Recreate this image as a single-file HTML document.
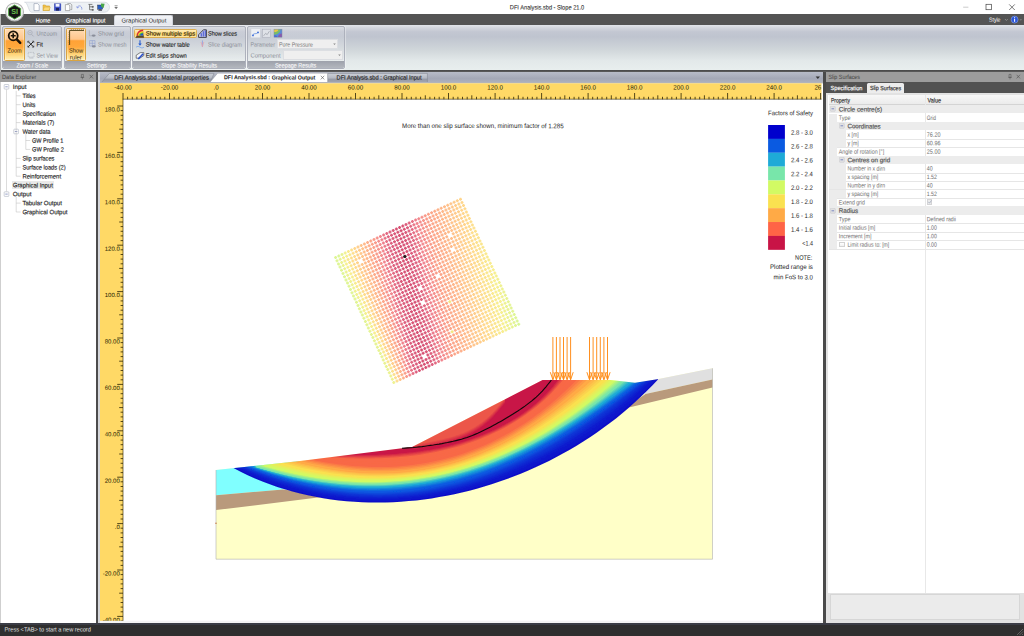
<!DOCTYPE html>
<html><head><meta charset="utf-8"><title>DFI Analysis.sbd - Slope 21.0</title>
<style>

*{box-sizing:border-box;margin:0;padding:0}
html,body{width:1024px;height:636px;overflow:hidden;background:#fff}
body{position:relative;font-family:'Liberation Sans', sans-serif;font-size:6px;color:#222;line-height:1}
svg text{font-family:'Liberation Sans', sans-serif}
.a{position:absolute;white-space:nowrap}
.t{position:absolute;white-space:nowrap;line-height:8px;height:8px}
.w{color:#fff}
.g{color:#8a8e96}
.b{font-weight:bold}
#titlebar{left:0;top:0;width:1024px;height:14px;background:#fff}
#tabbar{left:0;top:14px;width:1024px;height:11.3px;background:#545454}
#ribbon{left:0;top:25.3px;width:1024px;height:44.5px;background:linear-gradient(#e2e5ea 0%,#d4d7de 6%,#c3c7d2 15%,#bfc4cf 26%,#d0d6da 55%,#e3e9ea 80%,#e8eeee 100%)}
#ribsep{left:0;top:69.5px;width:1024px;height:3.3px;background:linear-gradient(#5a5a5a,#3e3e3e 35%,#7a7a7a 70%,#a4a6ac)}
.grp{position:absolute;top:26.4px;height:42.8px;border:0.6px solid #adb1bc;border-radius:2px;box-shadow:0 0 0 0.7px rgba(255,255,255,.5);background:linear-gradient(rgba(255,255,255,.10),rgba(255,255,255,.22))}
.grp .lb{position:absolute;left:0;right:0;bottom:0;height:7.6px;background:linear-gradient(#9da1ab,#b3b7be);color:#f4f5f7;text-align:center;line-height:7.4px;font-size:6px;border-radius:0 0 1.5px 1.5px;text-shadow:0 0 0.6px #e8e8e8}
.bigbtn{position:absolute;border:0.6px solid #d9a441;border-radius:1.5px;background:linear-gradient(#ffdcb4 0%,#ffc68c 33%,#ffa236 38%,#ffa83c 58%,#ffcf6e 78%,#fff0b4 100%);box-shadow:inset 0 0 0 0.6px rgba(255,255,255,.45)}
.hl{position:absolute;border:0.6px solid #dcae50;border-radius:1.5px;background:linear-gradient(#ffedb8,#ffdc84 45%,#ffd266 55%,#ffe6a0)}
#status{left:0;top:623.4px;width:1024px;height:12.6px;background:#2f2f2f;border-top:2px solid #3b3d46}
.phead{position:absolute;height:9.5px;background:#9d9d9d;color:#4a4a4a;line-height:9.5px;font-size:6.2px}
.tree .t{font-size:6.2px;color:#222}
.pg .t{font-size:6.1px;color:#727272}
.pg .grow{position:absolute;left:829px;width:195px;height:8.45px;background:#ececec}
.pg .line{position:absolute;left:829px;width:195px;height:0.6px;background:#e6e6e6}
.bx{position:absolute;width:5px;height:5px;border:0.6px solid #b4bac8;background:#fff;border-radius:1px}
.bx:after{content:"";position:absolute;left:0.9px;right:0.9px;top:1.55px;height:0.7px;background:#7a88c0}

</style></head>
<body>
<div class="a" id="titlebar"></div>
<div class="a" id="tabbar"></div>
<div class="a" id="ribbon"></div>
<div class="a" id="ribsep"></div>
<div class="a" style="left:0;top:14px;width:1px;height:58px;background:#b4b4b4"></div>
<svg class="a" style="left:508px;top:1px;overflow:visible" width="78" height="12"><text x="1.80" y="8.38" font-size="6.3" fill="#2a2a2a" stroke="#2a2a2a" stroke-width="0.09" textLength="74.40" lengthAdjust="spacingAndGlyphs" transform="rotate(0.1 1.80 8.38)">DFI Analysis.sbd - Slope 21.0</text></svg>
<svg class="a" style="left:955px;top:0" width="69" height="14" viewBox="955 0 69 14"><path d="M963.2 7.2h5.2" stroke="#b4b4b4" stroke-width="0.7"/><rect x="986" y="4.3" width="5.4" height="5.4" fill="none" stroke="#444" stroke-width="0.7"/><path d="M1009.2 4.4l5.6 5.6m0-5.6l-5.6 5.6" stroke="#444" stroke-width="0.7"/></svg>
<svg class="a" style="left:0;top:0" width="130" height="28" viewBox="0 0 130 28"><path d="M24.5 2.2H104.5a5 5 0 0 1 0 10H31.5C28.5 12.2 28 2.2 24.5 2.2Z" fill="#edf1f4" stroke="#c9ced6" stroke-width="0.6"/><path d="M34 3.6h3.6l1.6 1.6v5.4H34z" fill="#fff" stroke="#8a93a8" stroke-width="0.6"/><path d="M43 5h2.4l.8.9h3.3v4.6H43z" fill="#f3c24a" stroke="#c79a2a" stroke-width="0.5"/><path d="M43 10.5l1.3-3.4h6l-1.3 3.4z" fill="#fbd978" stroke="#c79a2a" stroke-width="0.4"/><rect x="54.3" y="3.8" width="6.6" height="6.8" fill="#3f51c8" stroke="#2a3aa0" stroke-width="0.4"/><rect x="55.6" y="3.9" width="3.9" height="2.8" fill="#f4f6ff"/><rect x="56" y="8" width="3" height="2.6" fill="#1c2560"/><path d="M65.4 4.6h3.2l1.2 1.2v4.8h-4.4z" fill="#fff" stroke="#777" stroke-width="0.55"/><path d="M67.4 3.6h3.2l1.2 1.2v4.8h-1.4" fill="none" stroke="#777" stroke-width="0.55"/><path d="M77.4 7.6c.4-2.4 4.2-2.4 4.4.8v1.2" fill="none" stroke="#93a2e2" stroke-width="1"/><path d="M76 6.2l1.2 2.4 2-1.4z" fill="#93a2e2"/><path d="M88.4 4.4h4M89.6 4.4v5.4M89.6 6.8h3.6M89.6 9.8h3.6" stroke="#555" stroke-width="0.7" fill="none"/><rect x="91.8" y="5.9" width="1.8" height="1.8" fill="#666"/><rect x="91.8" y="8.9" width="1.8" height="1.8" fill="#666"/><rect x="97.6" y="5" width="5" height="4.2" fill="#2a5fc0" stroke="#223" stroke-width="0.4"/><path d="M99 9.2h2.4l.8 1.6h-4z" fill="#445"/><path d="M101 3.4l3.6.4-1 4.2-2.6-1.4z" fill="#49a64a"/><path d="M114.6 5.6h3M114.8 7.2h2.6l-1.3 1.5z" stroke="#555" stroke-width="0.5" fill="#555"/><circle cx="14.6" cy="12" r="8.9" fill="#f0f0f0" stroke="#b4b4b4" stroke-width="1.1"/><circle cx="14.6" cy="12" r="8" fill="#fdfdfd" stroke="#dcdcdc" stroke-width="0.5"/><path d="M14.6 5l6 3.5v7l-6 3.5l-6-3.5v-7z" fill="#141414" stroke="#4fa83e" stroke-width="0.9"/><text x="14.6" y="14.4" font-size="6.6" font-weight="bold" fill="#68c04c" text-anchor="middle" font-family="'Liberation Sans', sans-serif" textLength="6.8" lengthAdjust="spacingAndGlyphs">SI</text></svg>
<div class="a" style="left:114.4px;top:14.8px;width:58.8px;height:10.8px;background:linear-gradient(#f2f3f6,#e4e6ec);border-radius:2px 2px 0 0;border:0.6px solid #d0d3da;border-bottom:none"></div>
<svg class="a" style="left:34px;top:14px;overflow:visible" width="18" height="12"><text x="1.80" y="8.44" font-size="5.9" fill="#fff" stroke="#fff" stroke-width="0.14" textLength="14.50" lengthAdjust="spacingAndGlyphs" transform="rotate(0.1 1.80 8.44)">Home</text></svg>
<svg class="a" style="left:64px;top:14px;overflow:visible" width="43" height="12"><text x="1.80" y="8.44" font-size="5.9" fill="#fff" stroke="#fff" stroke-width="0.14" textLength="39.60" lengthAdjust="spacingAndGlyphs" transform="rotate(0.1 1.80 8.44)">Graphical Input</text></svg>
<svg class="a" style="left:120px;top:14px;overflow:visible" width="48" height="12"><text x="1.50" y="8.44" font-size="5.9" fill="#1c1c1c" textLength="44.80" lengthAdjust="spacingAndGlyphs" transform="rotate(0.1 1.50 8.44)">Graphical Output</text></svg>
<svg class="a" style="left:988px;top:13px;overflow:visible" width="15" height="12"><text x="1.00" y="8.68" font-size="6" fill="#fff" textLength="11.50" lengthAdjust="spacingAndGlyphs" transform="rotate(0.1 1.00 8.68)">Style</text></svg>
<svg class="a" style="left:1000px;top:14px" width="24" height="11" viewBox="1000 14 24 11"><path d="M1005 19l1.4 1.5 1.4-1.5" fill="none" stroke="#a8a8a8" stroke-width="0.6"/><circle cx="1014.6" cy="19.6" r="3.5" fill="#2b56d8" stroke="#9ab0f0" stroke-width="0.5"/><rect x="1014.1" y="18.8" width="1" height="3" fill="#fff"/><rect x="1014.1" y="17.2" width="1" height="1" fill="#fff"/><path d="M1019.6 19.4l1.2 1.2 1.2-1.2z" fill="#9a9a9a"/></svg>
<div class="grp" style="left:2.2px;width:59.4px"><div class="lb"></div></div>
<div class="bigbtn" style="left:4.4px;top:28.3px;width:20.4px;height:32.6px"></div>
<svg class="a" style="left:4px;top:28px" width="22" height="20" viewBox="4 28 22 20"><circle cx="13.2" cy="35.8" r="4.5" fill="none" stroke="#1c1408" stroke-width="1.8"/><path d="M16.8 39.4l3.4 3.4" stroke="#1c1408" stroke-width="2.5" stroke-linecap="round"/><path d="M10.7 35.8h5M13.2 33.3v5" stroke="#1c1408" stroke-width="1.6"/></svg>
<svg class="a" style="left:6px;top:44px;overflow:visible" width="18" height="12"><text x="1.50" y="8.62" font-size="6.25" fill="#33240a" textLength="14.10" lengthAdjust="spacingAndGlyphs" transform="rotate(0.1 1.50 8.62)">Zoom</text></svg>
<svg class="a" style="left:26px;top:28px" width="10" height="32" viewBox="26 28 10 32"><circle cx="30" cy="32.6" r="2.2" fill="none" stroke="#a8acb6" stroke-width="0.7"/><path d="M31.6 34.4l2 2" stroke="#a8acb6" stroke-width="0.9"/><path d="M28.9 32.6h2.2" stroke="#a8acb6" stroke-width="0.6"/><path d="M28.2 41.6l5.2 5.2M33.4 41.6l-5.2 5.2" stroke="#222" stroke-width="1"/><path d="M27.8 41.2h1.6M27.8 41.2v1.6M33.8 41.2h-1.6M33.8 41.2v1.6M27.8 47.2h1.6M27.8 47.2v-1.6M33.8 47.2h-1.6M33.8 47.2v-1.6" stroke="#222" stroke-width="0.6"/><rect x="28.2" y="52.4" width="5.8" height="4.6" fill="none" stroke="#a8acb6" stroke-width="0.6" stroke-dasharray="1 0.6"/><path d="M29.4 58h4" stroke="#a8acb6" stroke-width="0.6"/></svg>
<svg class="a" style="left:35px;top:27px;overflow:visible" width="24" height="12"><text x="1.50" y="8.62" font-size="6.25" fill="#8a8e96" textLength="20.70" lengthAdjust="spacingAndGlyphs" transform="rotate(0.1 1.50 8.62)">Unzoom</text></svg>
<svg class="a" style="left:35px;top:38px;overflow:visible" width="10" height="12"><text x="1.50" y="8.62" font-size="6.25" fill="#202020" stroke="#202020" stroke-width="0.13" textLength="6.30" lengthAdjust="spacingAndGlyphs" transform="rotate(0.1 1.50 8.62)">Fit</text></svg>
<svg class="a" style="left:35px;top:49px;overflow:visible" width="25" height="12"><text x="1.50" y="8.62" font-size="6.25" fill="#8a8e96" textLength="21.30" lengthAdjust="spacingAndGlyphs" transform="rotate(0.1 1.50 8.62)">Set View</text></svg>
<div class="grp" style="left:63.6px;width:67.2px"><div class="lb"></div></div>
<div class="bigbtn" style="left:66px;top:28.3px;width:20.3px;height:32.6px"></div>
<svg class="a" style="left:66px;top:28px" width="21" height="20" viewBox="66 28 21 20"><path d="M69.6 30.4H84M69.6 30.4V45" stroke="#3a3008" stroke-width="0.9" fill="none"/><path d="M71.5 30.4v-1.2M73.5 30.4v-1.2M75.5 30.4v-1.2M77.5 30.4v-1.2M79.5 30.4v-1.2M81.5 30.4v-1.2M83.5 30.4v-1.2M69.6 32.5h-1M69.6 34.5h-1M69.6 36.5h-1M69.6 38.5h-1M69.6 40.5h-1M69.6 42.5h-1M69.6 44.5h-1" stroke="#6a5a20" stroke-width="0.5"/></svg>
<svg class="a" style="left:67px;top:44px;overflow:visible" width="18" height="12"><text x="1.90" y="8.62" font-size="6.25" fill="#33240a" textLength="14.10" lengthAdjust="spacingAndGlyphs" transform="rotate(0.1 1.90 8.62)">Show</text></svg>
<svg class="a" style="left:68px;top:51px;overflow:visible" width="16" height="12"><text x="1.80" y="8.52" font-size="6.25" fill="#33240a" textLength="12.00" lengthAdjust="spacingAndGlyphs" transform="rotate(0.1 1.80 8.52)">ruler</text></svg>
<svg class="a" style="left:88px;top:28px" width="10" height="22" viewBox="88 28 10 22"><path d="M89.4 30.4v5.4h6" stroke="#a0a4b0" stroke-width="0.6" fill="none"/><ellipse cx="93.6" cy="35.6" rx="2" ry="1.1" fill="#8a8e9a"/><path d="M89.6 40.6h5.4v5.4h-5.4zM92.3 40.6v5.4M89.6 43.3h5.4" stroke="#8f9fd0" stroke-width="0.6" fill="none"/><ellipse cx="93.8" cy="46.4" rx="2" ry="1.1" fill="#8a8e9a"/></svg>
<svg class="a" style="left:97px;top:27px;overflow:visible" width="29" height="12"><text x="1.10" y="8.62" font-size="6.25" fill="#8a8e96" textLength="25.90" lengthAdjust="spacingAndGlyphs" transform="rotate(0.1 1.10 8.62)">Show grid</text></svg>
<svg class="a" style="left:97px;top:38px;overflow:visible" width="32" height="12"><text x="1.10" y="8.62" font-size="6.25" fill="#8a8e96" textLength="28.30" lengthAdjust="spacingAndGlyphs" transform="rotate(0.1 1.10 8.62)">Show mesh</text></svg>
<div class="grp" style="left:132.4px;width:113.6px"><div class="lb"></div></div>
<div class="hl" style="left:134.4px;top:28.6px;width:62.4px;height:9.9px"></div>
<svg class="a" style="left:134px;top:28px" width="12" height="32" viewBox="134 28 12 32"><path d="M135.8 37.6l1.2-2.2h6.4l.4 2.2z" fill="#5a4628" stroke="#3a2c14" stroke-width="0.4"/><path d="M136.6 35.6c.2-3.4 2.6-5.8 6.6-6v6z" fill="#d8283c"/><path d="M137.8 35.6c.2-2.6 2-4.2 5.4-4.6v4.6z" fill="#f2d428"/><path d="M139 35.6c.2-1.8 1.6-3 4.2-3.2v3.2z" fill="#38b050"/><path d="M140.2 35.6c.2-1 1.2-1.8 3-2v2z" fill="#2848d8"/><path d="M140 40.2v4.6" stroke="#2a5fd0" stroke-width="1.1"/><path d="M138.2 43.4l1.8 2.4 1.8-2.4z" fill="#2a5fd0"/><path d="M136 47.2c1.4-1 2.6-1 4 0s2.6 1 4 0" stroke="#7aa6e8" stroke-width="0.8" fill="none"/><path d="M136.2 58.2v-3l4-2.6h3.6v3l-4 2.6z" fill="#f4f6fa" stroke="#333" stroke-width="0.6"/><path d="M137.6 58.4l5-5.2 1.2 1-5 5.2z" fill="#2a4fc8"/></svg>
<svg class="a" style="left:144px;top:27px;overflow:visible" width="53" height="12"><text x="1.80" y="8.62" font-size="6.25" fill="#2a1e08" stroke="#2a1e08" stroke-width="0.13" textLength="49.40" lengthAdjust="spacingAndGlyphs" transform="rotate(0.1 1.80 8.62)">Show multiple slips</text></svg>
<svg class="a" style="left:144px;top:38px;overflow:visible" width="47" height="12"><text x="1.80" y="8.62" font-size="6.25" fill="#202020" stroke="#202020" stroke-width="0.13" textLength="43.80" lengthAdjust="spacingAndGlyphs" transform="rotate(0.1 1.80 8.62)">Show water table</text></svg>
<svg class="a" style="left:144px;top:49px;overflow:visible" width="44" height="12"><text x="1.80" y="8.62" font-size="6.25" fill="#202020" stroke="#202020" stroke-width="0.13" textLength="40.90" lengthAdjust="spacingAndGlyphs" transform="rotate(0.1 1.80 8.62)">Edit slips shown</text></svg>
<svg class="a" style="left:198px;top:28px" width="10" height="22" viewBox="198 28 10 22"><path d="M198.6 37.4v-2.6l4.8-5h3v7.6z" fill="#d4d8ee" stroke="#34343e" stroke-width="0.9" stroke-linejoin="round"/><path d="M201.2 36.6v-3.4M203.2 36.6v-5.4M205.2 36.6v-6.2" stroke="#2a3cc8" stroke-width="1"/><path d="M202.4 40.4v6.6" stroke="#9aa6e0" stroke-width="1"/><path d="M201 42l1.4 4.8 1.4-4.8" stroke="#e8a0a8" stroke-width="0.7" fill="none"/></svg>
<svg class="a" style="left:207px;top:27px;overflow:visible" width="33" height="12"><text x="1.00" y="8.62" font-size="6.25" fill="#202020" stroke="#202020" stroke-width="0.13" textLength="29.00" lengthAdjust="spacingAndGlyphs" transform="rotate(0.1 1.00 8.62)">Show slices</text></svg>
<svg class="a" style="left:207px;top:38px;overflow:visible" width="37" height="12"><text x="1.00" y="8.62" font-size="6.25" fill="#8a8e96" textLength="33.80" lengthAdjust="spacingAndGlyphs" transform="rotate(0.1 1.00 8.62)">Slice diagram</text></svg>
<div class="grp" style="left:247.4px;width:97.2px"><div class="lb"></div></div>
<svg class="a" style="left:250px;top:28px" width="36" height="11" viewBox="250 28 36 11"><rect x="251" y="28.8" width="9.2" height="9" fill="#eef0f4" stroke="#cfd3da" stroke-width="0.5"/><path d="M252.4 35.6c2-3.6 3.6-.4 6-3.6" stroke="#5a8ae0" stroke-width="0.8" fill="none"/><circle cx="253" cy="35.4" r="0.9" fill="#3a6ad8"/><circle cx="258" cy="32.4" r="0.9" fill="#3a6ad8"/><rect x="262.6" y="29.2" width="8" height="8" fill="#dfe2e8" stroke="#a8acb6" stroke-width="0.5"/><path d="M263.6 35.8l2-2.4 1.6 1.2 2.2-3.4" stroke="#8a8e98" stroke-width="0.6" fill="none"/><rect x="274" y="29.2" width="8" height="8" fill="#5a8ad8" stroke="#8a8e9c" stroke-width="0.5"/><path d="M274.2 29.4h4.2c.4 1.6-1.4 2.6-4.2 2.8z" fill="#e8c840"/><path d="M274.2 32.4c2.6-.2 4.4-1 4.6-2.8h1.6c0 3-3 4.8-6.2 5.2z" fill="#7cc060"/><path d="M278 37c.4-2 2-3.2 3.8-3.4v3.4z" fill="#8a5aa8"/><path d="M274.2 35.2c1.6 0 2.8.6 3.4 1.8h-3.4z" fill="#4a6ad0"/></svg>
<svg class="a" style="left:249px;top:38px;overflow:visible" width="28" height="12"><text x="1.50" y="8.62" font-size="6.25" fill="#8a8e96" textLength="24.50" lengthAdjust="spacingAndGlyphs" transform="rotate(0.1 1.50 8.62)">Parameter</text></svg>
<svg class="a" style="left:249px;top:49px;overflow:visible" width="34" height="12"><text x="1.50" y="8.62" font-size="6.25" fill="#8a8e96" textLength="30.00" lengthAdjust="spacingAndGlyphs" transform="rotate(0.1 1.50 8.62)">Component</text></svg>
<div class="a" style="left:277.4px;top:39.2px;width:60.8px;height:9.7px;background:#efefef;border:0.5px solid #dcdee2"></div>
<svg class="a" style="left:278px;top:38px;overflow:visible" width="38" height="12"><text x="1.00" y="8.62" font-size="6.25" fill="#777" textLength="34.00" lengthAdjust="spacingAndGlyphs" transform="rotate(0.1 1.00 8.62)">Pore Pressure</text></svg>
<div class="a" style="left:282.6px;top:50.2px;width:60px;height:9.8px;background:#efefef;border:0.5px solid #dcdee2"></div>
<svg class="a" style="left:330px;top:40px" width="14" height="20" viewBox="330 40 14 20"><path d="M333.2 43.4h2.6l-1.3 1.6zM338.2 54.4h2.6l-1.3 1.6z" fill="#888"/></svg>
<svg class="a" style="left:15px;top:59px;overflow:visible" width="36" height="12"><text x="1.40" y="8.55" font-size="6.2" fill="#f2f3f6" stroke="#fff" stroke-width="0.11" textLength="32.00" lengthAdjust="spacingAndGlyphs" transform="rotate(0.1 1.40 8.55)">Zoom / Scale</text></svg>
<svg class="a" style="left:85px;top:59px;overflow:visible" width="24" height="12"><text x="1.80" y="8.55" font-size="6.2" fill="#f2f3f6" stroke="#fff" stroke-width="0.11" textLength="20.10" lengthAdjust="spacingAndGlyphs" transform="rotate(0.1 1.80 8.55)">Settings</text></svg>
<svg class="a" style="left:160px;top:59px;overflow:visible" width="59" height="12"><text x="1.30" y="8.55" font-size="6.2" fill="#f2f3f6" stroke="#fff" stroke-width="0.11" textLength="55.80" lengthAdjust="spacingAndGlyphs" transform="rotate(0.1 1.30 8.55)">Slope Stability Results</text></svg>
<svg class="a" style="left:274px;top:59px;overflow:visible" width="45" height="12"><text x="1.00" y="8.55" font-size="6.2" fill="#f2f3f6" stroke="#fff" stroke-width="0.11" textLength="41.30" lengthAdjust="spacingAndGlyphs" transform="rotate(0.1 1.00 8.55)">Seepage Results</text></svg>
<div class="a" style="left:0;top:72px;width:96px;height:552px;background:#fff"></div>
<div class="a" style="left:0;top:81.5px;width:1px;height:542px;background:#cfcfcf"></div>
<div class="phead" style="left:0;top:72px;width:95.5px;"></div>
<svg class="a" style="left:1px;top:70px;overflow:visible" width="38" height="12"><text x="1.00" y="9.01" font-size="6.1" fill="#444" textLength="34.50" lengthAdjust="spacingAndGlyphs" transform="rotate(0.1 1.00 9.01)">Data Explorer</text></svg>
<svg class="a" style="left:78px;top:72px" width="18" height="10" viewBox="78 72 18 10"><path d="M81.4 74.4h2v3h-2zM80.6 77.4h3.6M82.4 77.4v2" stroke="#555" stroke-width="0.55" fill="none"/><path d="M89.6 74.8l3.4 3.6m0-3.6l-3.4 3.6" stroke="#555" stroke-width="0.65"/></svg>
<div class="a" style="left:95.5px;top:72px;width:2.5px;height:552px;background:#4c4c4c"></div>
<div class="a" style="left:98px;top:72px;width:2px;height:552px;background:#d4d6da"></div>
<div class="tree">
<svg class="a" style="left:11px;top:80px;overflow:visible" width="17" height="12"><text x="1.80" y="9.03" font-size="6.3" fill="#161616" stroke="#222" stroke-width="0.14" textLength="13.60" lengthAdjust="spacingAndGlyphs" transform="rotate(0.1 1.80 9.03)">Input</text></svg>
<svg class="a" style="left:21px;top:89px;overflow:visible" width="17" height="12"><text x="1.40" y="8.97" font-size="6.3" fill="#161616" stroke="#222" stroke-width="0.14" textLength="13.30" lengthAdjust="spacingAndGlyphs" transform="rotate(0.1 1.40 8.97)">Titles</text></svg>
<svg class="a" style="left:21px;top:98px;overflow:visible" width="17" height="12"><text x="1.40" y="8.91" font-size="6.3" fill="#161616" stroke="#222" stroke-width="0.14" textLength="13.10" lengthAdjust="spacingAndGlyphs" transform="rotate(0.1 1.40 8.91)">Units</text></svg>
<svg class="a" style="left:21px;top:107px;overflow:visible" width="37" height="12"><text x="1.40" y="8.85" font-size="6.3" fill="#161616" stroke="#222" stroke-width="0.14" textLength="33.40" lengthAdjust="spacingAndGlyphs" transform="rotate(0.1 1.40 8.85)">Specification</text></svg>
<svg class="a" style="left:21px;top:116px;overflow:visible" width="35" height="12"><text x="1.40" y="8.79" font-size="6.3" fill="#161616" stroke="#222" stroke-width="0.14" textLength="31.90" lengthAdjust="spacingAndGlyphs" transform="rotate(0.1 1.40 8.79)">Materials (7)</text></svg>
<svg class="a" style="left:21px;top:125px;overflow:visible" width="32" height="12"><text x="1.40" y="8.73" font-size="6.3" fill="#161616" stroke="#222" stroke-width="0.14" textLength="28.10" lengthAdjust="spacingAndGlyphs" transform="rotate(0.1 1.40 8.73)">Water data</text></svg>
<svg class="a" style="left:31px;top:134px;overflow:visible" width="35" height="12"><text x="1.00" y="8.67" font-size="6.3" fill="#161616" stroke="#222" stroke-width="0.14" textLength="31.40" lengthAdjust="spacingAndGlyphs" transform="rotate(0.1 1.00 8.67)">GW Profile 1</text></svg>
<svg class="a" style="left:31px;top:143px;overflow:visible" width="35" height="12"><text x="1.00" y="8.61" font-size="6.3" fill="#161616" stroke="#222" stroke-width="0.14" textLength="31.90" lengthAdjust="spacingAndGlyphs" transform="rotate(0.1 1.00 8.61)">GW Profile 2</text></svg>
<svg class="a" style="left:21px;top:152px;overflow:visible" width="35" height="12"><text x="1.40" y="8.55" font-size="6.3" fill="#161616" stroke="#222" stroke-width="0.14" textLength="31.90" lengthAdjust="spacingAndGlyphs" transform="rotate(0.1 1.40 8.55)">Slip surfaces</text></svg>
<svg class="a" style="left:21px;top:161px;overflow:visible" width="47" height="12"><text x="1.40" y="8.49" font-size="6.3" fill="#161616" stroke="#222" stroke-width="0.14" textLength="43.20" lengthAdjust="spacingAndGlyphs" transform="rotate(0.1 1.40 8.49)">Surface loads (2)</text></svg>
<svg class="a" style="left:21px;top:170px;overflow:visible" width="42" height="12"><text x="1.40" y="8.43" font-size="6.3" fill="#161616" stroke="#222" stroke-width="0.14" textLength="38.70" lengthAdjust="spacingAndGlyphs" transform="rotate(0.1 1.40 8.43)">Reinforcement</text></svg>
<div class="a" style="left:11.6px;top:181.0px;width:42.5px;height:8.4px;background:#e9e9e9"></div>
<svg class="a" style="left:11px;top:179px;overflow:visible" width="44" height="12"><text x="1.80" y="8.37" font-size="6.3" fill="#161616" stroke="#222" stroke-width="0.14" textLength="40.00" lengthAdjust="spacingAndGlyphs" transform="rotate(0.1 1.80 8.37)">Graphical Input</text></svg>
<svg class="a" style="left:11px;top:188px;overflow:visible" width="22" height="12"><text x="1.80" y="8.31" font-size="6.3" fill="#161616" stroke="#222" stroke-width="0.14" textLength="18.60" lengthAdjust="spacingAndGlyphs" transform="rotate(0.1 1.80 8.31)">Output</text></svg>
<svg class="a" style="left:21px;top:197px;overflow:visible" width="43" height="12"><text x="1.40" y="8.25" font-size="6.3" fill="#161616" stroke="#222" stroke-width="0.14" textLength="39.50" lengthAdjust="spacingAndGlyphs" transform="rotate(0.1 1.40 8.25)">Tabular Output</text></svg>
<svg class="a" style="left:21px;top:206px;overflow:visible" width="49" height="12"><text x="1.40" y="8.19" font-size="6.3" fill="#161616" stroke="#222" stroke-width="0.14" textLength="45.00" lengthAdjust="spacingAndGlyphs" transform="rotate(0.1 1.40 8.19)">Graphical Output</text></svg>
<svg class="a" style="left:0;top:80px" width="96" height="140" viewBox="0 80 96 140"><rect x="4.2" y="84.5" width="4.6" height="4.6" fill="#fff" stroke="#9aa2b2" stroke-width="0.5" rx="0.6"/><path d="M5.3 86.8h2.4" stroke="#4a5aa0" stroke-width="0.6"/><path d="M16.2 95.8h4.4" stroke="#b8b8b8" stroke-width="0.5"/><path d="M16.2 104.7h4.4" stroke="#b8b8b8" stroke-width="0.5"/><path d="M16.2 113.7h4.4" stroke="#b8b8b8" stroke-width="0.5"/><path d="M16.2 122.6h4.4" stroke="#b8b8b8" stroke-width="0.5"/><rect x="13.8" y="129.2" width="4.6" height="4.6" fill="#fff" stroke="#9aa2b2" stroke-width="0.5" rx="0.6"/><path d="M14.9 131.5h2.4" stroke="#4a5aa0" stroke-width="0.6"/><path d="M25.8 140.5h4.4" stroke="#b8b8b8" stroke-width="0.5"/><path d="M25.8 149.4h4.4" stroke="#b8b8b8" stroke-width="0.5"/><path d="M16.2 158.4h4.4" stroke="#b8b8b8" stroke-width="0.5"/><path d="M16.2 167.3h4.4" stroke="#b8b8b8" stroke-width="0.5"/><path d="M16.2 176.2h4.4" stroke="#b8b8b8" stroke-width="0.5"/><rect x="4.2" y="191.8" width="4.6" height="4.6" fill="#fff" stroke="#9aa2b2" stroke-width="0.5" rx="0.6"/><path d="M5.3 194.1h2.4" stroke="#4a5aa0" stroke-width="0.6"/><path d="M16.2 203.1h4.4" stroke="#b8b8b8" stroke-width="0.5"/><path d="M16.2 212.0h4.4" stroke="#b8b8b8" stroke-width="0.5"/><path d="M6.5 89.4V191.5M16.2 90.8V176.2M25.8 134.1V149.4M16.2 196.7V212.0" stroke="#b8b8b8" stroke-width="0.5" fill="none"/></svg>
</div>
<div class="a" style="left:100px;top:72px;width:723px;height:10.8px;background:linear-gradient(#b8bcc8,#a4a8b6 60%,#aeb2be)"></div>
<svg class="a" style="left:100px;top:72px" width="723" height="11" viewBox="100 72 723 11"><defs><linearGradient id="tg" x1="0" y1="0" x2="0" y2="1"><stop offset="0" stop-color="#ccd0d8"/><stop offset="0.5" stop-color="#b4b8c2"/><stop offset="0.58" stop-color="#9498a4"/><stop offset="1" stop-color="#a4a8b2"/></linearGradient></defs><path d="M101 83L109.4 73.4H214L210 83z" fill="url(#tg)" stroke="#7c808a" stroke-width="0.5"/><path d="M327.6 83V73.4H427.4V83z" fill="url(#tg)" stroke="#7c808a" stroke-width="0.5"/><path d="M209.4 83L217.6 73.2H327.6V83z" fill="#fff" stroke="#8a8e98" stroke-width="0.4"/><path d="M320.8 75.8l3.4 3.6m0-3.6l-3.4 3.6" stroke="#555" stroke-width="0.6"/><path d="M815.6 76.4h4.4l-2.2 2.6z" fill="#333"/></svg>
<svg class="a" style="left:113px;top:71px;overflow:visible" width="98" height="12"><text x="1.20" y="8.44" font-size="5.9" fill="#1c1c1c" stroke="#333" stroke-width="0.18" textLength="94.55" lengthAdjust="spacingAndGlyphs" transform="rotate(0.1 1.20 8.44)">DFI Analysis.sbd : Material properties</text></svg>
<svg class="a" style="left:223px;top:71px;overflow:visible" width="95" height="12"><text x="1.00" y="8.31" font-size="5.8" fill="#141414" font-weight="bold" textLength="91.30" lengthAdjust="spacingAndGlyphs" transform="rotate(0.1 1.00 8.31)">DFI Analysis.sbd : Graphical Output</text></svg>
<svg class="a" style="left:335px;top:71px;overflow:visible" width="88" height="12"><text x="1.60" y="8.44" font-size="5.9" fill="#1c1c1c" stroke="#333" stroke-width="0.18" textLength="84.90" lengthAdjust="spacingAndGlyphs" transform="rotate(0.1 1.60 8.44)">DFI Analysis.sbd : Graphical Input</text></svg>
<svg style="position:absolute;left:100px;top:82px" width="723" height="541" viewBox="100 82 723 541" font-family="'Liberation Sans', sans-serif">
<rect x="100" y="82" width="723" height="541" fill="#fff"/>
<rect x="100" y="82" width="723" height="1.4" fill="#b2b4ba"/>
<rect x="100" y="83.3" width="721.5" height="15.9" fill="#ffd966"/>
<rect x="100" y="83" width="23" height="540" fill="#ffd966"/>
<rect x="123" y="99" width="698.5" height="524" fill="#fff"/>
<path d="M122.8 99.2H821.5M123 99V623" stroke="#4a3d10" stroke-width="0.7" fill="none"/>
<path d="M123.0 93V99.3M127.6 96.8V99.3M132.3 96.8V99.3M136.9 96.8V99.3M141.6 96.8V99.3M146.2 95.3V99.3M150.9 96.8V99.3M155.5 96.8V99.3M160.2 96.8V99.3M164.8 96.8V99.3M169.5 93V99.3M174.1 96.8V99.3M178.8 96.8V99.3M183.4 96.8V99.3M188.1 96.8V99.3M192.7 95.3V99.3M197.4 96.8V99.3M202.0 96.8V99.3M206.7 96.8V99.3M211.3 96.8V99.3M216.0 93V99.3M220.7 96.8V99.3M225.3 96.8V99.3M230.0 96.8V99.3M234.6 96.8V99.3M239.3 95.3V99.3M243.9 96.8V99.3M248.6 96.8V99.3M253.2 96.8V99.3M257.9 96.8V99.3M262.5 93V99.3M267.2 96.8V99.3M271.8 96.8V99.3M276.5 96.8V99.3M281.1 96.8V99.3M285.8 95.3V99.3M290.4 96.8V99.3M295.1 96.8V99.3M299.7 96.8V99.3M304.4 96.8V99.3M309.0 93V99.3M313.7 96.8V99.3M318.3 96.8V99.3M323.0 96.8V99.3M327.6 96.8V99.3M332.3 95.3V99.3M336.9 96.8V99.3M341.6 96.8V99.3M346.2 96.8V99.3M350.9 96.8V99.3M355.5 93V99.3M360.2 96.8V99.3M364.8 96.8V99.3M369.5 96.8V99.3M374.1 96.8V99.3M378.8 95.3V99.3M383.4 96.8V99.3M388.1 96.8V99.3M392.7 96.8V99.3M397.4 96.8V99.3M402.0 93V99.3M406.7 96.8V99.3M411.3 96.8V99.3M416.0 96.8V99.3M420.6 96.8V99.3M425.3 95.3V99.3M429.9 96.8V99.3M434.6 96.8V99.3M439.2 96.8V99.3M443.9 96.8V99.3M448.5 93V99.3M453.2 96.8V99.3M457.9 96.8V99.3M462.5 96.8V99.3M467.2 96.8V99.3M471.8 95.3V99.3M476.5 96.8V99.3M481.1 96.8V99.3M485.8 96.8V99.3M490.4 96.8V99.3M495.1 93V99.3M499.7 96.8V99.3M504.4 96.8V99.3M509.0 96.8V99.3M513.7 96.8V99.3M518.3 95.3V99.3M523.0 96.8V99.3M527.6 96.8V99.3M532.3 96.8V99.3M536.9 96.8V99.3M541.6 93V99.3M546.2 96.8V99.3M550.9 96.8V99.3M555.5 96.8V99.3M560.2 96.8V99.3M564.8 95.3V99.3M569.5 96.8V99.3M574.1 96.8V99.3M578.8 96.8V99.3M583.4 96.8V99.3M588.1 93V99.3M592.7 96.8V99.3M597.4 96.8V99.3M602.0 96.8V99.3M606.7 96.8V99.3M611.3 95.3V99.3M616.0 96.8V99.3M620.6 96.8V99.3M625.3 96.8V99.3M629.9 96.8V99.3M634.6 93V99.3M639.2 96.8V99.3M643.9 96.8V99.3M648.5 96.8V99.3M653.2 96.8V99.3M657.8 95.3V99.3M662.5 96.8V99.3M667.1 96.8V99.3M671.8 96.8V99.3M676.4 96.8V99.3M681.1 93V99.3M685.8 96.8V99.3M690.4 96.8V99.3M695.1 96.8V99.3M699.7 96.8V99.3M704.4 95.3V99.3M709.0 96.8V99.3M713.7 96.8V99.3M718.3 96.8V99.3M723.0 96.8V99.3M727.6 93V99.3M732.3 96.8V99.3M736.9 96.8V99.3M741.6 96.8V99.3M746.2 96.8V99.3M750.9 95.3V99.3M755.5 96.8V99.3M760.2 96.8V99.3M764.8 96.8V99.3M769.5 96.8V99.3M774.1 93V99.3M778.8 96.8V99.3M783.4 96.8V99.3M788.1 96.8V99.3M792.7 96.8V99.3M797.4 95.3V99.3M802.0 96.8V99.3M806.7 96.8V99.3M811.3 96.8V99.3M816.0 96.8V99.3M820.6 93V99.3" stroke="#2a2204" stroke-width="0.8" fill="none"/>
<path d="M120.6 621.0H123M117.2 616.4H123M120.6 611.8H123M120.6 607.1H123M120.6 602.5H123M120.6 597.8H123M119.2 593.2H123M120.6 588.6H123M120.6 583.9H123M120.6 579.3H123M120.6 574.6H123M117.2 570.0H123M120.6 565.4H123M120.6 560.7H123M120.6 556.1H123M120.6 551.4H123M119.2 546.8H123M120.6 542.2H123M120.6 537.5H123M120.6 532.9H123M120.6 528.2H123M117.2 523.6H123M120.6 519.0H123M120.6 514.3H123M120.6 509.7H123M120.6 505.0H123M119.2 500.4H123M120.6 495.8H123M120.6 491.1H123M120.6 486.5H123M120.6 481.8H123M117.2 477.2H123M120.6 472.6H123M120.6 467.9H123M120.6 463.3H123M120.6 458.6H123M119.2 454.0H123M120.6 449.4H123M120.6 444.7H123M120.6 440.1H123M120.6 435.4H123M117.2 430.8H123M120.6 426.2H123M120.6 421.5H123M120.6 416.9H123M120.6 412.2H123M119.2 407.6H123M120.6 403.0H123M120.6 398.3H123M120.6 393.7H123M120.6 389.0H123M117.2 384.4H123M120.6 379.8H123M120.6 375.1H123M120.6 370.5H123M120.6 365.8H123M119.2 361.2H123M120.6 356.6H123M120.6 351.9H123M120.6 347.3H123M120.6 342.6H123M117.2 338.0H123M120.6 333.4H123M120.6 328.7H123M120.6 324.1H123M120.6 319.4H123M119.2 314.8H123M120.6 310.2H123M120.6 305.5H123M120.6 300.9H123M120.6 296.2H123M117.2 291.6H123M120.6 287.0H123M120.6 282.3H123M120.6 277.7H123M120.6 273.0H123M119.2 268.4H123M120.6 263.8H123M120.6 259.1H123M120.6 254.5H123M120.6 249.8H123M117.2 245.2H123M120.6 240.6H123M120.6 235.9H123M120.6 231.3H123M120.6 226.6H123M119.2 222.0H123M120.6 217.4H123M120.6 212.7H123M120.6 208.1H123M120.6 203.4H123M117.2 198.8H123M120.6 194.2H123M120.6 189.5H123M120.6 184.9H123M120.6 180.2H123M119.2 175.6H123M120.6 171.0H123M120.6 166.3H123M120.6 161.7H123M120.6 157.0H123M117.2 152.4H123M120.6 147.8H123M120.6 143.1H123M120.6 138.5H123M120.6 133.8H123M119.2 129.2H123M120.6 124.6H123M120.6 119.9H123M120.6 115.3H123M120.6 110.6H123M117.2 106.0H123" stroke="#2a2204" stroke-width="0.8" fill="none"/>
<g font-size="6.2" fill="#241c02" text-anchor="middle">
<text x="123.0" y="89.6" transform="rotate(0.1 123.0 89.6)">-40.00</text>
<text x="169.5" y="89.6" transform="rotate(0.1 169.5 89.6)">-20.00</text>
<text x="216.0" y="89.6" transform="rotate(0.1 216.0 89.6)">.0</text>
<text x="262.5" y="89.6" transform="rotate(0.1 262.5 89.6)">20.00</text>
<text x="309.0" y="89.6" transform="rotate(0.1 309.0 89.6)">40.00</text>
<text x="355.5" y="89.6" transform="rotate(0.1 355.5 89.6)">60.00</text>
<text x="402.0" y="89.6" transform="rotate(0.1 402.0 89.6)">80.00</text>
<text x="448.5" y="89.6" transform="rotate(0.1 448.5 89.6)">100.0</text>
<text x="495.1" y="89.6" transform="rotate(0.1 495.1 89.6)">120.0</text>
<text x="541.6" y="89.6" transform="rotate(0.1 541.6 89.6)">140.0</text>
<text x="588.1" y="89.6" transform="rotate(0.1 588.1 89.6)">160.0</text>
<text x="634.6" y="89.6" transform="rotate(0.1 634.6 89.6)">180.0</text>
<text x="681.1" y="89.6" transform="rotate(0.1 681.1 89.6)">200.0</text>
<text x="727.6" y="89.6" transform="rotate(0.1 727.6 89.6)">220.0</text>
<text x="774.1" y="89.6" transform="rotate(0.1 774.1 89.6)">240.0</text>
</g>
<text x="821.3" y="89.6" font-size="6.2" fill="#241c02" text-anchor="end" transform="rotate(0.1 821.3 89.6)">26</text>
<g font-size="6.0" fill="#241c02" text-anchor="end">
<text x="119.8" y="621.9" transform="rotate(0.1 119.8 621.9)">-40.00</text>
<text x="119.8" y="575.5" transform="rotate(0.1 119.8 575.5)">-20.00</text>
<text x="119.8" y="529.1" transform="rotate(0.1 119.8 529.1)">.0</text>
<text x="119.8" y="482.7" transform="rotate(0.1 119.8 482.7)">20.00</text>
<text x="119.8" y="436.3" transform="rotate(0.1 119.8 436.3)">40.00</text>
<text x="119.8" y="389.9" transform="rotate(0.1 119.8 389.9)">60.00</text>
<text x="119.8" y="343.5" transform="rotate(0.1 119.8 343.5)">80.00</text>
<text x="119.8" y="297.1" transform="rotate(0.1 119.8 297.1)">100.0</text>
<text x="119.8" y="250.7" transform="rotate(0.1 119.8 250.7)">120.0</text>
<text x="119.8" y="204.3" transform="rotate(0.1 119.8 204.3)">140.0</text>
<text x="119.8" y="157.9" transform="rotate(0.1 119.8 157.9)">160.0</text>
<text x="119.8" y="111.5" transform="rotate(0.1 119.8 111.5)">180.0</text>
</g>
<g>
<polygon points="216,470 300,461.0 412,447 542.5,380 610.6,380 635,382.8 658.7,379 712.5,368.3 712.5,559.2 216,559.2" fill="#ffffc8"/>
<polygon points="216,470 300,461.0 300,488.2 283,489.6 216,495.2" fill="#80ffff"/>
<polygon points="216,495.2 283,489.6 330,496 216,510.1" fill="#b99a7c"/>
<polygon points="640,390 658.7,379 712.5,368.3 712.5,379.4 645.5,394" fill="#e0e0e0"/>
<polygon points="625,408 645.5,394 712.5,379.4 712.5,387.5 631,407" fill="#b99a7c"/>
</g>
<clipPath id="gclip"><polygon points="216,470 300,461.0 412,447 542.5,380 610.6,380 635,382.8 658.7,379 712.5,368.3 712.5,559.2 216,559.2"/></clipPath>
<filter id="sblur" x="-2%" y="-5%" width="104%" height="110%"><feGaussianBlur stdDeviation="0.5"/></filter>
<g clip-path="url(#gclip)"><g filter="url(#sblur)">
<polygon points="233.5,300 233.5,468.0 240.6,471.7 247.7,475.2 255.0,478.4 262.4,481.5 269.8,484.3 277.3,486.9 284.8,489.3 292.4,491.5 300.1,493.5 307.8,495.3 315.5,496.8 323.2,498.2 331.0,499.4 338.8,500.4 346.5,501.2 354.3,501.8 362.1,502.2 369.9,502.5 377.7,502.5 385.4,502.4 393.2,502.2 400.9,501.7 408.6,501.1 416.3,500.4 424.0,499.4 431.6,498.4 439.2,497.1 446.8,495.7 454.4,494.2 461.9,492.5 469.4,490.7 476.8,488.7 484.2,486.5 491.6,484.3 498.9,481.8 506.2,479.3 513.5,476.6 520.7,473.7 527.8,470.7 535.0,467.6 542.0,464.3 549.0,460.9 556.0,457.3 562.9,453.6 569.8,449.7 576.6,445.7 583.3,441.5 590.0,437.2 596.6,432.7 603.1,428.1 609.6,423.3 616.0,418.4 622.3,413.3 628.5,408.0 634.6,402.6 640.6,397.0 646.5,391.3 652.3,385.4 658.0,379.4 658.0,300" fill="#0a0fc8"/>
<polygon points="235.1,300 235.1,468.0 242.2,471.6 249.3,475.0 256.5,478.1 263.9,481.1 271.2,483.8 278.7,486.4 286.2,488.7 293.7,490.8 301.3,492.8 309.0,494.5 316.6,496.0 324.3,497.4 332.0,498.5 339.7,499.5 347.4,500.3 355.1,500.9 362.8,501.3 370.6,501.5 378.3,501.6 386.0,501.5 393.6,501.2 401.3,500.8 409.0,500.1 416.6,499.4 424.2,498.4 431.7,497.3 439.3,496.1 446.8,494.7 454.3,493.2 461.7,491.5 469.1,489.6 476.5,487.6 483.8,485.5 491.1,483.2 498.4,480.8 505.6,478.2 512.8,475.5 519.9,472.6 527.0,469.6 534.0,466.5 541.0,463.2 547.9,459.8 554.8,456.2 561.7,452.5 568.4,448.7 575.2,444.7 581.8,440.6 588.4,436.3 595.0,431.9 601.5,427.3 607.9,422.6 614.2,417.8 620.5,412.8 626.7,407.6 632.8,402.3 638.8,396.9 644.7,391.3 650.6,385.6 656.3,379.7 656.3,300" fill="#0a13ca"/>
<polygon points="236.7,300 236.7,468.0 243.7,471.5 250.9,474.7 258.1,477.8 265.4,480.7 272.7,483.3 280.1,485.8 287.6,488.1 295.0,490.2 302.6,492.1 310.1,493.7 317.7,495.3 325.3,496.6 333.0,497.7 340.6,498.6 348.3,499.4 355.9,500.0 363.6,500.4 371.2,500.6 378.9,500.7 386.5,500.5 394.1,500.3 401.7,499.8 409.3,499.2 416.8,498.4 424.4,497.4 431.9,496.3 439.3,495.1 446.8,493.7 454.2,492.1 461.6,490.4 468.9,488.5 476.2,486.5 483.5,484.4 490.7,482.1 497.9,479.7 505.0,477.1 512.1,474.4 519.1,471.5 526.1,468.5 533.1,465.4 540.0,462.1 546.8,458.7 553.6,455.2 560.4,451.5 567.1,447.7 573.7,443.7 580.3,439.6 586.9,435.4 593.3,431.1 599.8,426.6 606.1,422.0 612.4,417.2 618.7,412.3 624.8,407.2 630.9,402.1 637.0,396.7 642.9,391.3 648.8,385.7 654.6,379.9 654.6,300" fill="#0a16cc"/>
<polygon points="238.3,300 238.3,468.0 245.3,471.3 252.4,474.5 259.6,477.5 266.9,480.3 274.2,482.9 281.5,485.3 288.9,487.5 296.3,489.5 303.8,491.3 311.3,493.0 318.9,494.5 326.4,495.8 334.0,496.9 341.5,497.8 349.1,498.5 356.7,499.1 364.3,499.5 371.9,499.7 379.5,499.7 387.0,499.6 394.6,499.3 402.1,498.8 409.6,498.2 417.1,497.4 424.6,496.5 432.0,495.3 439.4,494.1 446.8,492.7 454.1,491.1 461.4,489.4 468.7,487.5 475.9,485.5 483.1,483.3 490.2,481.0 497.3,478.6 504.4,476.0 511.4,473.3 518.4,470.4 525.3,467.4 532.1,464.3 539.0,461.0 545.7,457.6 552.5,454.1 559.1,450.5 565.7,446.7 572.3,442.8 578.8,438.7 585.3,434.6 591.7,430.3 598.1,425.8 604.4,421.3 610.7,416.6 616.9,411.8 623.0,406.9 629.1,401.8 635.2,396.6 641.2,391.3 647.1,385.8 653.0,380.2 653.0,300" fill="#0a1acd"/>
<polygon points="239.9,300 239.9,468.0 246.9,471.2 254.0,474.3 261.2,477.2 268.4,479.9 275.6,482.4 282.9,484.7 290.3,486.9 297.7,488.8 305.1,490.6 312.5,492.2 320.0,493.7 327.5,494.9 335.0,496.0 342.5,496.9 350.0,497.6 357.5,498.2 365.0,498.6 372.5,498.8 380.1,498.8 387.6,498.7 395.0,498.3 402.5,497.9 410.0,497.2 417.4,496.4 424.8,495.5 432.1,494.3 439.5,493.1 446.8,491.6 454.0,490.1 461.3,488.3 468.5,486.4 475.6,484.4 482.7,482.2 489.8,479.9 496.8,477.5 503.8,474.9 510.7,472.2 517.6,469.3 524.4,466.3 531.2,463.2 537.9,459.9 544.6,456.6 551.3,453.1 557.9,449.4 564.4,445.7 570.9,441.8 577.3,437.8 583.7,433.7 590.1,429.5 596.4,425.1 602.7,420.6 608.9,416.0 615.1,411.3 621.2,406.5 627.3,401.5 633.4,396.4 639.4,391.2 645.4,385.9 651.3,380.4 651.3,300" fill="#0a1ecf"/>
<polygon points="241.5,300 241.5,468.0 248.5,471.1 255.6,474.1 262.7,476.8 269.9,479.5 277.1,481.9 284.3,484.2 291.6,486.3 299.0,488.2 306.3,489.9 313.7,491.5 321.1,492.9 328.5,494.1 335.9,495.2 343.4,496.1 350.8,496.8 358.3,497.3 365.8,497.6 373.2,497.8 380.7,497.9 388.1,497.7 395.5,497.4 402.9,496.9 410.3,496.3 417.6,495.4 425.0,494.5 432.3,493.3 439.5,492.1 446.8,490.6 454.0,489.0 461.1,487.3 468.2,485.4 475.3,483.3 482.4,481.2 489.3,478.8 496.3,476.4 503.2,473.8 510.0,471.1 516.8,468.2 523.6,465.2 530.3,462.1 536.9,458.9 543.5,455.5 550.1,452.0 556.6,448.4 563.1,444.7 569.5,440.8 575.8,436.9 582.2,432.8 588.5,428.6 594.7,424.4 600.9,420.0 607.1,415.4 613.3,410.8 619.4,406.1 625.5,401.2 631.6,396.3 637.6,391.2 643.6,386.0 649.6,380.7 649.6,300" fill="#0a26d1"/>
<polygon points="243.1,300 243.1,468.0 250.1,471.0 257.2,473.8 264.2,476.5 271.4,479.0 278.5,481.4 285.8,483.6 293.0,485.6 300.3,487.5 307.6,489.2 314.9,490.7 322.2,492.1 329.6,493.3 336.9,494.3 344.3,495.2 351.7,495.9 359.1,496.4 366.5,496.7 373.9,496.9 381.2,496.9 388.6,496.8 396.0,496.4 403.3,495.9 410.6,495.3 417.9,494.5 425.2,493.5 432.4,492.3 439.6,491.0 446.8,489.6 453.9,488.0 461.0,486.2 468.0,484.3 475.0,482.3 482.0,480.1 488.9,477.8 495.8,475.3 502.6,472.7 509.3,470.0 516.0,467.1 522.7,464.1 529.3,461.0 535.9,457.8 542.4,454.4 548.9,450.9 555.3,447.4 561.7,443.7 568.0,439.9 574.3,436.0 580.6,432.0 586.8,427.8 593.0,423.6 599.2,419.3 605.4,414.9 611.5,410.3 617.6,405.7 623.7,401.0 629.7,396.1 635.8,391.2 641.9,386.1 648.0,381.0 648.0,300" fill="#0a2dd4"/>
<polygon points="244.7,300 244.7,468.0 251.7,470.9 258.7,473.6 265.8,476.2 272.9,478.6 280.0,480.9 287.2,483.1 294.4,485.0 301.6,486.8 308.8,488.5 316.1,490.0 323.3,491.3 330.6,492.5 337.9,493.5 345.2,494.3 352.6,495.0 359.9,495.5 367.2,495.8 374.5,496.0 381.8,496.0 389.1,495.8 396.4,495.5 403.7,495.0 410.9,494.3 418.2,493.5 425.4,492.5 432.5,491.3 439.7,490.0 446.8,488.6 453.8,487.0 460.8,485.2 467.8,483.3 474.7,481.2 481.6,479.0 488.4,476.7 495.2,474.2 502.0,471.6 508.6,468.9 515.3,466.0 521.9,463.0 528.4,459.9 534.9,456.7 541.3,453.3 547.7,449.9 554.1,446.3 560.4,442.7 566.6,438.9 572.9,435.0 579.1,431.1 585.2,427.0 591.4,422.9 597.5,418.6 603.6,414.3 609.7,409.8 615.8,405.3 621.8,400.7 627.9,396.0 634.0,391.2 640.1,386.3 646.3,381.2 646.3,300" fill="#0a34d6"/>
<polygon points="246.3,300 246.3,468.0 253.3,470.8 260.3,473.4 267.3,475.9 274.4,478.2 281.5,480.4 288.6,482.5 295.7,484.4 302.9,486.2 310.0,487.8 317.2,489.2 324.5,490.5 331.7,491.7 338.9,492.7 346.2,493.5 353.4,494.1 360.7,494.6 367.9,494.9 375.2,495.1 382.4,495.1 389.7,494.9 396.9,494.5 404.1,494.0 411.3,493.3 418.4,492.5 425.6,491.5 432.7,490.3 439.7,489.0 446.7,487.6 453.7,485.9 460.7,484.2 467.6,482.2 474.4,480.2 481.2,477.9 488.0,475.6 494.7,473.1 501.3,470.5 508.0,467.8 514.5,464.9 521.0,461.9 527.5,458.8 533.9,455.6 540.2,452.3 546.5,448.8 552.8,445.3 559.0,441.7 565.2,438.0 571.4,434.1 577.5,430.2 583.6,426.2 589.7,422.1 595.7,418.0 601.8,413.7 607.9,409.4 613.9,404.9 620.0,400.4 626.1,395.8 632.2,391.1 638.4,386.4 644.6,381.5 644.6,300" fill="#0a3cd8"/>
<polygon points="247.1,300 247.1,467.9 254.1,470.6 261.0,473.2 268.1,475.7 275.1,478.0 282.2,480.2 289.2,482.2 296.3,484.1 303.5,485.8 310.6,487.4 317.8,488.8 325.0,490.1 332.2,491.2 339.4,492.1 346.6,492.9 353.8,493.5 361.0,494.0 368.2,494.3 375.5,494.4 382.7,494.4 389.9,494.2 397.0,493.8 404.2,493.3 411.3,492.6 418.5,491.8 425.5,490.8 432.6,489.6 439.6,488.3 446.6,486.8 453.5,485.2 460.5,483.4 467.3,481.5 474.1,479.4 480.9,477.2 487.6,474.9 494.3,472.4 500.9,469.8 507.5,467.1 514.0,464.3 520.4,461.3 526.8,458.2 533.2,455.0 539.5,451.7 545.8,448.3 552.1,444.8 558.2,441.2 564.4,437.5 570.5,433.8 576.6,429.9 582.7,425.9 588.8,421.9 594.8,417.7 600.9,413.5 606.9,409.2 613.0,404.8 619.0,400.4 625.1,395.8 631.2,391.2 637.4,386.5 643.5,381.6 643.5,300" fill="#0a44da"/>
<polygon points="247.9,300 247.9,467.8 254.8,470.5 261.8,473.1 268.8,475.5 275.8,477.7 282.8,479.9 289.9,481.9 297.0,483.7 304.1,485.4 311.2,486.9 318.3,488.3 325.5,489.6 332.6,490.6 339.8,491.6 347.0,492.3 354.2,492.9 361.4,493.4 368.5,493.6 375.7,493.7 382.9,493.7 390.0,493.5 397.2,493.1 404.3,492.6 411.4,491.9 418.5,491.0 425.5,490.0 432.5,488.9 439.5,487.5 446.5,486.1 453.4,484.4 460.2,482.7 467.0,480.8 473.8,478.7 480.5,476.5 487.2,474.2 493.8,471.7 500.4,469.2 507.0,466.5 513.4,463.6 519.9,460.7 526.2,457.6 532.6,454.5 538.9,451.2 545.1,447.8 551.3,444.4 557.5,440.8 563.6,437.1 569.7,433.4 575.8,429.6 581.9,425.6 587.9,421.6 593.9,417.5 599.9,413.4 606.0,409.1 612.0,404.8 618.0,400.3 624.1,395.8 630.2,391.2 636.3,386.6 642.5,381.8 642.5,300" fill="#0a4bdc"/>
<polygon points="248.7,300 248.7,467.7 255.6,470.4 262.6,472.9 269.5,475.3 276.5,477.5 283.5,479.6 290.6,481.5 297.6,483.3 304.7,485.0 311.8,486.5 318.9,487.9 326.0,489.1 333.1,490.1 340.3,491.0 347.4,491.7 354.6,492.3 361.7,492.7 368.8,493.0 376.0,493.1 383.1,493.0 390.2,492.8 397.3,492.4 404.4,491.9 411.5,491.2 418.5,490.3 425.5,489.3 432.5,488.1 439.4,486.8 446.3,485.3 453.2,483.7 460.0,481.9 466.8,480.0 473.5,478.0 480.2,475.8 486.8,473.5 493.4,471.1 500.0,468.5 506.5,465.8 512.9,463.0 519.3,460.1 525.6,457.1 531.9,453.9 538.2,450.7 544.4,447.3 550.6,443.9 556.7,440.4 562.8,436.7 568.9,433.0 575.0,429.2 581.0,425.3 587.0,421.4 593.0,417.3 599.0,413.2 605.0,409.0 611.0,404.7 617.0,400.3 623.1,395.8 629.2,391.3 635.3,386.7 641.4,381.9 641.4,300" fill="#0a52df"/>
<polygon points="249.5,300 249.5,467.6 256.4,470.2 263.3,472.7 270.3,475.0 277.2,477.2 284.2,479.3 291.2,481.2 298.2,483.0 305.3,484.6 312.3,486.1 319.4,487.4 326.5,488.6 333.6,489.6 340.7,490.5 347.8,491.2 354.9,491.7 362.0,492.1 369.2,492.3 376.3,492.4 383.3,492.3 390.4,492.1 397.5,491.7 404.5,491.1 411.5,490.4 418.5,489.6 425.5,488.5 432.4,487.4 439.3,486.0 446.2,484.6 453.0,482.9 459.8,481.2 466.5,479.3 473.2,477.3 479.9,475.1 486.5,472.8 493.0,470.4 499.5,467.8 506.0,465.2 512.4,462.4 518.7,459.5 525.0,456.5 531.3,453.4 537.5,450.2 543.7,446.8 549.8,443.4 556.0,439.9 562.0,436.3 568.1,432.7 574.1,428.9 580.1,425.0 586.1,421.1 592.1,417.1 598.1,413.0 604.0,408.8 610.0,404.6 616.0,400.3 622.1,395.8 628.1,391.3 634.2,386.8 640.4,382.1 640.4,300" fill="#0a5ae1"/>
<polygon points="249.7,300 249.7,467.6 256.6,470.2 263.5,472.7 270.4,475.0 277.4,477.2 284.4,479.2 291.4,481.1 298.4,482.9 305.4,484.5 312.5,486.0 319.5,487.3 326.6,488.5 333.7,489.5 340.8,490.3 347.9,491.0 355.0,491.6 362.1,492.0 369.2,492.2 376.3,492.3 383.4,492.2 390.5,491.9 397.5,491.5 404.5,491.0 411.6,490.3 418.5,489.4 425.5,488.4 432.4,487.2 439.3,485.9 446.1,484.4 453.0,482.8 459.7,481.0 466.5,479.1 473.1,477.1 479.8,474.9 486.4,472.6 492.9,470.2 499.4,467.7 505.8,465.0 512.2,462.2 518.6,459.3 524.9,456.3 531.2,453.2 537.4,450.0 543.5,446.7 549.7,443.3 555.8,439.8 561.9,436.2 567.9,432.6 573.9,428.8 579.9,425.0 585.9,421.1 591.9,417.1 597.9,413.0 603.8,408.8 609.8,404.6 615.8,400.2 621.8,395.8 627.9,391.4 634.0,386.8 640.1,382.1 640.1,300" fill="#0a5ae1"/>
<polygon points="249.8,300 249.8,467.6 256.7,470.2 263.7,472.6 270.6,475.0 277.5,477.1 284.5,479.2 291.5,481.1 298.5,482.8 305.6,484.4 312.6,485.9 319.7,487.2 326.7,488.4 333.8,489.4 340.9,490.2 348.0,490.9 355.1,491.5 362.2,491.8 369.3,492.1 376.4,492.1 383.4,492.0 390.5,491.8 397.5,491.4 404.6,490.8 411.6,490.1 418.5,489.2 425.5,488.2 432.4,487.0 439.3,485.7 446.1,484.2 452.9,482.6 459.7,480.9 466.4,479.0 473.1,476.9 479.7,474.8 486.3,472.5 492.8,470.1 499.3,467.5 505.7,464.9 512.1,462.1 518.5,459.2 524.8,456.2 531.0,453.1 537.2,449.9 543.4,446.6 549.5,443.2 555.6,439.7 561.7,436.2 567.7,432.5 573.7,428.7 579.7,424.9 585.7,421.0 591.7,417.0 597.6,412.9 603.6,408.8 609.6,404.5 615.6,400.2 621.6,395.8 627.7,391.4 633.8,386.8 639.9,382.1 639.9,300" fill="#0a5ae1"/>
<polygon points="250.0,300 250.0,467.6 256.9,470.2 263.8,472.6 270.7,474.9 277.7,477.1 284.7,479.1 291.7,481.0 298.7,482.8 305.7,484.4 312.7,485.8 319.8,487.1 326.9,488.3 333.9,489.3 341.0,490.1 348.1,490.8 355.2,491.3 362.3,491.7 369.4,491.9 376.4,492.0 383.5,491.9 390.5,491.6 397.6,491.2 404.6,490.7 411.6,489.9 418.5,489.1 425.5,488.0 432.4,486.9 439.3,485.5 446.1,484.1 452.9,482.5 459.6,480.7 466.3,478.8 473.0,476.8 479.6,474.6 486.2,472.3 492.7,469.9 499.2,467.4 505.6,464.7 512.0,462.0 518.3,459.1 524.6,456.1 530.9,453.0 537.1,449.8 543.2,446.5 549.4,443.1 555.4,439.6 561.5,436.1 567.5,432.4 573.5,428.7 579.5,424.8 585.5,420.9 591.5,417.0 597.4,412.9 603.4,408.7 609.4,404.5 615.4,400.2 621.4,395.8 627.4,391.4 633.5,386.8 639.7,382.2 639.7,300" fill="#0a5ae1"/>
<polygon points="250.2,300 250.2,467.6 257.1,470.1 264.0,472.6 270.9,474.9 277.9,477.0 284.8,479.0 291.8,480.9 298.8,482.7 305.8,484.3 312.9,485.7 319.9,487.0 327.0,488.2 334.0,489.1 341.1,490.0 348.2,490.7 355.3,491.2 362.3,491.6 369.4,491.8 376.5,491.8 383.5,491.7 390.6,491.5 397.6,491.1 404.6,490.5 411.6,489.8 418.6,488.9 425.5,487.9 432.4,486.7 439.2,485.4 446.1,483.9 452.8,482.3 459.6,480.5 466.3,478.6 472.9,476.6 479.5,474.5 486.1,472.2 492.6,469.8 499.1,467.2 505.5,464.6 511.9,461.8 518.2,458.9 524.5,456.0 530.7,452.9 536.9,449.7 543.1,446.4 549.2,443.0 555.3,439.5 561.3,436.0 567.4,432.3 573.4,428.6 579.3,424.8 585.3,420.9 591.3,416.9 597.2,412.9 603.2,408.7 609.2,404.5 615.2,400.2 621.2,395.8 627.2,391.4 633.3,386.8 639.4,382.2 639.4,300" fill="#0a5ae1"/>
<polygon points="251.2,300 251.2,467.4 258.1,469.9 265.0,472.3 271.9,474.5 278.8,476.6 285.7,478.6 292.7,480.4 299.6,482.1 306.6,483.6 313.6,485.0 320.6,486.3 327.6,487.4 334.6,488.3 341.7,489.1 348.7,489.8 355.7,490.2 362.8,490.6 369.8,490.8 376.8,490.8 383.8,490.7 390.8,490.4 397.7,490.0 404.7,489.4 411.6,488.7 418.5,487.8 425.4,486.8 432.2,485.6 439.0,484.3 445.8,482.8 452.5,481.2 459.2,479.5 465.8,477.6 472.4,475.6 479.0,473.5 485.5,471.2 491.9,468.8 498.4,466.3 504.7,463.7 511.0,461.0 517.3,458.1 523.5,455.2 529.7,452.1 535.9,449.0 542.0,445.7 548.1,442.4 554.1,438.9 560.1,435.4 566.1,431.8 572.0,428.1 578.0,424.4 583.9,420.5 589.8,416.6 595.7,412.6 601.6,408.5 607.6,404.3 613.5,400.1 619.5,395.7 625.5,391.3 631.5,386.8 637.6,382.3 637.6,300" fill="#0f6ede"/>
<polygon points="252.3,300 252.3,467.3 259.1,469.8 266.0,472.0 272.8,474.2 279.7,476.2 286.6,478.1 293.6,479.9 300.5,481.5 307.4,483.0 314.4,484.3 321.3,485.5 328.3,486.6 335.3,487.5 342.2,488.2 349.2,488.8 356.2,489.3 363.2,489.6 370.1,489.8 377.1,489.8 384.0,489.6 390.9,489.4 397.8,488.9 404.7,488.3 411.6,487.6 418.4,486.7 425.2,485.7 432.0,484.5 438.8,483.2 445.5,481.7 452.1,480.1 458.8,478.4 465.3,476.6 471.9,474.6 478.4,472.5 484.8,470.2 491.2,467.9 497.6,465.4 503.9,462.8 510.2,460.1 516.4,457.3 522.6,454.4 528.7,451.4 534.8,448.2 540.9,445.0 546.9,441.7 552.9,438.3 558.9,434.9 564.8,431.3 570.7,427.7 576.6,423.9 582.5,420.1 588.3,416.2 594.2,412.3 600.1,408.2 606.0,404.1 611.8,399.9 617.8,395.6 623.7,391.3 629.7,386.8 635.7,382.3 635.7,300" fill="#1482dc"/>
<polygon points="253.3,300 253.3,467.2 260.1,469.6 267.0,471.8 273.8,473.9 280.7,475.8 287.5,477.7 294.4,479.4 301.3,480.9 308.2,482.3 315.1,483.6 322.0,484.8 329.0,485.8 335.9,486.6 342.8,487.4 349.7,487.9 356.6,488.4 363.6,488.6 370.5,488.8 377.4,488.8 384.3,488.6 391.1,488.3 398.0,487.8 404.8,487.2 411.6,486.5 418.4,485.6 425.1,484.6 431.8,483.4 438.5,482.1 445.2,480.7 451.8,479.1 458.4,477.4 464.9,475.5 471.4,473.6 477.8,471.5 484.2,469.3 490.6,466.9 496.9,464.5 503.1,461.9 509.4,459.2 515.5,456.5 521.7,453.6 527.7,450.6 533.8,447.5 539.8,444.4 545.8,441.1 551.7,437.7 557.6,434.3 563.5,430.8 569.4,427.2 575.2,423.5 581.1,419.7 586.9,415.9 592.7,412.0 598.5,408.0 604.4,403.9 610.2,399.8 616.1,395.5 621.9,391.2 627.9,386.9 633.8,382.4 633.8,300" fill="#1996da"/>
<polygon points="254.3,300 254.3,467.1 261.1,469.4 268.0,471.5 274.8,473.5 281.6,475.4 288.4,477.2 295.3,478.8 302.1,480.3 309.0,481.7 315.9,482.9 322.7,484.0 329.6,485.0 336.5,485.8 343.4,486.5 350.2,487.0 357.1,487.4 364.0,487.7 370.8,487.8 377.7,487.7 384.5,487.6 391.3,487.2 398.1,486.8 404.9,486.2 411.6,485.4 418.3,484.5 425.0,483.5 431.7,482.3 438.3,481.0 444.9,479.6 451.4,478.0 457.9,476.3 464.4,474.5 470.8,472.5 477.2,470.5 483.6,468.3 489.9,466.0 496.1,463.5 502.3,461.0 508.5,458.4 514.6,455.6 520.7,452.8 526.8,449.8 532.8,446.8 538.7,443.7 544.6,440.5 550.5,437.1 556.4,433.7 562.3,430.3 568.1,426.7 573.9,423.1 579.7,419.3 585.4,415.6 591.2,411.7 597.0,407.7 602.8,403.7 608.5,399.6 614.4,395.4 620.2,391.2 626.1,386.9 632.0,382.4 632.0,300" fill="#1eaad7"/>
<polygon points="254.4,300 254.4,467.1 261.2,469.4 268.0,471.5 274.8,473.5 281.7,475.4 288.5,477.2 295.3,478.8 302.2,480.3 309.1,481.7 315.9,482.9 322.8,484.0 329.7,484.9 336.5,485.7 343.4,486.4 350.3,486.9 357.1,487.3 364.0,487.6 370.8,487.7 377.7,487.7 384.5,487.5 391.3,487.2 398.1,486.7 404.8,486.1 411.6,485.3 418.3,484.4 425.0,483.4 431.6,482.2 438.3,480.9 444.8,479.5 451.4,477.9 457.9,476.2 464.4,474.4 470.8,472.5 477.2,470.4 483.5,468.2 489.8,465.9 496.1,463.5 502.3,461.0 508.4,458.3 514.6,455.6 520.6,452.7 526.7,449.8 532.7,446.8 538.6,443.6 544.6,440.4 550.5,437.1 556.3,433.7 562.2,430.2 568.0,426.7 573.8,423.0 579.5,419.3 585.3,415.5 591.1,411.7 596.8,407.7 602.6,403.7 608.4,399.6 614.2,395.4 620.0,391.2 625.9,386.8 631.8,382.4 631.8,300" fill="#1eaad7"/>
<polygon points="254.4,300 254.4,467.1 261.3,469.4 268.1,471.5 274.9,473.5 281.7,475.4 288.5,477.1 295.4,478.7 302.2,480.2 309.1,481.6 316.0,482.8 322.8,483.9 329.7,484.9 336.6,485.7 343.4,486.3 350.3,486.9 357.1,487.3 364.0,487.5 370.8,487.6 377.7,487.6 384.5,487.4 391.3,487.1 398.1,486.6 404.8,486.0 411.6,485.2 418.3,484.4 425.0,483.3 431.6,482.2 438.2,480.9 444.8,479.4 451.4,477.9 457.9,476.2 464.3,474.4 470.7,472.4 477.1,470.3 483.5,468.2 489.8,465.9 496.0,463.4 502.2,460.9 508.4,458.3 514.5,455.5 520.6,452.7 526.6,449.8 532.6,446.7 538.5,443.6 544.5,440.4 550.4,437.1 556.2,433.7 562.0,430.2 567.9,426.6 573.6,423.0 579.4,419.3 585.2,415.5 590.9,411.6 596.7,407.7 602.5,403.7 608.2,399.6 614.0,395.4 619.9,391.1 625.7,386.8 631.6,382.4 631.6,300" fill="#1eaad7"/>
<polygon points="254.5,300 254.5,467.1 261.3,469.3 268.1,471.5 274.9,473.5 281.8,475.3 288.6,477.1 295.4,478.7 302.3,480.2 309.1,481.5 316.0,482.8 322.9,483.8 329.7,484.8 336.6,485.6 343.4,486.3 350.3,486.8 357.2,487.2 364.0,487.4 370.9,487.5 377.7,487.5 384.5,487.3 391.3,487.0 398.1,486.5 404.8,485.9 411.6,485.2 418.3,484.3 424.9,483.3 431.6,482.1 438.2,480.8 444.8,479.4 451.3,477.8 457.8,476.1 464.3,474.3 470.7,472.3 477.1,470.3 483.4,468.1 489.7,465.8 495.9,463.4 502.1,460.9 508.3,458.2 514.4,455.5 520.5,452.6 526.5,449.7 532.5,446.7 538.5,443.6 544.4,440.3 550.3,437.0 556.1,433.6 561.9,430.2 567.8,426.6 573.5,423.0 579.3,419.3 585.1,415.5 590.8,411.6 596.6,407.7 602.3,403.6 608.1,399.5 613.9,395.4 619.7,391.1 625.5,386.8 631.4,382.4 631.4,300" fill="#1eaad7"/>
<polygon points="254.6,300 254.6,467.1 261.4,469.3 268.2,471.4 275.0,473.4 281.8,475.3 288.6,477.0 295.5,478.7 302.3,480.1 309.2,481.5 316.0,482.7 322.9,483.8 329.8,484.7 336.6,485.5 343.5,486.2 350.3,486.7 357.2,487.1 364.0,487.4 370.9,487.5 377.7,487.4 384.5,487.2 391.3,486.9 398.1,486.4 404.8,485.8 411.5,485.1 418.2,484.2 424.9,483.2 431.6,482.0 438.2,480.7 444.7,479.3 451.3,477.7 457.8,476.0 464.2,474.2 470.6,472.3 477.0,470.2 483.4,468.0 489.6,465.7 495.9,463.3 502.1,460.8 508.2,458.2 514.3,455.4 520.4,452.6 526.4,449.7 532.4,446.6 538.4,443.5 544.3,440.3 550.2,437.0 556.0,433.6 561.8,430.1 567.6,426.6 573.4,422.9 579.2,419.2 584.9,415.4 590.7,411.6 596.4,407.6 602.2,403.6 608.0,399.5 613.7,395.4 619.5,391.1 625.4,386.8 631.2,382.4 631.2,300" fill="#1eaad7"/>
<polygon points="255.0,300 255.0,467.0 261.8,469.2 268.6,471.3 275.4,473.2 282.2,475.0 289.0,476.7 295.8,478.3 302.7,479.7 309.5,481.0 316.3,482.2 323.1,483.3 330.0,484.2 336.8,485.0 343.6,485.6 350.5,486.1 357.3,486.5 364.1,486.7 370.9,486.8 377.7,486.8 384.4,486.6 391.2,486.2 397.9,485.8 404.7,485.2 411.4,484.4 418.0,483.5 424.7,482.5 431.3,481.4 437.8,480.1 444.4,478.7 450.9,477.1 457.3,475.5 463.8,473.7 470.2,471.7 476.5,469.7 482.8,467.5 489.1,465.3 495.3,462.9 501.4,460.4 507.6,457.8 513.6,455.0 519.7,452.2 525.7,449.3 531.6,446.3 537.5,443.2 543.4,440.0 549.3,436.7 555.1,433.3 560.9,429.9 566.6,426.3 572.4,422.7 578.1,419.0 583.8,415.2 589.5,411.3 595.1,407.4 600.8,403.4 606.5,399.3 612.2,395.1 618.0,390.9 623.7,386.6 629.5,382.2 629.5,300" fill="#34b9cc"/>
<polygon points="255.4,300 255.4,467.0 262.2,469.1 269.0,471.1 275.8,473.0 282.6,474.8 289.4,476.4 296.2,477.9 303.0,479.3 309.8,480.6 316.6,481.7 323.4,482.8 330.2,483.6 337.0,484.4 343.8,485.0 350.6,485.5 357.4,485.8 364.1,486.1 370.9,486.1 377.7,486.1 384.4,485.9 391.1,485.6 397.8,485.1 404.5,484.5 411.2,483.8 417.8,482.9 424.4,481.9 431.0,480.7 437.5,479.5 444.0,478.1 450.5,476.5 456.9,474.9 463.3,473.1 469.7,471.2 476.0,469.2 482.2,467.0 488.5,464.8 494.6,462.4 500.8,459.9 506.9,457.3 512.9,454.6 518.9,451.8 524.9,448.9 530.8,445.9 536.7,442.8 542.5,439.7 548.4,436.4 554.1,433.0 559.9,429.6 565.6,426.1 571.3,422.4 576.9,418.7 582.6,415.0 588.2,411.1 593.9,407.2 599.5,403.2 605.1,399.1 610.7,394.9 616.4,390.7 622.0,386.4 627.7,382.0 627.7,300" fill="#4bc8c0"/>
<polygon points="255.8,300 255.8,467.0 262.6,469.0 269.4,471.0 276.2,472.8 282.9,474.5 289.7,476.1 296.5,477.6 303.3,478.9 310.1,480.2 316.9,481.3 323.6,482.2 330.4,483.1 337.2,483.8 344.0,484.4 350.7,484.9 357.5,485.2 364.2,485.4 370.9,485.5 377.7,485.4 384.4,485.2 391.0,484.9 397.7,484.4 404.3,483.8 411.0,483.1 417.6,482.2 424.1,481.2 430.7,480.1 437.2,478.8 443.6,477.5 450.1,475.9 456.5,474.3 462.8,472.5 469.2,470.7 475.4,468.6 481.7,466.5 487.9,464.3 494.0,461.9 500.1,459.5 506.2,456.9 512.2,454.2 518.2,451.5 524.1,448.6 530.0,445.6 535.9,442.5 541.7,439.4 547.4,436.1 553.2,432.7 558.9,429.3 564.6,425.8 570.2,422.2 575.8,418.5 581.4,414.7 587.0,410.9 592.6,407.0 598.1,403.0 603.7,398.9 609.2,394.7 614.8,390.5 620.4,386.2 625.9,381.8 625.9,300" fill="#62d7b5"/>
<polygon points="256.2,300 256.2,466.9 263.0,468.9 269.8,470.8 276.5,472.6 283.3,474.2 290.1,475.8 296.9,477.2 303.6,478.5 310.4,479.7 317.1,480.8 323.9,481.7 330.6,482.6 337.4,483.3 344.1,483.8 350.8,484.3 357.6,484.6 364.3,484.8 371.0,484.8 377.6,484.8 384.3,484.6 391.0,484.2 397.6,483.8 404.2,483.2 410.8,482.4 417.3,481.6 423.9,480.6 430.4,479.5 436.8,478.2 443.3,476.8 449.7,475.3 456.1,473.7 462.4,472.0 468.7,470.1 474.9,468.1 481.1,466.0 487.3,463.8 493.4,461.5 499.5,459.0 505.5,456.5 511.5,453.8 517.5,451.1 523.4,448.2 529.2,445.2 535.0,442.2 540.8,439.0 546.5,435.8 552.2,432.5 557.9,429.0 563.5,425.5 569.1,421.9 574.7,418.3 580.2,414.5 585.8,410.7 591.3,406.7 596.8,402.7 602.2,398.7 607.7,394.5 613.2,390.3 618.7,385.9 624.2,381.5 624.2,300" fill="#78e6aa"/>
<polygon points="256.2,300 256.2,466.9 263.0,468.9 269.8,470.8 276.6,472.6 283.4,474.2 290.1,475.8 296.9,477.2 303.6,478.5 310.4,479.7 317.2,480.7 323.9,481.7 330.7,482.5 337.4,483.2 344.1,483.8 350.8,484.2 357.6,484.5 364.3,484.7 371.0,484.8 377.6,484.7 384.3,484.5 390.9,484.2 397.6,483.7 404.2,483.1 410.7,482.4 417.3,481.5 423.8,480.5 430.3,479.4 436.8,478.2 443.2,476.8 449.6,475.3 456.0,473.7 462.3,471.9 468.6,470.1 474.9,468.1 481.1,466.0 487.2,463.8 493.3,461.4 499.4,459.0 505.4,456.4 511.4,453.8 517.4,451.0 523.3,448.2 529.1,445.2 534.9,442.2 540.7,439.0 546.4,435.8 552.1,432.4 557.8,429.0 563.4,425.5 569.0,421.9 574.6,418.2 580.1,414.5 585.6,410.6 591.1,406.7 596.6,402.7 602.1,398.6 607.5,394.5 613.0,390.2 618.5,385.9 624.0,381.5 624.0,300" fill="#78e6aa"/>
<polygon points="256.2,300 256.2,466.9 263.0,468.9 269.8,470.8 276.6,472.5 283.4,474.2 290.2,475.7 296.9,477.1 303.7,478.4 310.4,479.6 317.2,480.7 323.9,481.6 330.7,482.5 337.4,483.1 344.1,483.7 350.9,484.2 357.6,484.5 364.3,484.6 371.0,484.7 377.6,484.6 384.3,484.4 390.9,484.1 397.5,483.6 404.1,483.0 410.7,482.3 417.3,481.4 423.8,480.5 430.3,479.3 436.8,478.1 443.2,476.7 449.6,475.2 455.9,473.6 462.3,471.9 468.5,470.0 474.8,468.0 481.0,465.9 487.1,463.7 493.3,461.4 499.3,458.9 505.4,456.4 511.3,453.7 517.3,451.0 523.2,448.1 529.0,445.2 534.8,442.1 540.6,439.0 546.3,435.7 552.0,432.4 557.7,429.0 563.3,425.5 568.9,421.9 574.4,418.2 580.0,414.4 585.5,410.6 591.0,406.7 596.4,402.7 601.9,398.6 607.4,394.5 612.8,390.2 618.3,385.9 623.7,381.5 623.7,300" fill="#78e6aa"/>
<polygon points="256.3,300 256.3,466.9 263.1,468.9 269.9,470.8 276.6,472.5 283.4,474.2 290.2,475.7 296.9,477.1 303.7,478.4 310.5,479.6 317.2,480.6 323.9,481.6 330.7,482.4 337.4,483.1 344.1,483.7 350.9,484.1 357.6,484.4 364.3,484.6 370.9,484.6 377.6,484.6 384.3,484.4 390.9,484.0 397.5,483.6 404.1,483.0 410.7,482.2 417.2,481.4 423.8,480.4 430.3,479.3 436.7,478.0 443.1,476.7 449.5,475.2 455.9,473.5 462.2,471.8 468.5,469.9 474.7,468.0 480.9,465.9 487.1,463.7 493.2,461.3 499.3,458.9 505.3,456.4 511.3,453.7 517.2,451.0 523.1,448.1 528.9,445.1 534.7,442.1 540.5,438.9 546.2,435.7 551.9,432.4 557.5,429.0 563.2,425.4 568.7,421.9 574.3,418.2 579.8,414.4 585.3,410.6 590.8,406.7 596.3,402.7 601.7,398.6 607.2,394.4 612.6,390.2 618.1,385.9 623.5,381.5 623.5,300" fill="#78e6aa"/>
<polygon points="256.3,300 256.3,466.9 263.1,468.9 269.9,470.7 276.7,472.5 283.5,474.1 290.2,475.7 297.0,477.1 303.7,478.4 310.5,479.5 317.2,480.6 324.0,481.5 330.7,482.3 337.4,483.0 344.2,483.6 350.9,484.0 357.6,484.3 364.3,484.5 370.9,484.6 377.6,484.5 384.3,484.3 390.9,484.0 397.5,483.5 404.1,482.9 410.7,482.2 417.2,481.3 423.7,480.3 430.2,479.2 436.7,478.0 443.1,476.6 449.5,475.1 455.8,473.5 462.1,471.8 468.4,469.9 474.7,467.9 480.9,465.8 487.0,463.6 493.1,461.3 499.2,458.9 505.2,456.3 511.2,453.7 517.1,450.9 523.0,448.1 528.8,445.1 534.6,442.1 540.4,438.9 546.1,435.7 551.8,432.3 557.4,428.9 563.0,425.4 568.6,421.8 574.2,418.2 579.7,414.4 585.2,410.6 590.7,406.6 596.1,402.6 601.6,398.6 607.0,394.4 612.4,390.2 617.9,385.8 623.3,381.4 623.3,300" fill="#78e6aa"/>
<polygon points="258.2,300 258.2,466.7 265.0,468.6 271.7,470.4 278.4,472.1 285.1,473.8 291.8,475.2 298.5,476.6 305.2,477.9 311.9,479.0 318.6,480.1 325.3,481.0 331.9,481.8 338.6,482.4 345.3,483.0 351.9,483.4 358.6,483.7 365.2,483.8 371.8,483.9 378.4,483.8 385.0,483.6 391.6,483.2 398.1,482.8 404.7,482.1 411.2,481.4 417.7,480.6 424.1,479.6 430.5,478.5 436.9,477.2 443.3,475.9 449.6,474.4 455.9,472.8 462.2,471.0 468.4,469.2 474.6,467.2 480.7,465.1 486.8,462.9 492.9,460.6 498.9,458.2 504.8,455.7 510.7,453.1 516.6,450.3 522.4,447.5 528.2,444.5 534.0,441.5 539.7,438.4 545.3,435.2 550.9,431.9 556.5,428.5 562.1,425.0 567.6,421.4 573.0,417.7 578.5,414.0 583.9,410.2 589.3,406.3 594.7,402.3 600.0,398.2 605.4,394.1 610.7,389.9 616.1,385.6 621.4,381.2 621.4,300" fill="#8eeb98"/>
<polygon points="260.1,300 260.1,466.4 266.8,468.3 273.5,470.1 280.1,471.8 286.8,473.4 293.4,474.8 300.1,476.2 306.7,477.4 313.3,478.5 319.9,479.5 326.6,480.4 333.2,481.2 339.8,481.8 346.4,482.3 353.0,482.7 359.6,483.0 366.1,483.2 372.7,483.2 379.2,483.1 385.8,482.8 392.3,482.5 398.8,482.0 405.2,481.4 411.7,480.7 418.1,479.8 424.5,478.8 430.9,477.7 437.2,476.5 443.5,475.1 449.8,473.7 456.0,472.1 462.2,470.3 468.4,468.5 474.5,466.5 480.6,464.5 486.6,462.3 492.6,460.0 498.6,457.6 504.5,455.1 510.3,452.5 516.1,449.7 521.9,446.9 527.6,444.0 533.3,441.0 538.9,437.9 544.5,434.7 550.1,431.4 555.6,428.0 561.1,424.5 566.5,421.0 571.9,417.3 577.3,413.6 582.6,409.8 587.9,405.9 593.2,402.0 598.5,397.9 603.8,393.8 609.0,389.6 614.3,385.4 619.5,381.0 619.5,300" fill="#a5f087"/>
<polygon points="262.1,300 262.1,466.2 268.7,468.1 275.3,469.8 281.9,471.5 288.4,473.0 295.0,474.4 301.6,475.7 308.2,476.9 314.7,478.0 321.3,479.0 327.9,479.8 334.4,480.6 341.0,481.2 347.5,481.7 354.0,482.1 360.5,482.3 367.1,482.5 373.5,482.5 380.0,482.4 386.5,482.1 393.0,481.8 399.4,481.3 405.8,480.7 412.2,479.9 418.5,479.1 424.9,478.1 431.2,477.0 437.5,475.8 443.7,474.4 449.9,472.9 456.1,471.3 462.3,469.6 468.4,467.8 474.4,465.8 480.4,463.8 486.4,461.6 492.4,459.3 498.3,456.9 504.1,454.4 509.9,451.8 515.7,449.1 521.4,446.3 527.0,443.4 532.6,440.4 538.2,437.3 543.8,434.2 549.2,430.9 554.7,427.5 560.1,424.1 565.5,420.5 570.8,416.9 576.1,413.2 581.4,409.4 586.6,405.6 591.8,401.6 597.0,397.6 602.2,393.5 607.3,389.3 612.5,385.1 617.6,380.8 617.6,300" fill="#bcf576"/>
<polygon points="264.0,300 264.0,466.0 270.5,467.8 277.1,469.5 283.6,471.1 290.1,472.6 296.6,474.0 303.1,475.3 309.7,476.4 316.2,477.5 322.7,478.4 329.2,479.3 335.6,480.0 342.1,480.6 348.6,481.1 355.1,481.4 361.5,481.7 368.0,481.8 374.4,481.8 380.8,481.7 387.2,481.4 393.6,481.0 400.0,480.5 406.4,479.9 412.7,479.2 419.0,478.3 425.3,477.3 431.5,476.2 437.7,475.0 443.9,473.7 450.1,472.2 456.2,470.6 462.3,468.9 468.3,467.1 474.3,465.2 480.3,463.1 486.2,461.0 492.1,458.7 497.9,456.3 503.7,453.8 509.5,451.2 515.2,448.6 520.8,445.8 526.4,442.9 532.0,439.9 537.5,436.8 543.0,433.7 548.4,430.4 553.8,427.0 559.1,423.6 564.4,420.1 569.7,416.5 574.9,412.8 580.1,409.1 585.2,405.2 590.4,401.3 595.5,397.3 600.6,393.2 605.6,389.1 610.6,384.9 615.7,380.5 615.7,300" fill="#d2fa64"/>
<polygon points="264.4,300 264.4,465.9 270.9,467.8 277.4,469.5 283.9,471.1 290.4,472.5 297.0,473.9 303.5,475.2 310.0,476.4 316.5,477.4 322.9,478.4 329.4,479.2 335.9,479.9 342.4,480.5 348.8,481.0 355.3,481.3 361.8,481.6 368.2,481.7 374.6,481.7 381.0,481.6 387.4,481.3 393.8,480.9 400.2,480.5 406.5,479.8 412.8,479.1 419.1,478.2 425.4,477.2 431.6,476.1 437.8,474.9 444.0,473.6 450.2,472.1 456.3,470.5 462.4,468.8 468.4,467.0 474.4,465.1 480.3,463.0 486.3,460.9 492.1,458.6 498.0,456.2 503.7,453.7 509.5,451.1 515.2,448.5 520.8,445.7 526.4,442.8 531.9,439.8 537.4,436.7 542.9,433.6 548.3,430.3 553.7,427.0 559.0,423.5 564.3,420.0 569.6,416.4 574.8,412.8 580.0,409.0 585.1,405.2 590.2,401.2 595.3,397.3 600.4,393.2 605.4,389.0 610.4,384.8 615.5,380.5 615.5,300" fill="#d2fa64"/>
<polygon points="264.7,300 264.7,465.9 271.3,467.7 277.8,469.4 284.3,471.0 290.8,472.5 297.3,473.9 303.8,475.1 310.3,476.3 316.7,477.4 323.2,478.3 329.7,479.1 336.2,479.8 342.6,480.4 349.1,480.9 355.5,481.3 362.0,481.5 368.4,481.6 374.8,481.6 381.2,481.5 387.6,481.2 394.0,480.9 400.3,480.4 406.7,479.7 413.0,479.0 419.3,478.1 425.5,477.1 431.8,476.0 438.0,474.8 444.1,473.5 450.3,472.0 456.4,470.4 462.4,468.7 468.5,466.9 474.4,465.0 480.4,462.9 486.3,460.8 492.1,458.5 498.0,456.1 503.7,453.6 509.5,451.1 515.1,448.4 520.8,445.6 526.4,442.7 531.9,439.7 537.4,436.7 542.8,433.5 548.2,430.2 553.6,426.9 558.9,423.5 564.2,420.0 569.4,416.4 574.6,412.7 579.8,408.9 585.0,405.1 590.1,401.2 595.1,397.2 600.2,393.1 605.2,389.0 610.2,384.8 615.2,380.5 615.2,300" fill="#d2fa64"/>
<polygon points="265.1,300 265.1,465.9 271.6,467.7 278.1,469.4 284.6,470.9 291.1,472.4 297.6,473.8 304.1,475.1 310.6,476.2 317.0,477.3 323.5,478.2 330.0,479.0 336.4,479.8 342.9,480.3 349.3,480.8 355.8,481.2 362.2,481.4 368.6,481.5 375.0,481.5 381.4,481.4 387.8,481.1 394.1,480.8 400.5,480.3 406.8,479.6 413.1,478.9 419.4,478.0 425.6,477.1 431.9,475.9 438.1,474.7 444.2,473.4 450.3,471.9 456.4,470.3 462.5,468.6 468.5,466.8 474.5,464.9 480.4,462.8 486.3,460.7 492.2,458.4 498.0,456.0 503.7,453.5 509.5,451.0 515.1,448.3 520.7,445.5 526.3,442.6 531.9,439.6 537.3,436.6 542.8,433.4 548.2,430.2 553.5,426.8 558.8,423.4 564.1,419.9 569.3,416.3 574.5,412.6 579.7,408.9 584.8,405.0 589.9,401.1 595.0,397.2 600.0,393.1 605.0,389.0 610.0,384.8 615.0,380.5 615.0,300" fill="#d2fa64"/>
<polygon points="265.5,300 265.5,465.8 272.0,467.6 278.5,469.3 285.0,470.9 291.5,472.4 297.9,473.7 304.4,475.0 310.9,476.2 317.3,477.2 323.8,478.2 330.2,479.0 336.7,479.7 343.1,480.3 349.6,480.7 356.0,481.1 362.4,481.3 368.8,481.4 375.2,481.4 381.6,481.3 388.0,481.0 394.3,480.7 400.7,480.2 407.0,479.5 413.3,478.8 419.5,477.9 425.8,477.0 432.0,475.8 438.2,474.6 444.3,473.3 450.4,471.8 456.5,470.2 462.6,468.5 468.6,466.7 474.5,464.8 480.5,462.7 486.3,460.6 492.2,458.3 498.0,455.9 503.7,453.4 509.4,450.9 515.1,448.2 520.7,445.4 526.3,442.5 531.8,439.5 537.3,436.5 542.7,433.3 548.1,430.1 553.4,426.7 558.7,423.3 564.0,419.8 569.2,416.2 574.4,412.6 579.5,408.8 584.7,405.0 589.7,401.1 594.8,397.1 599.8,393.1 604.8,388.9 609.8,384.7 614.8,380.4 614.8,300" fill="#d2fa64"/>
<polygon points="268.9,300 268.9,465.4 275.2,467.2 281.6,468.8 288.0,470.3 294.4,471.8 300.7,473.1 307.1,474.4 313.5,475.5 319.8,476.5 326.2,477.4 332.5,478.2 338.9,478.9 345.2,479.4 351.6,479.9 357.9,480.2 364.2,480.4 370.6,480.5 376.9,480.5 383.2,480.4 389.4,480.1 395.7,479.7 401.9,479.2 408.2,478.6 414.4,477.8 420.5,477.0 426.7,476.0 432.8,474.9 438.9,473.6 445.0,472.3 451.0,470.8 457.0,469.2 463.0,467.5 468.9,465.7 474.8,463.8 480.6,461.7 486.4,459.6 492.1,457.3 497.8,455.0 503.5,452.5 509.1,449.9 514.7,447.3 520.2,444.5 525.7,441.6 531.1,438.7 536.5,435.7 541.8,432.5 547.1,429.3 552.4,426.0 557.6,422.6 562.7,419.1 567.9,415.6 573.0,412.0 578.0,408.3 583.0,404.5 588.0,400.6 593.0,396.7 598.0,392.7 602.9,388.7 607.8,384.5 612.7,380.3 612.7,300" fill="#dcf45f"/>
<polygon points="272.2,300 272.2,465.0 278.5,466.7 284.7,468.3 291.0,469.8 297.3,471.2 303.5,472.5 309.8,473.7 316.1,474.8 322.3,475.8 328.6,476.7 334.8,477.4 341.1,478.1 347.4,478.6 353.6,479.0 359.8,479.4 366.1,479.6 372.3,479.6 378.5,479.6 384.7,479.5 390.9,479.2 397.1,478.8 403.2,478.3 409.4,477.6 415.5,476.9 421.6,476.0 427.6,475.0 433.7,473.9 439.7,472.7 445.6,471.3 451.6,469.8 457.5,468.2 463.4,466.5 469.2,464.7 475.0,462.8 480.7,460.8 486.4,458.6 492.1,456.4 497.7,454.0 503.3,451.6 508.8,449.0 514.3,446.4 519.7,443.6 525.1,440.8 530.4,437.8 535.7,434.8 541.0,431.7 546.2,428.5 551.3,425.2 556.4,421.9 561.5,418.5 566.5,415.0 571.5,411.4 576.5,407.7 581.4,404.0 586.3,400.2 591.2,396.3 596.1,392.4 600.9,388.4 605.7,384.4 610.5,380.2 610.5,300" fill="#e6ee5a"/>
<polygon points="275.5,300 275.5,464.6 281.7,466.3 287.9,467.8 294.0,469.3 300.2,470.6 306.4,471.9 312.5,473.0 318.7,474.1 324.8,475.1 331.0,475.9 337.2,476.6 343.3,477.3 349.5,477.8 355.6,478.2 361.8,478.5 367.9,478.7 374.0,478.8 380.2,478.7 386.3,478.5 392.4,478.3 398.4,477.8 404.5,477.3 410.5,476.7 416.6,475.9 422.6,475.0 428.5,474.0 434.5,472.9 440.4,471.7 446.3,470.3 452.2,468.9 458.0,467.3 463.8,465.6 469.5,463.8 475.2,461.8 480.9,459.8 486.5,457.7 492.0,455.4 497.6,453.1 503.0,450.6 508.5,448.1 513.9,445.5 519.2,442.7 524.5,439.9 529.7,437.0 534.9,434.0 540.1,430.9 545.2,427.7 550.3,424.5 555.3,421.2 560.3,417.8 565.2,414.3 570.1,410.8 575.0,407.2 579.8,403.5 584.6,399.8 589.4,396.0 594.2,392.1 598.9,388.2 603.7,384.2 608.4,380.1 608.4,300" fill="#f0e755"/>
<polygon points="278.8,300 278.8,464.2 284.9,465.8 291.0,467.3 297.0,468.7 303.1,470.0 309.2,471.3 315.2,472.4 321.3,473.4 327.3,474.3 333.4,475.2 339.5,475.9 345.5,476.5 351.6,477.0 357.6,477.4 363.7,477.6 369.7,477.8 375.8,477.9 381.8,477.8 387.8,477.6 393.8,477.3 399.8,476.9 405.8,476.4 411.7,475.7 417.7,475.0 423.6,474.1 429.5,473.1 435.3,471.9 441.2,470.7 447.0,469.3 452.7,467.9 458.5,466.3 464.1,464.6 469.8,462.8 475.4,460.9 481.0,458.8 486.5,456.7 492.0,454.5 497.4,452.1 502.8,449.7 508.2,447.2 513.4,444.5 518.7,441.8 523.9,439.0 529.0,436.1 534.2,433.2 539.2,430.1 544.2,427.0 549.2,423.8 554.1,420.5 559.0,417.1 563.9,413.7 568.7,410.2 573.5,406.6 578.2,403.0 582.9,399.3 587.6,395.6 592.3,391.8 597.0,387.9 601.6,384.0 606.3,380.0 606.3,300" fill="#fae150"/>
<polygon points="279.2,300 279.2,464.2 285.3,465.8 291.3,467.3 297.4,468.7 303.4,470.0 309.5,471.2 315.5,472.3 321.6,473.3 327.6,474.2 333.7,475.1 339.7,475.8 345.8,476.4 351.8,476.9 357.8,477.3 363.9,477.5 369.9,477.7 375.9,477.8 382.0,477.7 388.0,477.5 394.0,477.2 400.0,476.8 405.9,476.3 411.9,475.6 417.8,474.8 423.7,473.9 429.6,472.9 435.4,471.8 441.2,470.6 447.0,469.2 452.8,467.8 458.5,466.2 464.2,464.5 469.8,462.7 475.4,460.7 481.0,458.7 486.5,456.6 492.0,454.4 497.4,452.0 502.8,449.6 508.1,447.1 513.4,444.4 518.6,441.7 523.8,438.9 528.9,436.0 534.0,433.1 539.1,430.0 544.1,426.9 549.0,423.7 554.0,420.4 558.8,417.0 563.7,413.6 568.5,410.1 573.3,406.6 578.0,402.9 582.7,399.3 587.4,395.5 592.1,391.7 596.7,387.9 601.4,384.0 606.0,380.0 606.0,300" fill="#fae150"/>
<polygon points="279.5,300 279.5,464.2 285.6,465.7 291.6,467.2 297.7,468.6 303.7,469.9 309.8,471.1 315.8,472.2 321.8,473.2 327.9,474.1 333.9,475.0 340.0,475.7 346.0,476.3 352.0,476.8 358.1,477.2 364.1,477.4 370.1,477.6 376.1,477.6 382.1,477.6 388.1,477.4 394.1,477.1 400.1,476.7 406.0,476.1 412.0,475.5 417.9,474.7 423.8,473.8 429.6,472.8 435.5,471.7 441.3,470.5 447.1,469.1 452.8,467.6 458.5,466.0 464.2,464.4 469.8,462.5 475.4,460.6 481.0,458.6 486.5,456.5 491.9,454.2 497.3,451.9 502.7,449.5 508.0,447.0 513.3,444.3 518.5,441.6 523.7,438.8 528.8,435.9 533.9,433.0 539.0,429.9 543.9,426.8 548.9,423.6 553.8,420.3 558.7,416.9 563.5,413.5 568.3,410.0 573.0,406.5 577.8,402.9 582.5,399.2 587.2,395.5 591.8,391.7 596.5,387.9 601.1,384.0 605.7,380.0 605.7,300" fill="#fae150"/>
<polygon points="279.9,300 279.9,464.1 285.9,465.7 292.0,467.1 298.0,468.5 304.0,469.8 310.1,471.0 316.1,472.1 322.1,473.1 328.1,474.1 334.2,474.9 340.2,475.6 346.2,476.2 352.2,476.7 358.3,477.1 364.3,477.3 370.3,477.5 376.3,477.5 382.3,477.5 388.3,477.3 394.3,477.0 400.2,476.6 406.2,476.0 412.1,475.4 418.0,474.6 423.9,473.7 429.7,472.7 435.6,471.6 441.4,470.3 447.1,469.0 452.9,467.5 458.6,465.9 464.2,464.2 469.8,462.4 475.4,460.5 481.0,458.5 486.4,456.4 491.9,454.1 497.3,451.8 502.7,449.4 508.0,446.8 513.2,444.2 518.4,441.5 523.6,438.7 528.7,435.8 533.8,432.9 538.8,429.8 543.8,426.7 548.7,423.5 553.6,420.2 558.5,416.9 563.3,413.5 568.1,410.0 572.8,406.4 577.6,402.8 582.3,399.2 586.9,395.5 591.6,391.7 596.2,387.8 600.9,383.9 605.5,380.0 605.5,300" fill="#fae150"/>
<polygon points="280.3,300 280.3,464.1 286.3,465.6 292.3,467.1 298.3,468.5 304.3,469.8 310.4,471.0 316.4,472.1 322.4,473.1 328.4,474.0 334.4,474.8 340.4,475.5 346.5,476.1 352.5,476.6 358.5,476.9 364.5,477.2 370.5,477.4 376.5,477.4 382.5,477.4 388.4,477.2 394.4,476.9 400.4,476.4 406.3,475.9 412.2,475.3 418.1,474.5 424.0,473.6 429.8,472.6 435.6,471.5 441.4,470.2 447.2,468.9 452.9,467.4 458.6,465.8 464.2,464.1 469.8,462.3 475.4,460.4 480.9,458.4 486.4,456.2 491.9,454.0 497.3,451.7 502.6,449.3 507.9,446.7 513.2,444.1 518.4,441.4 523.5,438.6 528.6,435.7 533.7,432.8 538.7,429.7 543.7,426.6 548.6,423.4 553.5,420.1 558.3,416.8 563.1,413.4 567.9,409.9 572.6,406.4 577.4,402.8 582.0,399.1 586.7,395.4 591.3,391.6 596.0,387.8 600.6,383.9 605.2,380.0 605.2,300" fill="#fae150"/>
<polygon points="284.2,300 284.2,463.6 290.1,465.1 296.0,466.5 301.9,467.9 307.8,469.1 313.7,470.3 319.6,471.3 325.5,472.3 331.4,473.2 337.3,473.9 343.1,474.6 349.0,475.2 354.9,475.6 360.8,476.0 366.7,476.2 372.6,476.3 378.5,476.4 384.3,476.3 390.2,476.1 396.0,475.7 401.9,475.3 407.7,474.8 413.5,474.1 419.2,473.3 425.0,472.4 430.7,471.4 436.4,470.3 442.1,469.0 447.7,467.7 453.3,466.2 458.9,464.6 464.4,462.9 469.9,461.1 475.4,459.2 480.8,457.2 486.1,455.1 491.4,452.9 496.7,450.6 501.9,448.2 507.1,445.7 512.2,443.1 517.3,440.4 522.4,437.6 527.3,434.8 532.3,431.8 537.2,428.8 542.0,425.8 546.8,422.6 551.6,419.4 556.3,416.1 561.0,412.8 565.6,409.3 570.3,405.9 574.9,402.3 579.4,398.7 583.9,395.1 588.5,391.4 593.0,387.6 597.5,383.8 602.0,380.0 602.0,300" fill="#fbd34e"/>
<polygon points="288.2,300 288.2,463.1 294.0,464.6 299.8,465.9 305.5,467.2 311.3,468.4 317.0,469.6 322.8,470.6 328.6,471.5 334.3,472.3 340.1,473.1 345.9,473.7 351.6,474.2 357.4,474.7 363.2,475.0 368.9,475.2 374.7,475.3 380.4,475.3 386.2,475.2 391.9,475.0 397.6,474.6 403.4,474.2 409.1,473.6 414.7,472.9 420.4,472.1 426.0,471.2 431.6,470.2 437.2,469.1 442.7,467.8 448.3,466.5 453.7,465.0 459.2,463.4 464.6,461.7 470.0,459.9 475.3,458.0 480.6,456.0 485.8,453.9 491.0,451.7 496.2,449.5 501.3,447.1 506.3,444.6 511.3,442.0 516.3,439.4 521.2,436.6 526.1,433.8 530.9,430.9 535.7,428.0 540.4,424.9 545.1,421.8 549.7,418.7 554.3,415.4 558.9,412.1 563.4,408.8 567.9,405.3 572.3,401.9 576.8,398.4 581.2,394.8 585.6,391.2 590.0,387.5 594.3,383.8 598.7,380.0 598.7,300" fill="#fcc64b"/>
<polygon points="292.2,300 292.2,462.6 297.9,464.1 303.5,465.4 309.1,466.6 314.7,467.8 320.4,468.9 326.0,469.8 331.6,470.7 337.3,471.5 342.9,472.2 348.6,472.8 354.2,473.3 359.9,473.7 365.5,474.0 371.2,474.2 376.8,474.3 382.4,474.2 388.0,474.1 393.7,473.9 399.3,473.5 404.9,473.0 410.4,472.5 416.0,471.8 421.5,471.0 427.0,470.0 432.5,469.0 438.0,467.9 443.4,466.6 448.8,465.3 454.2,463.8 459.5,462.2 464.8,460.5 470.0,458.7 475.2,456.9 480.4,454.9 485.5,452.8 490.6,450.6 495.6,448.3 500.6,446.0 505.5,443.5 510.4,441.0 515.3,438.4 520.1,435.7 524.8,432.9 529.5,430.0 534.2,427.1 538.8,424.1 543.3,421.0 547.8,417.9 552.3,414.7 556.7,411.5 561.1,408.2 565.5,404.8 569.8,401.4 574.2,398.0 578.4,394.5 582.7,390.9 587.0,387.3 591.2,383.7 595.4,380.0 595.4,300" fill="#feb848"/>
<polygon points="296.2,300 296.2,462.2 301.7,463.5 307.2,464.8 312.7,466.0 318.2,467.1 323.7,468.2 329.2,469.1 334.7,469.9 340.2,470.7 345.8,471.4 351.3,471.9 356.8,472.4 362.3,472.8 367.9,473.0 373.4,473.2 378.9,473.2 384.4,473.2 389.9,473.0 395.4,472.8 400.9,472.4 406.4,471.9 411.8,471.3 417.2,470.6 422.7,469.8 428.0,468.8 433.4,467.8 438.8,466.7 444.1,465.4 449.3,464.0 454.6,462.6 459.8,461.0 465.0,459.3 470.1,457.6 475.2,455.7 480.2,453.7 485.2,451.6 490.2,449.5 495.1,447.2 499.9,444.9 504.8,442.4 509.5,439.9 514.2,437.3 518.9,434.7 523.5,431.9 528.1,429.1 532.6,426.2 537.1,423.3 541.6,420.3 545.9,417.2 550.3,414.0 554.6,410.9 558.9,407.6 563.1,404.3 567.3,401.0 571.5,397.6 575.7,394.1 579.8,390.7 584.0,387.2 588.1,383.6 592.2,380.0 592.2,300" fill="#ffaa46"/>
<polygon points="296.8,300 296.8,462.1 302.2,463.5 307.7,464.7 313.2,465.9 318.7,467.0 324.1,468.1 329.6,469.0 335.1,469.9 340.6,470.6 346.1,471.3 351.6,471.8 357.1,472.3 362.7,472.7 368.2,472.9 373.7,473.1 379.2,473.1 384.7,473.1 390.2,472.9 395.6,472.6 401.1,472.2 406.6,471.8 412.0,471.2 417.4,470.4 422.8,469.6 428.2,468.7 433.5,467.7 438.9,466.5 444.1,465.3 449.4,463.9 454.6,462.4 459.8,460.9 465.0,459.2 470.1,457.4 475.2,455.5 480.2,453.6 485.2,451.5 490.1,449.3 495.0,447.1 499.9,444.7 504.7,442.3 509.4,439.8 514.1,437.2 518.8,434.6 523.4,431.8 527.9,429.0 532.4,426.1 536.9,423.2 541.3,420.2 545.7,417.1 550.0,414.0 554.3,410.8 558.6,407.6 562.8,404.3 567.0,400.9 571.2,397.5 575.3,394.1 579.4,390.6 583.5,387.1 587.6,383.6 591.7,380.0 591.7,300" fill="#ffaa46"/>
<polygon points="297.3,300 297.3,462.1 302.7,463.4 308.2,464.7 313.7,465.9 319.1,467.0 324.6,468.0 330.1,468.9 335.5,469.8 341.0,470.5 346.5,471.2 352.0,471.7 357.5,472.2 363.0,472.5 368.5,472.8 374.0,473.0 379.4,473.0 384.9,472.9 390.4,472.8 395.9,472.5 401.3,472.1 406.8,471.6 412.2,471.0 417.6,470.3 423.0,469.5 428.3,468.6 433.6,467.5 439.0,466.4 444.2,465.1 449.5,463.7 454.7,462.3 459.9,460.7 465.0,459.0 470.1,457.3 475.1,455.4 480.2,453.4 485.1,451.4 490.1,449.2 494.9,447.0 499.8,444.6 504.5,442.2 509.3,439.7 514.0,437.1 518.6,434.5 523.2,431.7 527.7,428.9 532.2,426.0 536.7,423.1 541.1,420.1 545.4,417.0 549.8,413.9 554.0,410.7 558.3,407.5 562.5,404.2 566.7,400.9 570.8,397.5 574.9,394.1 579.0,390.6 583.1,387.1 587.2,383.6 591.2,380.0 591.2,300" fill="#ffaa46"/>
<polygon points="297.8,300 297.8,462.0 303.3,463.3 308.7,464.6 314.1,465.8 319.6,466.9 325.0,467.9 330.5,468.8 335.9,469.7 341.4,470.4 346.9,471.1 352.4,471.6 357.8,472.1 363.3,472.4 368.8,472.7 374.3,472.8 379.7,472.9 385.2,472.8 390.6,472.6 396.1,472.4 401.5,472.0 406.9,471.5 412.4,470.9 417.7,470.2 423.1,469.3 428.4,468.4 433.8,467.4 439.1,466.2 444.3,465.0 449.5,463.6 454.7,462.1 459.9,460.6 465.0,458.9 470.1,457.1 475.1,455.2 480.1,453.3 485.1,451.2 490.0,449.1 494.9,446.8 499.7,444.5 504.4,442.1 509.1,439.6 513.8,437.0 518.4,434.3 523.0,431.6 527.5,428.8 532.0,425.9 536.4,423.0 540.8,420.0 545.2,416.9 549.5,413.8 553.7,410.7 558.0,407.4 562.2,404.2 566.3,400.8 570.4,397.5 574.6,394.1 578.6,390.6 582.7,387.1 586.7,383.6 590.8,380.0 590.8,300" fill="#ffaa46"/>
<polygon points="298.4,300 298.4,461.9 303.8,463.3 309.2,464.5 314.6,465.7 320.0,466.8 325.5,467.8 330.9,468.8 336.4,469.6 341.8,470.3 347.3,471.0 352.7,471.5 358.2,472.0 363.6,472.3 369.1,472.6 374.6,472.7 380.0,472.8 385.5,472.7 390.9,472.5 396.3,472.2 401.7,471.8 407.1,471.3 412.5,470.7 417.9,470.0 423.3,469.2 428.6,468.3 433.9,467.2 439.2,466.1 444.4,464.8 449.6,463.4 454.8,462.0 459.9,460.4 465.0,458.7 470.1,457.0 475.1,455.1 480.1,453.1 485.0,451.1 489.9,448.9 494.8,446.7 499.6,444.4 504.3,441.9 509.0,439.4 513.7,436.9 518.3,434.2 522.8,431.5 527.3,428.7 531.8,425.8 536.2,422.9 540.6,419.9 544.9,416.9 549.2,413.8 553.5,410.6 557.7,407.4 561.8,404.1 566.0,400.8 570.1,397.4 574.2,394.0 578.2,390.6 582.3,387.1 586.3,383.6 590.3,380.0 590.3,300" fill="#ffaa46"/>
<polygon points="302.2,300 302.2,461.4 307.4,462.7 312.7,463.9 318.0,465.0 323.3,466.0 328.6,466.9 334.0,467.8 339.3,468.5 344.6,469.2 349.9,469.8 355.3,470.3 360.6,470.7 365.9,471.0 371.3,471.2 376.6,471.3 381.9,471.3 387.2,471.2 392.6,471.0 397.9,470.7 403.2,470.3 408.4,469.8 413.7,469.1 418.9,468.4 424.2,467.6 429.4,466.7 434.5,465.6 439.7,464.5 444.8,463.2 449.9,461.9 454.9,460.5 460.0,458.9 464.9,457.3 469.9,455.5 474.8,453.7 479.7,451.8 484.5,449.8 489.3,447.7 494.0,445.5 498.7,443.2 503.3,440.9 507.9,438.4 512.5,435.9 517.0,433.3 521.4,430.6 525.8,427.9 530.2,425.1 534.5,422.2 538.7,419.3 542.9,416.3 547.1,413.3 551.3,410.2 555.3,407.0 559.4,403.8 563.4,400.5 567.4,397.2 571.3,393.8 575.3,390.4 579.2,387.0 583.0,383.5 586.9,380.0 586.9,300" fill="#fd9a46"/>
<polygon points="305.9,300 305.9,460.9 311.1,462.1 316.3,463.2 321.5,464.2 326.6,465.2 331.8,466.0 337.0,466.8 342.2,467.5 347.4,468.1 352.6,468.6 357.8,469.1 363.0,469.4 368.2,469.6 373.5,469.8 378.7,469.9 383.9,469.8 389.0,469.7 394.2,469.4 399.4,469.1 404.6,468.7 409.7,468.2 414.8,467.5 420.0,466.8 425.1,466.0 430.1,465.1 435.2,464.0 440.2,462.9 445.2,461.7 450.2,460.4 455.1,458.9 460.0,457.4 464.9,455.8 469.7,454.1 474.5,452.3 479.2,450.5 483.9,448.5 488.6,446.4 493.2,444.3 497.8,442.1 502.3,439.8 506.8,437.4 511.3,434.9 515.6,432.4 520.0,429.8 524.3,427.1 528.5,424.4 532.7,421.6 536.9,418.7 541.0,415.8 545.0,412.8 549.1,409.7 553.0,406.6 557.0,403.4 560.8,400.2 564.7,397.0 568.5,393.7 572.3,390.3 576.0,386.9 579.7,383.5 583.4,380.0 583.4,300" fill="#fc8946"/>
<polygon points="309.7,300 309.7,460.4 314.8,461.5 319.8,462.5 324.9,463.5 329.9,464.3 335.0,465.1 340.1,465.8 345.1,466.5 350.2,467.0 355.3,467.5 360.4,467.8 365.5,468.1 370.5,468.3 375.6,468.4 380.7,468.4 385.8,468.3 390.8,468.2 395.9,467.9 400.9,467.6 406.0,467.1 411.0,466.6 416.0,465.9 421.0,465.2 426.0,464.4 430.9,463.4 435.8,462.4 440.7,461.3 445.6,460.1 450.4,458.8 455.3,457.4 460.0,455.9 464.8,454.4 469.5,452.7 474.2,451.0 478.8,449.1 483.4,447.2 487.9,445.2 492.5,443.1 496.9,440.9 501.3,438.7 505.7,436.4 510.0,434.0 514.3,431.5 518.6,428.9 522.7,426.3 526.9,423.6 531.0,420.9 535.0,418.1 539.0,415.2 543.0,412.3 546.8,409.3 550.7,406.2 554.5,403.1 558.3,400.0 562.0,396.7 565.7,393.5 569.3,390.2 572.9,386.8 576.5,383.4 580.0,380.0 580.0,300" fill="#fa7846"/>
<polygon points="313.5,300 313.5,459.9 318.4,460.9 323.4,461.9 328.3,462.7 333.2,463.5 338.2,464.2 343.1,464.8 348.1,465.4 353.0,465.9 358.0,466.3 362.9,466.6 367.9,466.8 372.9,467.0 377.8,467.0 382.8,467.0 387.7,466.9 392.6,466.7 397.6,466.4 402.5,466.0 407.4,465.5 412.3,465.0 417.2,464.3 422.0,463.6 426.9,462.8 431.7,461.8 436.5,460.8 441.2,459.7 446.0,458.6 450.7,457.3 455.4,455.9 460.1,454.5 464.7,452.9 469.3,451.3 473.8,449.6 478.4,447.8 482.8,445.9 487.3,444.0 491.7,441.9 496.0,439.8 500.3,437.6 504.6,435.3 508.8,433.0 513.0,430.6 517.1,428.1 521.2,425.5 525.2,422.9 529.2,420.2 533.2,417.5 537.0,414.6 540.9,411.8 544.6,408.8 548.4,405.8 552.1,402.8 555.7,399.7 559.3,396.5 562.8,393.3 566.3,390.1 569.8,386.7 573.2,383.4 576.6,380.0 576.6,300" fill="#f86846"/>
<polygon points="316.5,300 316.5,459.4 321.4,460.3 326.2,461.1 331.1,461.8 335.9,462.4 340.8,463.0 345.6,463.5 350.5,464.0 355.3,464.3 360.2,464.6 365.0,464.9 369.9,465.0 374.7,465.1 379.5,465.1 384.4,465.0 389.2,464.8 394.0,464.6 398.8,464.3 403.6,463.9 408.4,463.4 413.1,462.9 417.9,462.2 422.6,461.5 427.4,460.7 432.1,459.8 436.8,458.8 441.4,457.7 446.1,456.6 450.7,455.4 455.2,454.1 459.8,452.7 464.3,451.2 468.8,449.6 473.3,448.0 477.7,446.3 482.1,444.5 486.5,442.6 490.8,440.6 495.0,438.6 499.3,436.5 503.4,434.3 507.6,432.0 511.7,429.7 515.7,427.3 519.7,424.8 523.7,422.3 527.6,419.6 531.4,416.9 535.2,414.2 539.0,411.4 542.7,408.5 546.3,405.6 549.9,402.6 553.4,399.5 556.9,396.4 560.4,393.2 563.7,390.0 567.1,386.7 570.3,383.4 573.6,380.0 573.6,300" fill="#f86846"/>
<polygon points="319.6,300 319.6,459.0 324.3,459.6 329.1,460.3 333.9,460.8 338.6,461.3 343.4,461.8 348.1,462.2 352.9,462.5 357.6,462.8 362.3,463.0 367.1,463.1 371.8,463.2 376.5,463.2 381.2,463.1 386.0,463.0 390.7,462.8 395.4,462.5 400.0,462.2 404.7,461.8 409.4,461.3 414.0,460.7 418.7,460.1 423.3,459.4 427.9,458.6 432.5,457.7 437.0,456.8 441.6,455.7 446.1,454.6 450.6,453.5 455.1,452.2 459.5,450.9 464.0,449.5 468.4,448.0 472.7,446.4 477.1,444.8 481.4,443.0 485.6,441.2 489.8,439.3 494.0,437.4 498.2,435.4 502.3,433.2 506.3,431.1 510.4,428.8 514.3,426.5 518.2,424.1 522.1,421.6 525.9,419.1 529.7,416.4 533.4,413.7 537.1,411.0 540.7,408.2 544.3,405.3 547.8,402.3 551.2,399.3 554.6,396.3 557.9,393.1 561.2,389.9 564.3,386.7 567.5,383.4 570.6,380.0 570.6,300" fill="#f86846"/>
<polygon points="322.6,300 322.6,458.5 327.3,459.0 332.0,459.5 336.6,459.9 341.3,460.3 346.0,460.6 350.6,460.9 355.3,461.1 359.9,461.2 364.5,461.3 369.1,461.4 373.8,461.4 378.4,461.3 383.0,461.2 387.6,461.0 392.1,460.8 396.7,460.5 401.3,460.1 405.8,459.7 410.4,459.2 414.9,458.6 419.4,458.0 423.9,457.3 428.4,456.5 432.9,455.6 437.3,454.7 441.8,453.7 446.2,452.7 450.6,451.6 454.9,450.4 459.3,449.1 463.6,447.7 467.9,446.3 472.2,444.8 476.4,443.2 480.6,441.6 484.8,439.9 488.9,438.1 493.0,436.2 497.1,434.2 501.1,432.2 505.1,430.1 509.0,427.9 512.9,425.7 516.8,423.3 520.6,420.9 524.3,418.5 528.0,415.9 531.6,413.3 535.2,410.6 538.7,407.9 542.2,405.0 545.6,402.1 548.9,399.2 552.2,396.1 555.4,393.0 558.6,389.9 561.6,386.6 564.6,383.4 567.6,380.0 567.6,300" fill="#f86846"/>
<polygon points="325.6,300 325.6,458.0 330.2,458.4 334.8,458.7 339.4,458.9 344.0,459.2 348.6,459.4 353.1,459.5 357.7,459.6 362.2,459.7 366.7,459.7 371.2,459.7 375.7,459.6 380.2,459.4 384.7,459.3 389.2,459.0 393.6,458.7 398.1,458.4 402.5,458.0 406.9,457.5 411.4,457.0 415.8,456.5 420.2,455.8 424.5,455.1 428.9,454.4 433.3,453.6 437.6,452.7 441.9,451.8 446.2,450.7 450.5,449.7 454.8,448.5 459.0,447.3 463.2,446.0 467.4,444.6 471.6,443.2 475.8,441.7 479.9,440.1 484.0,438.5 488.0,436.8 492.0,435.0 496.0,433.1 499.9,431.2 503.8,429.1 507.7,427.0 511.5,424.9 515.3,422.6 519.0,420.3 522.7,417.9 526.3,415.4 529.8,412.9 533.3,410.2 536.8,407.5 540.1,404.8 543.4,401.9 546.7,399.0 549.9,396.0 553.0,392.9 556.0,389.8 558.9,386.6 561.8,383.3 564.6,380.0 564.6,300" fill="#f86846"/>
<polygon points="331.2,300 331.2,457.3 335.7,457.5 340.2,457.8 344.6,458.0 349.1,458.2 353.5,458.3 357.9,458.4 362.3,458.4 366.7,458.4 371.1,458.4 375.5,458.3 379.9,458.2 384.2,458.0 388.6,457.8 392.9,457.5 397.2,457.2 401.5,456.8 405.8,456.4 410.1,456.0 414.4,455.4 418.7,454.9 422.9,454.2 427.2,453.5 431.4,452.8 435.6,451.9 439.8,451.1 444.0,450.1 448.2,449.1 452.4,448.0 456.5,446.9 460.6,445.7 464.7,444.4 468.8,443.1 472.8,441.7 476.8,440.2 480.8,438.7 484.8,437.1 488.7,435.4 492.6,433.6 496.5,431.8 500.3,429.9 504.1,427.9 507.8,425.9 511.5,423.8 515.2,421.6 518.8,419.3 522.4,417.0 525.9,414.6 529.3,412.1 532.7,409.5 536.1,406.9 539.3,404.2 542.5,401.4 545.7,398.6 548.7,395.7 551.7,392.7 554.6,389.6 557.5,386.5 560.2,383.3 562.9,380.0 562.9,300" fill="#ec5346"/>
<polygon points="336.8,300 336.8,456.5 341.2,456.7 345.5,456.9 349.8,457.0 354.2,457.1 358.5,457.2 362.7,457.2 367.0,457.2 371.3,457.2 375.5,457.1 379.8,456.9 384.0,456.8 388.2,456.6 392.4,456.3 396.6,456.0 400.8,455.7 405.0,455.3 409.2,454.8 413.3,454.4 417.5,453.8 421.6,453.2 425.7,452.6 429.8,451.9 433.9,451.1 438.0,450.3 442.1,449.4 446.2,448.5 450.2,447.5 454.2,446.4 458.2,445.3 462.2,444.1 466.1,442.8 470.1,441.5 474.0,440.1 477.9,438.7 481.8,437.2 485.6,435.6 489.4,434.0 493.2,432.3 496.9,430.5 500.6,428.6 504.3,426.7 507.9,424.7 511.5,422.7 515.1,420.6 518.6,418.4 522.1,416.1 525.5,413.7 528.8,411.3 532.1,408.8 535.3,406.3 538.5,403.7 541.6,400.9 544.7,398.2 547.6,395.3 550.5,392.4 553.3,389.4 556.1,386.3 558.7,383.2 561.3,380.0 561.3,300" fill="#e03e46"/>
<polygon points="342.4,300 342.4,455.8 346.6,455.9 350.8,456.0 355.0,456.1 359.2,456.1 363.4,456.1 367.5,456.1 371.7,456.0 375.8,455.9 379.9,455.8 384.0,455.6 388.1,455.4 392.2,455.1 396.3,454.8 400.4,454.5 404.4,454.1 408.5,453.7 412.5,453.3 416.5,452.8 420.5,452.2 424.5,451.6 428.5,451.0 432.5,450.3 436.5,449.5 440.4,448.7 444.3,447.8 448.3,446.9 452.2,445.9 456.0,444.8 459.9,443.7 463.8,442.5 467.6,441.3 471.4,440.0 475.2,438.6 479.0,437.2 482.7,435.7 486.4,434.2 490.1,432.6 493.8,430.9 497.4,429.2 501.0,427.4 504.5,425.5 508.1,423.6 511.5,421.6 515.0,419.5 518.4,417.4 521.7,415.2 525.1,412.9 528.3,410.6 531.5,408.2 534.6,405.7 537.7,403.1 540.7,400.5 543.6,397.8 546.5,395.0 549.3,392.1 552.0,389.2 554.6,386.2 557.2,383.1 559.6,380.0 559.6,300" fill="#d42946"/>
<polygon points="348.0,300 348.0,455.0 352.1,455.1 356.2,455.1 360.3,455.1 364.3,455.1 368.3,455.0 372.4,454.9 376.4,454.8 380.4,454.6 384.3,454.4 388.3,454.2 392.3,454.0 396.2,453.7 400.2,453.3 404.1,453.0 408.0,452.6 411.9,452.2 415.8,451.7 419.7,451.2 423.6,450.6 427.5,450.0 431.3,449.4 435.2,448.6 439.0,447.9 442.8,447.1 446.6,446.2 450.4,445.2 454.1,444.2 457.9,443.2 461.6,442.1 465.3,440.9 469.0,439.7 472.7,438.4 476.4,437.1 480.0,435.7 483.6,434.2 487.2,432.7 490.8,431.2 494.3,429.5 497.8,427.9 501.3,426.1 504.8,424.3 508.2,422.4 511.6,420.5 514.9,418.5 518.2,416.4 521.4,414.3 524.6,412.1 527.8,409.8 530.9,407.5 533.9,405.0 536.9,402.6 539.8,400.0 542.6,397.3 545.4,394.6 548.1,391.8 550.7,389.0 553.2,386.0 555.6,383.1 558.0,380.0 558.0,300" fill="#c81446"/>
<polygon points="414.0,300 414.0,450.4 415.8,450.1 417.5,449.8 419.3,449.5 421.0,449.2 422.8,448.8 424.5,448.5 426.3,448.2 428.0,447.9 429.8,447.5 431.6,447.2 433.3,446.8 435.1,446.5 436.8,446.1 438.6,445.7 440.3,445.3 442.1,444.9 443.8,444.5 445.5,444.1 447.3,443.6 449.0,443.2 450.7,442.7 452.5,442.2 454.2,441.7 455.9,441.1 457.6,440.5 459.3,439.9 460.9,439.3 462.6,438.7 464.3,438.0 465.9,437.3 467.5,436.5 469.1,435.7 470.7,434.9 472.3,434.1 473.9,433.2 475.4,432.3 476.9,431.3 478.4,430.3 479.9,429.3 481.3,428.3 482.8,427.2 484.2,426.1 485.6,424.9 486.9,423.8 488.3,422.6 489.6,421.4 490.9,420.1 492.2,418.9 493.4,417.6 494.6,416.3 495.8,415.0 497.0,413.6 498.2,412.3 499.3,410.9 500.5,409.5 501.6,408.2 502.7,406.8 503.9,405.4 505.0,404.0 505.0,300" fill="#c81446"/>
<polygon points="414.0,300 414.0,449.5 415.8,449.2 417.5,448.9 419.3,448.6 421.0,448.2 422.8,447.9 424.5,447.6 426.3,447.3 428.0,446.9 429.8,446.6 431.6,446.3 433.3,445.9 435.1,445.6 436.8,445.2 438.6,444.8 440.3,444.4 442.1,444.0 443.8,443.6 445.5,443.2 447.3,442.7 449.0,442.3 450.7,441.8 452.5,441.3 454.2,440.7 455.9,440.2 457.6,439.6 459.3,439.0 460.9,438.4 462.6,437.7 464.3,437.1 465.9,436.3 467.5,435.6 469.1,434.8 470.7,434.0 472.3,433.2 473.9,432.3 475.4,431.3 476.9,430.4 478.4,429.4 479.9,428.4 481.3,427.3 482.8,426.3 484.2,425.2 485.6,424.0 486.9,422.9 488.3,421.7 489.6,420.5 490.9,419.2 492.2,418.0 493.4,416.7 494.6,415.4 495.8,414.1 497.0,412.7 498.2,411.4 499.3,410.0 500.5,408.6 501.6,407.2 502.7,405.9 503.9,404.5 505.0,403.1 505.0,300" fill="#ce1f46"/>
<polygon points="414.0,300 414.0,448.6 415.8,448.3 417.5,447.9 419.3,447.6 421.0,447.3 422.8,447.0 424.5,446.7 426.3,446.4 428.0,446.0 429.8,445.7 431.6,445.4 433.3,445.0 435.1,444.6 436.8,444.3 438.6,443.9 440.3,443.5 442.1,443.1 443.8,442.7 445.5,442.2 447.3,441.8 449.0,441.3 450.7,440.9 452.5,440.3 454.2,439.8 455.9,439.3 457.6,438.7 459.3,438.1 460.9,437.5 462.6,436.8 464.3,436.1 465.9,435.4 467.5,434.7 469.1,433.9 470.7,433.1 472.3,432.2 473.9,431.4 475.4,430.4 476.9,429.5 478.4,428.5 479.9,427.5 481.3,426.4 482.8,425.4 484.2,424.2 485.6,423.1 486.9,421.9 488.3,420.8 489.6,419.5 490.9,418.3 492.2,417.0 493.4,415.8 494.6,414.5 495.8,413.1 497.0,411.8 498.2,410.4 499.3,409.1 500.5,407.7 501.6,406.3 502.7,404.9 503.9,403.6 505.0,402.2 505.0,300" fill="#d42a47"/>
<polygon points="414.0,300 414.0,447.6 415.8,447.3 417.5,447.0 419.3,446.7 421.0,446.4 422.8,446.1 424.5,445.8 426.3,445.4 428.0,445.1 429.8,444.8 431.6,444.4 433.3,444.1 435.1,443.7 436.8,443.4 438.6,443.0 440.3,442.6 442.1,442.2 443.8,441.8 445.5,441.3 447.3,440.9 449.0,440.4 450.7,439.9 452.5,439.4 454.2,438.9 455.9,438.4 457.6,437.8 459.3,437.2 460.9,436.6 462.6,435.9 464.3,435.2 465.9,434.5 467.5,433.8 469.1,433.0 470.7,432.2 472.3,431.3 473.9,430.4 475.4,429.5 476.9,428.6 478.4,427.6 479.9,426.6 481.3,425.5 482.8,424.4 484.2,423.3 485.6,422.2 486.9,421.0 488.3,419.8 489.6,418.6 490.9,417.4 492.2,416.1 493.4,414.8 494.6,413.5 495.8,412.2 497.0,410.9 498.2,409.5 499.3,408.2 500.5,406.8 501.6,405.4 502.7,404.0 503.9,402.6 505.0,401.2 505.0,300" fill="#da3547"/>
<polygon points="414.0,300 414.0,446.7 415.8,446.4 417.5,446.1 419.3,445.8 421.0,445.5 422.8,445.2 424.5,444.9 426.3,444.5 428.0,444.2 429.8,443.9 431.6,443.5 433.3,443.2 435.1,442.8 436.8,442.4 438.6,442.1 440.3,441.7 442.1,441.3 443.8,440.8 445.5,440.4 447.3,440.0 449.0,439.5 450.7,439.0 452.5,438.5 454.2,438.0 455.9,437.4 457.6,436.9 459.3,436.3 460.9,435.6 462.6,435.0 464.3,434.3 465.9,433.6 467.5,432.9 469.1,432.1 470.7,431.3 472.3,430.4 473.9,429.5 475.4,428.6 476.9,427.6 478.4,426.7 479.9,425.6 481.3,424.6 482.8,423.5 484.2,422.4 485.6,421.3 486.9,420.1 488.3,418.9 489.6,417.7 490.9,416.5 492.2,415.2 493.4,413.9 494.6,412.6 495.8,411.3 497.0,410.0 498.2,408.6 499.3,407.3 500.5,405.9 501.6,404.5 502.7,403.1 503.9,401.7 505.0,400.3 505.0,300" fill="#e04047"/>
<polygon points="414.0,300 414.0,445.8 415.8,445.5 417.5,445.2 419.3,444.9 421.0,444.6 422.8,444.3 424.5,443.9 426.3,443.6 428.0,443.3 429.8,442.9 431.6,442.6 433.3,442.2 435.1,441.9 436.8,441.5 438.6,441.1 440.3,440.7 442.1,440.3 443.8,439.9 445.5,439.5 447.3,439.0 449.0,438.6 450.7,438.1 452.5,437.6 454.2,437.1 455.9,436.5 457.6,436.0 459.3,435.4 460.9,434.7 462.6,434.1 464.3,433.4 465.9,432.7 467.5,431.9 469.1,431.2 470.7,430.3 472.3,429.5 473.9,428.6 475.4,427.7 476.9,426.7 478.4,425.7 479.9,424.7 481.3,423.7 482.8,422.6 484.2,421.5 485.6,420.4 486.9,419.2 488.3,418.0 489.6,416.8 490.9,415.6 492.2,414.3 493.4,413.0 494.6,411.7 495.8,410.4 497.0,409.0 498.2,407.7 499.3,406.3 500.5,405.0 501.6,403.6 502.7,402.2 503.9,400.8 505.0,399.4 505.0,300" fill="#e64b48"/>
<polygon points="414.0,300 414.0,444.9 415.8,444.6 417.5,444.3 419.3,444.0 421.0,443.7 422.8,443.3 424.5,443.0 426.3,442.7 428.0,442.4 429.8,442.0 431.6,441.7 433.3,441.3 435.1,441.0 436.8,440.6 438.6,440.2 440.3,439.8 442.1,439.4 443.8,439.0 445.5,438.6 447.3,438.1 449.0,437.7 450.7,437.2 452.5,436.7 454.2,436.2 455.9,435.6 457.6,435.0 459.3,434.4 460.9,433.8 462.6,433.2 464.3,432.5 465.9,431.8 467.5,431.0 469.1,430.2 470.7,429.4 472.3,428.6 473.9,427.7 475.4,426.8 476.9,425.8 478.4,424.8 479.9,423.8 481.3,422.8 482.8,421.7 484.2,420.6 485.6,419.4 486.9,418.3 488.3,417.1 489.6,415.9 490.9,414.6 492.2,413.4 493.4,412.1 494.6,410.8 495.8,409.5 497.0,408.1 498.2,406.8 499.3,405.4 500.5,404.0 501.6,402.7 502.7,401.3 503.9,399.9 505.0,398.5 505.0,300" fill="#ec5648"/>
</g>
</g>
<polyline points="402.0,448.3 404.9,448.1 407.7,447.9 410.6,447.7 413.4,447.5 416.3,447.2 419.2,446.9 422.0,446.6 424.9,446.2 427.7,445.8 430.5,445.4 433.4,445.0 436.2,444.5 439.1,444.1 441.9,443.6 444.7,443.0 447.5,442.5 450.4,441.9 453.2,441.3 456.0,440.6 458.8,439.9 461.5,439.2 464.3,438.3 467.0,437.5 469.7,436.5 472.4,435.5 475.0,434.4 477.7,433.3 480.3,432.1 482.9,430.8 485.4,429.5 488.0,428.2 490.6,426.9 493.1,425.6 495.6,424.2 498.1,422.8 500.7,421.4 503.2,420.0 505.6,418.6 508.1,417.1 510.6,415.6 513.0,414.1 515.4,412.5 517.8,411.0 520.2,409.4 522.6,407.7 524.9,406.1 527.2,404.4 529.5,402.6 531.8,400.9 534.0,399.0 536.2,397.1 538.3,395.2 540.3,393.2 542.3,391.1 544.2,388.9 546.0,386.8 547.8,384.5 549.6,382.3 551.4,380.0" fill="none" stroke="#14080a" stroke-width="1.15"/>
<polyline points="216,470 216,559.2 712.5,559.2 712.5,368.3" fill="none" stroke="#b0b0b0" stroke-width="0.6"/>
<circle cx="216" cy="523.2" r="0.8" fill="#c8824a"/>
<path d="M552.9 337V379.4M550.3 372.2L552.9 379.8L555.5 372.2M556.4 337V379.4M553.8 372.2L556.4 379.8L559.0 372.2M560.0 337V379.4M557.4 372.2L560.0 379.8L562.6 372.2M563.5 337V379.4M560.9 372.2L563.5 379.8L566.1 372.2M567.1 337V379.4M564.5 372.2L567.1 379.8L569.7 372.2M570.6 337V379.4M568.0 372.2L570.6 379.8L573.2 372.2" stroke="#ff8a14" stroke-width="0.95" fill="none" stroke-linejoin="round"/>
<path d="M589.5 337V379.4M586.9 372.2L589.5 379.8L592.1 372.2M593.1 337V379.4M590.5 372.2L593.1 379.8L595.7 372.2M596.7 337V379.4M594.1 372.2L596.7 379.8L599.3 372.2M600.3 337V379.4M597.7 372.2L600.3 379.8L602.9 372.2M603.9 337V379.4M601.3 372.2L603.9 379.8L606.5 372.2M607.5 337V379.4M604.9 372.2L607.5 379.8L610.1 372.2" stroke="#ff8a14" stroke-width="0.95" fill="none" stroke-linejoin="round"/>
<g stroke-width="1.5" stroke-linecap="butt" fill="none" opacity="0.8">
<path d="M392.3 382.4h3M393.8 380.9v3M350.7 284.8h3M352.2 283.3v3M349.2 281.6h3M350.7 280.1v3M507.6 328.6h3M509.1 327.1v3M504.8 314.3h3M506.3 312.8v3" stroke="#eaef77"/>
<path d="M390.8 379.2h3M392.3 377.7v3M347.7 278.4h3M349.2 276.9v3M503.6 303.2h3M505.1 301.7v3M500.8 288.9h3M502.3 287.4v3" stroke="#e9ef77"/>
<path d="M389.3 376.0h3M390.8 374.5v3M346.2 275.2h3M347.7 273.7v3M344.7 272.0h3M346.2 270.5v3M506.3 317.5h3M507.8 316.0v3" stroke="#e8ef77"/>
<path d="M387.8 372.8h3M389.3 371.3v3M343.2 268.8h3M344.7 267.3v3M505.0 306.4h3M506.5 304.9v3" stroke="#e7f078"/>
<path d="M386.3 369.6h3M387.8 368.1v3M341.7 265.6h3M343.2 264.1v3M340.2 262.4h3M341.7 260.9v3M507.8 320.7h3M509.3 319.2v3" stroke="#e6f078"/>
<path d="M384.8 366.4h3M386.3 364.9v3M338.7 259.2h3M340.2 257.7v3M503.8 295.3h3M505.3 293.8v3" stroke="#e5f078"/>
<path d="M383.3 363.2h3M384.8 361.7v3M509.3 323.9h3M510.8 322.4v3M506.5 309.6h3M508.0 308.1v3" stroke="#e4f078"/>
<path d="M381.8 360.0h3M383.3 358.5v3" stroke="#e3f078"/>
<path d="M380.4 356.8h3M381.9 355.3v3M505.3 298.5h3M506.8 297.0v3" stroke="#e3f179"/>
<path d="M378.9 353.6h3M380.4 352.1v3M508.0 312.8h3M509.5 311.3v3" stroke="#e2f179"/>
<path d="M377.4 350.4h3M378.9 348.9v3M375.9 347.2h3M377.4 345.7v3M510.8 327.1h3M512.3 325.6v3" stroke="#e1f179"/>
<path d="M374.4 344.0h3M375.9 342.5v3M340.5 254.5h3M342.0 253.0v3M509.5 316.0h3M511.0 314.5v3M506.8 301.7h3M508.3 300.2v3" stroke="#e0f179"/>
<path d="M372.9 340.8h3M374.4 339.3v3M371.4 337.6h3M372.9 336.1v3" stroke="#dff179"/>
<path d="M369.9 334.4h3M371.4 332.9v3M368.4 331.2h3M369.9 329.7v3M511.0 319.2h3M512.5 317.7v3M508.3 304.9h3M509.8 303.4v3" stroke="#def27a"/>
<path d="M366.9 328.0h3M368.4 326.5v3M365.4 324.7h3M366.9 323.2v3" stroke="#ddf27a"/>
<path d="M363.9 321.5h3M365.4 320.0v3M362.4 318.3h3M363.9 316.8v3M509.7 308.1h3M511.2 306.6v3" stroke="#dcf27a"/>
<path d="M360.9 315.1h3M362.4 313.6v3M359.4 311.9h3M360.9 310.4v3M357.9 308.7h3M359.4 307.2v3M512.5 322.4h3M514.0 320.9v3" stroke="#dbf27a"/>
<path d="M356.5 305.5h3M358.0 304.0v3M355.0 302.3h3M356.5 300.8v3M353.5 299.1h3M355.0 297.6v3M511.2 311.3h3M512.7 309.8v3" stroke="#daf37b"/>
<path d="M352.0 295.9h3M353.5 294.4v3M350.5 292.7h3M352.0 291.2v3M349.0 289.5h3M350.5 288.0v3M514.0 325.6h3M515.5 324.1v3" stroke="#d9f37b"/>
<path d="M347.5 286.3h3M349.0 284.8v3M346.0 283.1h3M347.5 281.6v3M344.5 279.9h3M346.0 278.4v3M343.0 276.7h3M344.5 275.2v3" stroke="#d8f37b"/>
<path d="M341.5 273.5h3M343.0 272.0v3M340.0 270.3h3M341.5 268.8v3M338.5 267.1h3M340.0 265.6v3M337.0 263.9h3M338.5 262.4v3M335.5 260.7h3M337.0 259.2v3M512.7 314.5h3M514.2 313.0v3" stroke="#d7f37b"/>
<path d="M334.1 257.5h3M335.6 256.0v3" stroke="#d6f37b"/>
<path d="M395.5 380.9h3M397.0 379.4v3M376.3 331.4h3M377.8 329.9v3M361.6 291.4h3M363.1 289.9v3M483.1 301.1h3M484.6 299.6v3M480.3 286.8h3M481.8 285.3v3M476.2 261.4h3M477.7 259.9v3M473.5 247.1h3M475.0 245.6v3" stroke="#fdd571"/>
<path d="M394.0 377.7h3M395.5 376.2v3M374.8 328.2h3M376.3 326.7v3M360.1 288.2h3M361.6 286.7v3M490.1 332.9h3M491.6 331.4v3M487.3 318.6h3M488.8 317.1v3M484.6 304.3h3M486.1 302.8v3M480.5 278.9h3M482.0 277.4v3M477.7 264.6h3M479.2 263.1v3M470.9 224.9h3M472.4 223.4v3" stroke="#fdd771"/>
<path d="M392.5 374.5h3M394.0 373.0v3M373.3 325.0h3M374.8 323.5v3M358.6 285.0h3M360.1 283.5v3M488.8 321.8h3M490.3 320.3v3M486.0 307.5h3M487.5 306.0v3M479.2 267.8h3M480.7 266.3v3M476.5 253.5h3M478.0 252.0v3" stroke="#fcd871"/>
<path d="M391.0 371.3h3M392.5 369.8v3M490.3 325.0h3M491.8 323.5v3M483.5 285.3h3M485.0 283.8v3M480.7 271.0h3M482.2 269.5v3M476.7 245.6h3M478.2 244.1v3M473.9 231.3h3M475.4 229.8v3" stroke="#fcda71"/>
<path d="M389.5 368.1h3M391.0 366.6v3M368.8 315.4h3M370.3 313.9v3M354.1 275.4h3M355.6 273.9v3M490.5 317.1h3M492.0 315.6v3M487.8 302.8h3M489.3 301.3v3M485.0 288.5h3M486.5 287.0v3M480.9 263.1h3M482.4 261.6v3M478.2 248.8h3M479.7 247.3v3" stroke="#fbdc72"/>
<path d="M388.0 364.9h3M389.5 363.4v3M367.3 312.2h3M368.8 310.7v3M352.6 272.2h3M354.1 270.7v3M493.3 331.4h3M494.8 329.9v3M489.3 306.0h3M490.8 304.5v3M486.5 291.7h3M488.0 290.2v3M483.7 277.4h3M485.2 275.9v3M479.7 252.0h3M481.2 250.5v3M476.9 237.7h3M478.4 236.2v3" stroke="#fbdd72"/>
<path d="M386.5 361.7h3M388.0 360.2v3M365.8 308.9h3M367.3 307.4v3M349.6 265.8h3M351.1 264.3v3M493.5 323.5h3M495.0 322.0v3M490.7 309.2h3M492.2 307.7v3M483.9 269.5h3M485.4 268.0v3M481.2 255.2h3M482.7 253.7v3" stroke="#fadf72"/>
<path d="M385.0 358.5h3M386.5 357.0v3M364.4 305.7h3M365.9 304.2v3M348.1 262.6h3M349.6 261.1v3M492.2 312.4h3M493.7 310.9v3M489.5 298.1h3M491.0 296.6v3M486.7 283.8h3M488.2 282.3v3M482.6 258.4h3M484.1 256.9v3M479.9 244.1h3M481.4 242.6v3" stroke="#fae072"/>
<path d="M383.6 355.3h3M385.1 353.8v3M361.4 299.3h3M362.9 297.8v3M348.4 254.7h3M349.9 253.2v3M496.5 329.9h3M498.0 328.4v3M493.7 315.6h3M495.2 314.1v3M489.7 290.2h3M491.2 288.7v3M486.9 275.9h3M488.4 274.4v3M484.1 261.6h3M485.6 260.1v3" stroke="#f9e273"/>
<path d="M382.1 352.1h3M383.6 350.6v3M359.9 296.1h3M361.4 294.6v3M495.2 318.8h3M496.7 317.3v3M492.5 304.5h3M494.0 303.0v3M488.4 279.1h3M489.9 277.6v3M485.6 264.8h3M487.1 263.3v3M482.9 250.5h3M484.4 249.0v3" stroke="#f9e373"/>
<path d="M380.6 348.9h3M382.1 347.4v3M498.0 333.1h3M499.5 331.6v3M491.2 293.4h3M492.7 291.9v3M484.4 253.7h3M485.9 252.2v3" stroke="#f9e473"/>
<path d="M379.1 345.7h3M380.6 344.2v3M356.9 289.7h3M358.4 288.2v3M496.7 322.0h3M498.2 320.5v3M492.7 296.6h3M494.2 295.1v3M489.9 282.3h3M491.4 280.8v3M487.1 268.0h3M488.6 266.5v3" stroke="#f8e573"/>
<path d="M377.6 342.5h3M379.1 341.0v3M355.4 286.5h3M356.9 285.0v3M346.9 251.5h3M348.4 250.0v3M498.2 325.2h3M499.7 323.7v3M495.4 310.9h3M496.9 309.4v3M491.4 285.5h3M492.9 284.0v3M488.6 271.2h3M490.1 269.7v3M485.8 256.9h3M487.3 255.4v3" stroke="#f8e673"/>
<path d="M376.1 339.3h3M377.6 337.8v3M352.4 280.1h3M353.9 278.6v3M499.7 328.4h3M501.2 326.9v3M495.7 303.0h3M497.2 301.5v3M492.9 288.7h3M494.4 287.2v3M488.8 263.3h3M490.3 261.8v3" stroke="#f7e873"/>
<path d="M374.6 336.1h3M376.1 334.6v3M350.9 276.9h3M352.4 275.4v3M501.2 331.6h3M502.7 330.1v3M498.4 317.3h3M499.9 315.8v3M494.4 291.9h3M495.9 290.4v3M491.6 277.6h3M493.1 276.1v3" stroke="#f7e974"/>
<path d="M373.1 332.9h3M374.6 331.4v3M349.4 273.7h3M350.9 272.2v3M499.9 320.5h3M501.4 319.0v3M497.1 306.2h3M498.6 304.7v3M493.1 280.8h3M494.6 279.3v3M490.3 266.5h3M491.8 265.0v3" stroke="#f7ea74"/>
<path d="M371.6 329.7h3M373.1 328.2v3M347.9 270.5h3M349.4 269.0v3M501.4 323.7h3M502.9 322.2v3M498.6 309.4h3M500.1 307.9v3M495.9 295.1h3M497.4 293.6v3M491.8 269.7h3M493.3 268.2v3" stroke="#f6eb74"/>
<path d="M370.1 326.5h3M371.6 325.0v3M346.4 267.3h3M347.9 265.8v3M497.4 298.3h3M498.9 296.8v3M494.6 284.0h3M496.1 282.5v3" stroke="#f6ec74"/>
<path d="M368.6 323.3h3M370.1 321.8v3M344.9 264.1h3M346.4 262.6v3M502.9 326.9h3M504.4 325.4v3M500.1 312.6h3M501.6 311.1v3M493.3 272.9h3M494.8 271.4v3" stroke="#f5ec74"/>
<path d="M367.1 320.1h3M368.6 318.6v3M343.4 260.9h3M344.9 259.4v3M496.1 287.2h3M497.6 285.7v3" stroke="#f4ec74"/>
<path d="M365.6 316.8h3M367.1 315.3v3M342.0 257.7h3M343.5 256.2v3M345.2 256.2h3M346.7 254.7v3M501.6 315.8h3M503.1 314.3v3" stroke="#f3ed75"/>
<path d="M364.1 313.6h3M365.6 312.1v3M504.4 330.1h3M505.9 328.6v3M497.6 290.4h3M499.1 288.9v3M494.8 276.1h3M496.3 274.6v3" stroke="#f2ed75"/>
<path d="M362.6 310.4h3M364.1 308.9v3M503.1 319.0h3M504.6 317.5v3M500.4 304.7h3M501.9 303.2v3" stroke="#f1ed75"/>
<path d="M361.2 307.2h3M362.7 305.7v3M496.3 279.3h3M497.8 277.8v3" stroke="#f0ed75"/>
<path d="M359.7 304.0h3M361.2 302.5v3M343.7 253.0h3M345.2 251.5v3M501.8 307.9h3M503.3 306.4v3" stroke="#efee76"/>
<path d="M358.2 300.8h3M359.7 299.3v3M356.7 297.6h3M358.2 296.1v3M504.6 322.2h3M506.1 320.7v3M497.8 282.5h3M499.3 281.0v3" stroke="#eeee76"/>
<path d="M355.2 294.4h3M356.7 292.9v3M503.3 311.1h3M504.8 309.6v3M500.6 296.8h3M502.1 295.3v3" stroke="#edee76"/>
<path d="M353.7 291.2h3M355.2 289.7v3M506.1 325.4h3M507.6 323.9v3M499.3 285.7h3M500.8 284.2v3" stroke="#ecee76"/>
<path d="M352.2 288.0h3M353.7 286.5v3M502.1 300.0h3M503.6 298.5v3" stroke="#ebef77"/>
<path d="M337.3 256.0h3M338.8 254.5v3M515.7 320.9h3M517.2 319.4v3" stroke="#d2f47d"/>
<path d="M398.7 379.4h3M400.2 377.9v3M387.0 345.9h3M388.5 344.4v3M369.5 291.7h3M371.0 290.2v3M362.2 267.7h3M363.7 266.2v3M471.1 334.0h3M472.6 332.5v3M468.3 319.7h3M469.8 318.2v3M464.3 294.2h3M465.8 292.7v3M461.5 279.9h3M463.0 278.4v3M454.7 240.2h3M456.2 238.7v3M451.9 225.9h3M453.4 224.4v3" stroke="#ffb66f"/>
<path d="M397.2 376.2h3M398.7 374.7v3M385.5 342.7h3M387.0 341.2v3M375.2 312.4h3M376.7 310.9v3M474.1 340.4h3M475.6 338.9v3M471.3 326.1h3M472.8 324.6v3M464.5 286.3h3M466.0 284.8v3M461.7 272.0h3M463.2 270.5v3M457.7 246.6h3M459.2 245.1v3M454.9 232.3h3M456.4 230.8v3M452.1 218.0h3M453.6 216.5v3" stroke="#ffb96f"/>
<path d="M395.7 373.0h3M397.2 371.5v3M384.0 339.5h3M385.5 338.0v3M373.7 309.2h3M375.2 307.7v3M475.6 343.6h3M477.1 342.1v3M472.8 329.3h3M474.3 327.8v3M468.8 303.9h3M470.3 302.4v3M466.0 289.6h3M467.5 288.1v3M459.2 249.8h3M460.7 248.3v3M456.4 235.5h3M457.9 234.0v3M452.3 210.1h3M453.8 208.6v3" stroke="#ffbb6f"/>
<path d="M394.2 369.8h3M395.7 368.3v3M363.5 278.8h3M365.0 277.3v3M475.8 335.7h3M477.3 334.2v3M469.0 296.0h3M470.5 294.5v3M466.2 281.7h3M467.7 280.2v3M459.4 241.9h3M460.9 240.4v3M456.6 227.6h3M458.1 226.1v3M452.6 202.2h3M454.1 200.7v3" stroke="#ffbe6f"/>
<path d="M392.7 366.6h3M394.2 365.1v3M362.0 275.6h3M363.5 274.1v3M477.3 338.9h3M478.8 337.4v3M473.2 313.5h3M474.7 312.0v3M470.5 299.2h3M472.0 297.7v3M463.6 259.4h3M465.1 257.9v3M460.9 245.1h3M462.4 243.6v3M456.8 219.7h3M458.3 218.2v3M454.1 205.4h3M455.6 203.9v3" stroke="#ffc06f"/>
<path d="M391.2 363.4h3M392.7 361.9v3M477.5 331.0h3M479.0 329.5v3M474.7 316.7h3M476.2 315.2v3M472.0 302.4h3M473.5 300.9v3M467.9 277.0h3M469.4 275.5v3M465.1 262.6h3M466.6 261.1v3M458.3 222.9h3M459.8 221.4v3M455.5 208.6h3M457.0 207.1v3" stroke="#ffc26f"/>
<path d="M389.7 360.2h3M391.2 358.7v3M376.5 323.5h3M378.0 322.0v3M366.3 293.2h3M367.8 291.7v3M357.5 266.0h3M359.0 264.5v3M477.7 323.1h3M479.2 321.6v3M474.9 308.8h3M476.4 307.3v3M468.1 269.1h3M469.6 267.6v3M465.4 254.8h3M466.9 253.3v3M458.5 215.0h3M460.0 213.5v3M455.8 200.7h3M457.3 199.2v3" stroke="#ffc56f"/>
<path d="M388.3 357.0h3M389.8 355.5v3M375.0 320.3h3M376.5 318.8v3M364.8 289.9h3M366.3 288.4v3M356.0 262.8h3M357.5 261.3v3M356.3 254.9h3M357.8 253.4v3M476.4 312.0h3M477.9 310.5v3M469.6 272.3h3M471.1 270.8v3M460.0 218.2h3M461.5 216.7v3" stroke="#ffc76f"/>
<path d="M386.8 353.8h3M388.3 352.3v3M373.5 317.1h3M375.0 315.6v3M480.7 329.5h3M482.2 328.0v3M476.7 304.1h3M478.2 302.6v3M473.9 289.8h3M475.4 288.3v3M471.1 275.5h3M472.6 274.0v3M467.1 250.1h3M468.6 248.6v3M464.3 235.7h3M465.8 234.2v3" stroke="#ffc970"/>
<path d="M385.3 350.6h3M386.8 349.1v3M478.1 307.3h3M479.6 305.8v3M475.4 293.0h3M476.9 291.5v3M471.3 267.6h3M472.8 266.1v3M468.6 253.3h3M470.1 251.8v3M465.8 239.0h3M467.3 237.5v3M461.7 213.5h3M463.2 212.0v3M459.0 199.2h3M460.5 197.7v3" stroke="#ffcb70"/>
<path d="M383.8 347.4h3M385.3 345.9v3M358.8 277.1h3M360.3 275.6v3M353.3 248.5h3M354.8 247.0v3M482.4 324.8h3M483.9 323.3v3M479.6 310.5h3M481.1 309.0v3M472.8 270.8h3M474.3 269.3v3M470.0 256.5h3M471.5 255.0v3M466.0 231.1h3M467.5 229.6v3M463.2 216.7h3M464.7 215.2v3M460.5 202.4h3M462.0 200.9v3" stroke="#ffcd70"/>
<path d="M382.3 344.2h3M383.8 342.7v3M369.1 307.5h3M370.6 306.0v3M485.2 339.1h3M486.7 337.6v3M481.1 313.7h3M482.6 312.2v3M478.4 299.4h3M479.9 297.9v3M475.6 285.1h3M477.1 283.6v3M471.5 259.7h3M473.0 258.2v3M468.8 245.4h3M470.3 243.9v3M462.0 205.6h3M463.5 204.1v3" stroke="#ffce70"/>
<path d="M380.8 341.0h3M382.3 339.5v3M355.8 270.7h3M357.3 269.2v3M482.6 316.9h3M484.1 315.4v3M479.9 302.6h3M481.4 301.1v3M475.8 277.2h3M477.3 275.7v3M473.0 262.9h3M474.5 261.4v3M470.3 248.6h3M471.8 247.1v3M466.2 223.2h3M467.7 221.7v3M463.4 208.8h3M464.9 207.3v3" stroke="#ffd070"/>
<path d="M379.3 337.8h3M380.8 336.3v3M364.6 297.8h3M366.1 296.3v3M354.3 267.5h3M355.8 266.0v3M486.9 334.4h3M488.4 332.9v3M484.1 320.1h3M485.6 318.6v3M480.1 294.7h3M481.6 293.2v3M477.3 280.4h3M478.8 278.9v3M470.5 240.7h3M472.0 239.2v3M467.7 226.4h3M469.2 224.9v3" stroke="#fed270"/>
<path d="M377.8 334.6h3M379.3 333.1v3M363.1 294.6h3M364.6 293.1v3M351.3 261.1h3M352.8 259.6v3M487.1 326.5h3M488.6 325.0v3M484.3 312.2h3M485.8 310.7v3M481.6 297.9h3M483.1 296.4v3M477.5 272.5h3M479.0 271.0v3M474.7 258.2h3M476.2 256.7v3M472.0 243.9h3M473.5 242.4v3M467.9 218.5h3M469.4 217.0v3" stroke="#fed471"/>
<path d="M371.8 321.8h3M373.3 320.3v3M357.1 281.8h3M358.6 280.3v3M350.1 250.0h3M351.6 248.5v3M491.6 336.1h3M493.1 334.6v3M487.5 310.7h3M489.0 309.2v3M484.8 296.4h3M486.3 294.9v3M482.0 282.1h3M483.5 280.6v3M477.9 256.7h3M479.4 255.2v3M475.2 242.4h3M476.7 240.9v3M472.4 228.1h3M473.9 226.6v3" stroke="#fcd971"/>
<path d="M370.3 318.6h3M371.8 317.1v3M355.6 278.6h3M357.1 277.1v3M486.3 299.6h3M487.8 298.1v3M479.4 259.9h3M480.9 258.4v3" stroke="#fcdb72"/>
<path d="M362.9 302.5h3M364.4 301.0v3M495.0 326.7h3M496.5 325.2v3M488.2 287.0h3M489.7 285.5v3M485.4 272.7h3M486.9 271.2v3" stroke="#fae172"/>
<path d="M358.4 292.9h3M359.9 291.4v3M493.9 307.7h3M495.4 306.2v3" stroke="#f8e473"/>
<path d="M353.9 283.3h3M355.4 281.8v3M496.9 314.1h3M498.4 312.6v3M494.2 299.8h3M495.7 298.3v3M487.3 260.1h3M488.8 258.6v3" stroke="#f8e773"/>
<path d="M401.9 377.9h3M403.4 376.4v3M375.9 288.7h3M377.4 287.2v3M368.9 256.9h3M370.4 255.4v3M459.6 351.0h3M461.1 349.5v3M456.8 336.7h3M458.3 335.2v3M452.7 311.3h3M454.2 309.8v3M450.0 297.0h3M451.5 295.5v3M443.1 257.3h3M444.6 255.8v3M440.4 243.0h3M441.9 241.5v3M436.3 217.6h3M437.8 216.1v3" stroke="#fd9b6d"/>
<path d="M400.4 374.7h3M401.9 373.2v3M368.6 264.8h3M370.1 263.3v3M459.8 343.1h3M461.3 341.6v3M457.0 328.8h3M458.5 327.3v3M453.0 303.4h3M454.5 301.9v3M450.2 289.1h3M451.7 287.6v3M443.4 249.4h3M444.9 247.9v3M440.6 235.1h3M442.1 233.6v3" stroke="#fd9e6d"/>
<path d="M398.9 371.5h3M400.4 370.0v3M377.2 299.8h3M378.7 298.3v3M371.4 279.1h3M372.9 277.6v3M367.1 261.6h3M368.6 260.1v3M460.0 335.2h3M461.5 333.7v3M457.2 320.9h3M458.7 319.4v3M453.2 295.5h3M454.7 294.0v3M450.4 281.2h3M451.9 279.7v3M443.6 241.5h3M445.1 240.0v3M440.8 227.2h3M442.3 225.7v3" stroke="#fea16d"/>
<path d="M397.4 368.3h3M398.9 366.8v3M388.7 341.2h3M390.2 339.7v3M381.4 317.3h3M382.9 315.8v3M369.9 275.9h3M371.4 274.4v3M460.2 327.3h3M461.7 325.8v3M457.4 313.0h3M458.9 311.5v3M453.4 287.6h3M454.9 286.1v3M450.6 273.3h3M452.1 271.8v3M443.8 233.6h3M445.3 232.1v3M441.0 219.3h3M442.5 217.8v3" stroke="#fea46e"/>
<path d="M395.9 365.1h3M397.4 363.6v3M387.2 338.0h3M388.7 336.5v3M379.9 314.1h3M381.4 312.6v3M460.4 319.4h3M461.9 317.9v3M457.7 305.1h3M459.2 303.6v3M453.6 279.7h3M455.1 278.2v3M450.8 265.4h3M452.3 263.9v3M448.1 251.1h3M449.6 249.6v3M444.0 225.7h3M445.5 224.2v3M441.2 211.4h3M442.7 209.9v3" stroke="#fea76e"/>
<path d="M394.4 361.9h3M395.9 360.4v3M385.7 334.8h3M387.2 333.3v3M378.4 310.9h3M379.9 309.4v3M464.7 336.9h3M466.2 335.4v3M461.9 322.6h3M463.4 321.1v3M455.1 282.9h3M456.6 281.4v3M452.3 268.6h3M453.8 267.1v3M445.5 228.9h3M447.0 227.4v3M442.7 214.6h3M444.2 213.1v3" stroke="#ffa96e"/>
<path d="M392.9 358.7h3M394.4 357.2v3M384.2 331.6h3M385.7 330.1v3M369.7 283.8h3M371.2 282.3v3M363.9 263.0h3M365.4 261.5v3M464.9 329.0h3M466.4 327.5v3M462.1 314.7h3M463.6 313.2v3M455.3 275.0h3M456.8 273.5v3M452.5 260.7h3M454.0 259.2v3M445.7 221.0h3M447.2 219.5v3M443.0 206.7h3M444.5 205.2v3" stroke="#ffac6e"/>
<path d="M391.5 355.5h3M393.0 354.0v3M469.2 346.6h3M470.7 345.1v3M465.1 321.1h3M466.6 319.6v3M462.3 306.8h3M463.8 305.3v3M455.5 267.1h3M457.0 265.6v3M452.8 252.8h3M454.3 251.3v3M448.7 227.4h3M450.2 225.9v3M445.9 213.1h3M447.4 211.6v3" stroke="#ffaf6e"/>
<path d="M390.0 352.3h3M391.5 350.8v3M361.2 248.7h3M362.7 247.2v3M469.4 338.7h3M470.9 337.2v3M466.6 324.4h3M468.1 322.9v3M463.8 310.0h3M465.3 308.5v3M459.8 284.6h3M461.3 283.1v3M457.0 270.3h3M458.5 268.8v3M450.2 230.6h3M451.7 229.1v3M447.4 216.3h3M448.9 214.8v3" stroke="#ffb16e"/>
<path d="M388.5 349.1h3M390.0 347.6v3M371.0 294.9h3M372.5 293.4v3M359.7 245.5h3M361.2 244.0v3M469.6 330.8h3M471.1 329.3v3M466.8 316.5h3M468.3 315.0v3M460.0 276.7h3M461.5 275.2v3M457.2 262.4h3M458.7 260.9v3M453.2 237.0h3M454.7 235.5v3M450.4 222.7h3M451.9 221.2v3M447.6 208.4h3M449.1 206.9v3" stroke="#ffb46e"/>
<path d="M382.5 336.3h3M384.0 334.8v3M372.3 306.0h3M373.8 304.5v3M358.0 250.2h3M359.5 248.7v3M473.0 321.4h3M474.5 319.9v3M470.2 307.1h3M471.7 305.6v3M467.5 292.8h3M469.0 291.3v3M463.4 267.3h3M464.9 265.8v3M460.7 253.0h3M462.2 251.5v3M453.8 213.3h3M455.3 211.8v3" stroke="#ffbd6f"/>
<path d="M381.0 333.1h3M382.5 331.6v3M370.8 302.8h3M372.3 301.3v3M474.5 324.6h3M476.0 323.1v3M471.7 310.3h3M473.2 308.8v3M467.7 284.9h3M469.2 283.4v3M464.9 270.5h3M466.4 269.0v3M462.2 256.2h3M463.7 254.7v3M458.1 230.8h3M459.6 229.3v3M455.3 216.5h3M456.8 215.0v3" stroke="#ffbf6f"/>
<path d="M379.5 329.9h3M381.0 328.4v3M369.3 299.6h3M370.8 298.1v3M360.5 272.4h3M362.0 270.9v3M356.5 247.0h3M358.0 245.5v3M478.8 342.1h3M480.3 340.6v3M476.0 327.8h3M477.5 326.3v3M469.2 288.1h3M470.7 286.6v3M466.4 273.8h3M467.9 272.3v3M462.4 248.3h3M463.9 246.8v3M459.6 234.0h3M461.1 232.5v3" stroke="#ffc16f"/>
<path d="M378.0 326.7h3M379.5 325.2v3M367.8 296.4h3M369.3 294.9v3M359.0 269.2h3M360.5 267.7v3M473.5 305.6h3M475.0 304.1v3M470.7 291.3h3M472.2 289.8v3M463.9 251.5h3M465.4 250.0v3M461.1 237.2h3M462.6 235.7v3M457.0 211.8h3M458.5 210.3v3" stroke="#ffc36f"/>
<path d="M372.0 313.9h3M373.5 312.4v3M361.8 283.5h3M363.3 282.0v3M354.8 251.7h3M356.3 250.2v3M482.2 332.7h3M483.7 331.2v3M479.4 318.4h3M480.9 316.9v3M472.6 278.7h3M474.1 277.2v3M469.8 264.4h3M471.3 262.9v3M463.0 224.6h3M464.5 223.1v3M460.2 210.3h3M461.7 208.8v3" stroke="#ffca70"/>
<path d="M370.5 310.7h3M372.0 309.2v3M360.3 280.3h3M361.8 278.8v3M483.7 335.9h3M485.2 334.4v3M480.9 321.6h3M482.4 320.1v3M476.9 296.2h3M478.4 294.7v3M474.1 281.9h3M475.6 280.4v3M467.3 242.2h3M468.8 240.7v3M464.5 227.8h3M466.0 226.3v3" stroke="#ffcc70"/>
<path d="M367.6 304.3h3M369.1 302.8v3M357.3 273.9h3M358.8 272.4v3M483.9 328.0h3M485.4 326.5v3M477.1 288.3h3M478.6 286.8v3M474.3 274.0h3M475.8 272.5v3M467.5 234.3h3M469.0 232.8v3M464.7 220.0h3M466.2 218.5v3" stroke="#ffcf70"/>
<path d="M366.1 301.0h3M367.6 299.5v3M485.4 331.2h3M486.9 329.7v3M481.4 305.8h3M482.9 304.3v3M478.6 291.5h3M480.1 290.0v3M474.5 266.1h3M476.0 264.6v3M471.8 251.8h3M473.3 250.3v3M469.0 237.5h3M470.5 236.0v3M464.9 212.1h3M466.4 210.6v3" stroke="#ffd170"/>
<path d="M351.1 269.0h3M352.6 267.5v3M494.8 334.6h3M496.3 333.1v3M488.0 294.9h3M489.5 293.4v3M485.2 280.6h3M486.7 279.1v3M478.4 240.9h3M479.9 239.4v3" stroke="#fade72"/>
<path d="M346.6 259.4h3M348.1 257.9v3M491.0 301.3h3M492.5 299.8v3M481.4 247.3h3M482.9 245.8v3" stroke="#f9e172"/>
<path d="M405.1 376.4h3M406.6 374.9v3M399.4 355.7h3M400.9 354.2v3M389.3 317.5h3M390.8 316.0v3M385.1 300.0h3M386.6 298.5v3M380.8 282.5h3M382.3 281.0v3M445.7 338.0h3M447.2 336.5v3M442.9 323.7h3M444.4 322.2v3M436.1 284.0h3M437.6 282.5v3M426.5 230.0h3M428.0 228.5v3" stroke="#f8826d"/>
<path d="M403.6 373.2h3M405.1 371.7v3M373.8 250.7h3M375.3 249.2v3M443.1 315.8h3M444.6 314.3v3M433.5 261.8h3M435.0 260.3v3" stroke="#fa866d"/>
<path d="M402.1 370.0h3M403.6 368.5v3M390.6 328.6h3M392.1 327.1v3M373.5 258.6h3M375.0 257.1v3M372.3 247.5h3M373.8 246.0v3M450.2 347.6h3M451.7 346.1v3M447.4 333.3h3M448.9 331.8v3M440.6 293.6h3M442.1 292.1v3M437.8 279.3h3M439.3 277.8v3M431.0 239.6h3M432.5 238.1v3" stroke="#fb8a6c"/>
<path d="M400.6 366.8h3M402.1 365.3v3M389.1 325.4h3M390.6 323.9v3M370.8 244.3h3M372.3 242.8v3M450.4 339.7h3M451.9 338.2v3M447.6 325.4h3M449.1 323.9v3M440.8 285.7h3M442.3 284.2v3M438.0 271.4h3M439.5 269.9v3M431.2 231.7h3M432.7 230.2v3M428.4 217.4h3M429.9 215.9v3" stroke="#fb8d6c"/>
<path d="M399.1 363.6h3M400.6 362.1v3M381.9 301.5h3M383.4 300.0v3M453.4 346.1h3M454.9 344.6v3M446.6 306.4h3M448.1 304.9v3M443.8 292.1h3M445.3 290.6v3M437.0 252.4h3M438.5 250.9v3M434.2 238.1h3M435.7 236.6v3M430.1 212.7h3M431.6 211.2v3" stroke="#fc916c"/>
<path d="M397.6 360.4h3M399.1 358.9v3M456.4 352.5h3M457.9 351.0v3M453.6 338.2h3M455.1 336.7v3M450.8 323.9h3M452.3 322.4v3M446.8 298.5h3M448.3 297.0v3M444.0 284.2h3M445.5 282.7v3M437.2 244.5h3M438.7 243.0v3M434.4 230.2h3M435.9 228.7v3" stroke="#fc946d"/>
<path d="M396.2 357.2h3M397.7 355.7v3M451.0 316.0h3M452.5 314.5v3M434.6 222.3h3M436.1 220.8v3" stroke="#fc976d"/>
<path d="M394.7 354.0h3M396.2 352.5v3M387.4 330.1h3M388.9 328.6v3M381.6 309.4h3M383.1 307.9v3M371.6 271.2h3M373.1 269.7v3M454.0 322.4h3M455.5 320.9v3M451.2 308.1h3M452.7 306.6v3M447.2 282.7h3M448.7 281.2v3M444.4 268.4h3M445.9 266.9v3M437.6 228.7h3M439.1 227.2v3M434.8 214.4h3M436.3 212.9v3" stroke="#fd9a6d"/>
<path d="M393.2 350.8h3M394.7 349.3v3M380.2 306.2h3M381.7 304.7v3M370.1 268.0h3M371.6 266.5v3M366.1 242.6h3M367.6 241.1v3M458.3 339.9h3M459.8 338.4v3M455.5 325.6h3M457.0 324.1v3M448.7 285.9h3M450.2 284.4v3M445.9 271.6h3M447.4 270.1v3M441.9 246.2h3M443.4 244.7v3M439.1 231.9h3M440.6 230.4v3" stroke="#fd9c6d"/>
<path d="M391.7 347.6h3M393.2 346.1v3M378.7 303.0h3M380.2 301.5v3M372.9 282.3h3M374.4 280.8v3M367.4 253.7h3M368.9 252.2v3M455.7 317.7h3M457.2 316.2v3M448.9 278.0h3M450.4 276.5v3M446.1 263.7h3M447.6 262.2v3M439.3 224.0h3M440.8 222.5v3M436.5 209.7h3M438.0 208.2v3" stroke="#fd9f6d"/>
<path d="M390.2 344.4h3M391.7 342.9v3M382.9 320.5h3M384.4 319.0v3M365.9 250.5h3M367.4 249.0v3M462.8 349.5h3M464.3 348.0v3M458.7 324.1h3M460.2 322.6v3M455.9 309.8h3M457.4 308.3v3M449.1 270.1h3M450.6 268.6v3M446.4 255.8h3M447.9 254.3v3M439.5 216.1h3M441.0 214.6v3" stroke="#fea26d"/>
<path d="M382.7 328.4h3M384.2 326.9v3M368.2 280.6h3M369.7 279.1v3M362.4 259.8h3M363.9 258.3v3M362.7 251.9h3M364.2 250.4v3M466.4 332.3h3M467.9 330.8v3M463.6 317.9h3M465.1 316.4v3M459.6 292.5h3M461.1 291.0v3M456.8 278.2h3M458.3 276.7v3M450.0 238.5h3M451.5 237.0v3M447.2 224.2h3M448.7 222.7v3" stroke="#ffae6e"/>
<path d="M381.2 325.2h3M382.7 323.7v3M374.0 301.3h3M375.5 299.8v3M366.7 277.4h3M368.2 275.9v3M467.9 335.5h3M469.4 334.0v3M461.1 295.7h3M462.6 294.2v3M458.3 281.4h3M459.8 279.9v3M454.3 256.0h3M455.8 254.5v3M451.5 241.7h3M453.0 240.2v3" stroke="#ffb06e"/>
<path d="M379.7 322.0h3M381.2 320.5v3M470.9 341.9h3M472.4 340.4v3M468.1 327.6h3M469.6 326.1v3M464.1 302.1h3M465.6 300.6v3M461.3 287.8h3M462.8 286.3v3M454.5 248.1h3M456.0 246.6v3M451.7 233.8h3M453.2 232.3v3" stroke="#ffb36e"/>
<path d="M378.2 318.8h3M379.7 317.3v3M465.6 305.3h3M467.1 303.8v3M458.7 265.6h3M460.2 264.1v3M449.1 211.6h3M450.6 210.1v3" stroke="#ffb56f"/>
<path d="M376.7 315.6h3M378.2 314.1v3M361.0 256.6h3M362.5 255.1v3M469.8 322.9h3M471.3 321.4v3M467.0 308.6h3M468.5 307.1v3M460.2 268.8h3M461.7 267.3v3M457.5 254.5h3M459.0 253.0v3M453.4 229.1h3M454.9 227.6v3M450.6 214.8h3M452.1 213.3v3" stroke="#ffb76f"/>
<path d="M363.3 286.7h3M364.8 285.2v3M354.5 259.6h3M356.0 258.1v3M477.9 315.2h3M479.4 313.7v3M475.2 300.9h3M476.7 299.4v3M468.3 261.2h3M469.8 259.7v3M465.6 246.9h3M467.1 245.4v3M461.5 221.4h3M463.0 219.9v3M458.7 207.1h3M460.2 205.6v3" stroke="#ffc870"/>
<path d="M352.8 264.3h3M354.3 262.8v3M353.1 256.4h3M354.6 254.9v3M488.4 337.6h3M489.9 336.1v3M485.6 323.3h3M487.1 321.8v3M482.8 309.0h3M484.3 307.5v3M478.8 283.6h3M480.3 282.1v3M476.0 269.3h3M477.5 267.8v3M473.3 255.0h3M474.8 253.5v3M469.2 229.6h3M470.7 228.1v3M466.4 215.3h3M467.9 213.8v3" stroke="#fed370"/>
<path d="M349.9 257.9h3M351.4 256.4v3M351.6 253.2h3M353.1 251.7v3M488.6 329.7h3M490.1 328.2v3M485.8 315.4h3M487.3 313.9v3M481.8 290.0h3M483.3 288.5v3M479.0 275.7h3M480.5 274.2v3M475.0 250.3h3M476.5 248.8v3M472.2 236.0h3M473.7 234.5v3M469.4 221.7h3M470.9 220.2v3" stroke="#fdd671"/>
<path d="M408.3 374.9h3M409.8 373.4v3M432.2 309.2h3M433.7 307.7v3" stroke="#ef6971"/>
<path d="M406.8 371.7h3M408.3 370.2v3M378.7 244.5h3M380.2 243.0v3M442.1 355.3h3M443.6 353.8v3M432.5 301.3h3M434.0 299.8v3M422.9 247.3h3M424.4 245.8v3" stroke="#f16e71"/>
<path d="M405.3 368.5h3M406.8 367.0v3M388.3 298.5h3M389.8 297.0v3M377.2 241.3h3M378.7 239.8v3M439.5 333.1h3M441.0 331.6v3M436.7 318.8h3M438.2 317.3v3M429.9 279.1h3M431.4 277.6v3M420.3 225.1h3M421.8 223.6v3" stroke="#f27270"/>
<path d="M403.8 365.3h3M405.3 363.8v3M386.8 295.3h3M388.3 293.8v3M379.7 263.5h3M381.2 262.0v3M375.7 238.1h3M377.2 236.6v3M443.8 350.6h3M445.3 349.1v3M436.9 310.9h3M438.4 309.4v3M434.2 296.6h3M435.7 295.1v3M427.4 256.9h3M428.9 255.4v3" stroke="#f4766f"/>
<path d="M402.3 362.1h3M403.8 360.6v3M381.0 274.6h3M382.5 273.1v3M441.2 328.4h3M442.7 326.9v3M434.4 288.7h3M435.9 287.2v3M431.6 274.4h3M433.1 272.9v3M424.8 234.7h3M426.3 233.2v3" stroke="#f57a6f"/>
<path d="M400.8 358.9h3M402.3 357.4v3M438.7 306.2h3M440.2 304.7v3M431.8 266.5h3M433.3 265.0v3M429.1 252.2h3M430.6 250.7v3" stroke="#f77e6e"/>
<path d="M397.9 352.5h3M399.4 351.0v3M379.3 279.3h3M380.8 277.8v3M450.0 355.5h3M451.5 354.0v3M440.4 301.5h3M441.9 300.0v3" stroke="#f9866d"/>
<path d="M396.4 349.3h3M397.9 347.8v3M444.6 319.0h3M446.1 317.5v3M435.0 265.0h3M436.5 263.5v3M428.2 225.3h3M429.7 223.8v3" stroke="#fb896c"/>
<path d="M394.9 346.1h3M396.4 344.6v3M451.7 350.8h3M453.2 349.3v3M448.9 336.5h3M450.4 335.0v3M444.8 311.1h3M446.3 309.6v3M442.1 296.8h3M443.6 295.3v3M439.3 282.5h3M440.8 281.0v3M435.2 257.1h3M436.7 255.6v3M432.5 242.8h3M434.0 241.3v3" stroke="#fb8c6c"/>
<path d="M393.4 342.9h3M394.9 341.4v3M451.9 342.9h3M453.4 341.4v3M449.1 328.6h3M450.6 327.1v3M442.3 288.9h3M443.8 287.4v3M439.5 274.6h3M441.0 273.1v3M435.5 249.2h3M437.0 247.7v3M432.7 234.9h3M434.2 233.4v3" stroke="#fc8f6c"/>
<path d="M391.9 339.7h3M393.4 338.2v3M386.1 319.0h3M387.6 317.5v3M452.1 335.0h3M453.6 333.5v3M449.3 320.7h3M450.8 319.2v3M442.5 281.0h3M444.0 279.5v3M439.7 266.7h3M441.2 265.2v3M435.7 241.3h3M437.2 239.8v3M432.9 227.0h3M434.4 225.5v3" stroke="#fc926c"/>
<path d="M390.4 336.5h3M391.9 335.0v3M384.6 315.8h3M386.1 314.3v3M374.6 277.6h3M376.1 276.1v3M370.3 260.1h3M371.8 258.6v3M452.3 327.1h3M453.8 325.6v3M449.5 312.8h3M451.0 311.3v3M442.7 273.1h3M444.2 271.6v3M439.9 258.8h3M441.4 257.3v3M435.9 233.4h3M437.4 231.9v3M433.1 219.1h3M434.6 217.6v3" stroke="#fc956d"/>
<path d="M388.9 333.3h3M390.4 331.8v3M377.4 291.9h3M378.9 290.4v3M456.6 344.6h3M458.1 343.1v3M452.5 319.2h3M454.0 317.7v3M449.8 304.9h3M451.3 303.4v3M442.9 265.2h3M444.4 263.7v3M440.2 250.9h3M441.7 249.4v3M436.1 225.5h3M437.6 224.0v3M433.3 211.2h3M434.8 209.7v3" stroke="#fd986d"/>
<path d="M385.9 326.9h3M387.4 325.4v3M374.4 285.5h3M375.9 284.0v3M454.2 314.5h3M455.7 313.0v3M451.5 300.2h3M453.0 298.7v3M447.4 274.8h3M448.9 273.3v3M444.6 260.5h3M446.1 259.0v3M437.8 220.8h3M439.3 219.3v3" stroke="#fd9d6d"/>
<path d="M384.4 323.7h3M385.9 322.2v3M458.5 332.0h3M460.0 330.5v3M442.1 238.3h3M443.6 236.8v3" stroke="#fe9f6d"/>
<path d="M377.0 307.7h3M378.5 306.2v3M466.2 340.1h3M467.7 338.6v3M463.4 325.8h3M464.9 324.3v3M459.4 300.4h3M460.9 298.9v3M456.6 286.1h3M458.1 284.6v3M453.8 271.8h3M455.3 270.3v3M449.8 246.4h3M451.3 244.9v3M447.0 232.1h3M448.5 230.6v3" stroke="#ffab6e"/>
<path d="M375.5 304.5h3M377.0 303.0v3M467.7 343.4h3M469.2 341.9v3M460.9 303.6h3M462.4 302.1v3M458.1 289.3h3M459.6 287.8v3M454.0 263.9h3M455.5 262.4v3M444.4 209.9h3M445.9 208.4v3" stroke="#ffad6e"/>
<path d="M372.5 298.1h3M374.0 296.6v3M365.2 274.1h3M366.7 272.6v3M465.3 313.2h3M466.8 311.7v3M462.6 298.9h3M464.1 297.4v3M458.5 273.5h3M460.0 272.0v3M455.7 259.2h3M457.2 257.7v3M453.0 244.9h3M454.5 243.4v3M448.9 219.5h3M450.4 218.0v3M446.2 205.2h3M447.7 203.7v3" stroke="#ffb26e"/>
<path d="M368.0 288.5h3M369.5 287.0v3M360.7 264.5h3M362.2 263.0v3M472.6 337.2h3M474.1 335.7v3M468.5 311.8h3M470.0 310.3v3M465.8 297.4h3M467.3 295.9v3M463.0 283.1h3M464.5 281.6v3M458.9 257.7h3M460.4 256.2v3M456.2 243.4h3M457.7 241.9v3M449.4 203.7h3M450.9 202.2v3" stroke="#ffb86f"/>
<path d="M366.5 285.3h3M368.0 283.8v3M359.5 253.4h3M361.0 251.9v3M470.0 315.0h3M471.5 313.5v3M467.3 300.7h3M468.8 299.2v3M463.2 275.2h3M464.7 273.7v3M460.4 260.9h3M461.9 259.4v3M453.6 221.2h3M455.1 219.7v3M450.8 206.9h3M452.3 205.4v3" stroke="#ffba6f"/>
<path d="M365.0 282.0h3M366.5 280.5v3M357.8 258.1h3M359.3 256.6v3M474.3 332.5h3M475.8 331.0v3M471.5 318.2h3M473.0 316.7v3M464.7 278.4h3M466.2 276.9v3M461.9 264.1h3M463.4 262.6v3M457.9 238.7h3M459.4 237.2v3M455.1 224.4h3M456.6 222.9v3" stroke="#ffbc6f"/>
<path d="M411.5 373.4h3M413.0 371.9v3M431.4 340.8h3M432.9 339.3v3M385.1 241.5h3M386.6 240.0v3M415.0 247.0h3M416.5 245.5v3" stroke="#e04c67"/>
<path d="M410.0 370.2h3M411.5 368.7v3M393.2 292.3h3M394.7 290.8v3M390.4 278.0h3M391.9 276.5v3M387.6 263.7h3M389.1 262.2v3M435.6 358.3h3M437.1 356.8v3M428.8 318.6h3M430.3 317.1v3M419.2 264.6h3M420.7 263.1v3" stroke="#e3526a"/>
<path d="M408.5 367.0h3M410.0 365.5v3M394.5 303.4h3M396.0 301.9v3M433.1 336.1h3M434.6 334.6v3M423.5 282.1h3M425.0 280.6v3" stroke="#e6586c"/>
<path d="M407.0 363.8h3M408.5 362.3v3M427.8 299.6h3M429.3 298.1v3" stroke="#e95e6f"/>
<path d="M405.5 360.6h3M407.0 359.1v3M401.3 343.1h3M402.8 341.6v3M394.2 311.3h3M395.7 309.8v3M380.4 239.8h3M381.9 238.3v3M425.2 277.4h3M426.7 275.9v3M415.6 223.4h3M417.1 221.9v3" stroke="#ed6471"/>
<path d="M404.0 357.4h3M405.5 355.9v3M392.7 308.1h3M394.2 306.6v3M382.9 262.0h3M384.4 260.5v3M378.9 236.6h3M380.4 235.1v3M436.3 334.6h3M437.8 333.1v3M429.5 294.9h3M431.0 293.4v3M426.7 280.6h3M428.2 279.1v3M419.9 240.9h3M421.4 239.4v3" stroke="#ef6872"/>
<path d="M402.6 354.2h3M404.1 352.7v3M384.2 273.1h3M385.7 271.6v3M381.4 258.8h3M382.9 257.3v3M433.7 312.4h3M435.2 310.9v3M426.9 272.7h3M428.4 271.2v3M424.1 258.4h3M425.6 256.9v3M417.3 218.7h3M418.8 217.2v3" stroke="#f06c71"/>
<path d="M401.1 351.0h3M402.6 349.5v3M396.8 333.5h3M398.3 332.0v3M440.8 344.2h3M442.3 342.7v3M431.2 290.2h3M432.7 288.7v3M421.6 236.2h3M423.1 234.7v3" stroke="#f27070"/>
<path d="M399.6 347.8h3M401.1 346.3v3M395.3 330.3h3M396.8 328.8v3M391.0 312.8h3M392.5 311.3v3M384.0 281.0h3M385.5 279.5v3M438.2 322.0h3M439.7 320.5v3M435.4 307.7h3M436.9 306.2v3M428.6 268.0h3M430.1 266.5v3" stroke="#f37470"/>
<path d="M398.1 344.6h3M399.6 343.1v3M435.7 299.8h3M437.2 298.3v3M426.1 245.8h3M427.6 244.3v3" stroke="#f5786f"/>
<path d="M396.6 341.4h3M398.1 339.9v3M383.8 288.9h3M385.3 287.4v3M376.8 257.1h3M378.3 255.6v3M375.5 246.0h3M377.0 244.5v3M439.9 317.3h3M441.4 315.8v3M433.1 277.6h3M434.6 276.1v3M430.3 263.3h3M431.8 261.8v3M423.5 223.6h3M425.0 222.1v3" stroke="#f67c6e"/>
<path d="M395.1 338.2h3M396.6 336.7v3M374.0 242.8h3M375.5 241.3v3M447.0 349.1h3M448.5 347.6v3M437.4 295.1h3M438.9 293.6v3M427.8 241.1h3M429.3 239.6v3" stroke="#f7806e"/>
<path d="M393.6 335.0h3M395.1 333.5v3M432.0 258.6h3M433.5 257.1v3" stroke="#f9836d"/>
<path d="M392.1 331.8h3M393.6 330.3v3M375.0 261.8h3M376.5 260.3v3M426.7 222.1h3M428.2 220.6v3" stroke="#fa876d"/>
<path d="M387.6 322.2h3M389.1 320.7v3M377.6 284.0h3M379.1 282.5v3M373.3 266.5h3M374.8 265.0v3M372.1 255.4h3M373.6 253.9v3M369.3 241.1h3M370.8 239.6v3M447.8 317.5h3M449.3 316.0v3M445.1 303.2h3M446.6 301.7v3M441.0 277.8h3M442.5 276.3v3M438.2 263.5h3M439.7 262.0v3M431.4 223.8h3M432.9 222.3v3" stroke="#fc906c"/>
<path d="M383.1 312.6h3M384.6 311.1v3M373.1 274.4h3M374.6 272.9v3M453.8 330.3h3M455.3 328.8v3M447.0 290.6h3M448.5 289.1v3M444.2 276.3h3M445.7 274.8v3M437.4 236.6h3M438.9 235.1v3" stroke="#fd976d"/>
<path d="M375.7 296.6h3M377.2 295.1v3M365.6 258.4h3M367.1 256.9v3M461.5 338.4h3M463.0 336.9v3M454.7 298.7h3M456.2 297.2v3M451.9 284.4h3M453.4 282.9v3M447.8 259.0h3M449.3 257.5v3M445.1 244.7h3M446.6 243.2v3M442.3 230.4h3M443.8 228.9v3" stroke="#fea36d"/>
<path d="M374.2 293.4h3M375.7 291.9v3M368.4 272.7h3M369.9 271.2v3M464.5 344.8h3M466.0 343.3v3M461.7 330.5h3M463.2 329.0v3M454.9 290.8h3M456.4 289.3v3M452.1 276.5h3M453.6 275.0v3M445.3 236.8h3M446.8 235.3v3M442.5 222.5h3M444.0 221.0v3" stroke="#fea66e"/>
<path d="M372.7 290.2h3M374.2 288.7v3M366.9 269.5h3M368.4 268.0v3M362.9 244.0h3M364.4 242.5v3M466.0 348.0h3M467.5 346.5v3M459.1 308.3h3M460.6 306.8v3M456.4 294.0h3M457.9 292.5v3M449.6 254.3h3M451.1 252.8v3M446.8 240.0h3M448.3 238.5v3" stroke="#ffa86e"/>
<path d="M371.2 287.0h3M372.7 285.5v3M365.4 266.2h3M366.9 264.7v3M364.2 255.1h3M365.7 253.6v3M460.6 311.5h3M462.1 310.0v3M457.9 297.2h3M459.4 295.7v3M451.0 257.5h3M452.5 256.0v3M448.3 243.2h3M449.8 241.7v3M444.2 217.8h3M445.7 216.3v3" stroke="#ffaa6e"/>
<path d="M363.7 270.9h3M365.2 269.4v3M472.4 345.1h3M473.9 343.6v3M462.8 291.0h3M464.3 289.5v3M456.0 251.3h3M457.5 249.8v3" stroke="#ffb56e"/>
<path d="M414.7 371.9h3M416.2 370.4v3M430.7 364.5h3M432.2 363.0v3M398.1 286.1h3M399.6 284.6v3M395.3 271.8h3M396.8 270.3v3M392.6 257.5h3M394.1 256.0v3M421.1 310.5h3M422.6 309.0v3M388.5 232.1h3M390.0 230.6v3M414.3 270.7h3M415.8 269.2v3" stroke="#d5375e"/>
<path d="M413.2 368.7h3M414.7 367.2v3M429.5 353.4h3M431.0 351.9v3M393.8 268.6h3M395.3 267.1v3M419.9 299.4h3M421.4 297.9v3" stroke="#d5395f"/>
<path d="M411.7 365.5h3M413.2 364.0v3M431.0 356.6h3M432.5 355.1v3M389.6 251.1h3M391.1 249.6v3M414.5 262.8h3M416.0 261.3v3" stroke="#d73c61"/>
<path d="M410.2 362.3h3M411.7 360.8v3M409.2 226.3h3M410.7 224.8v3" stroke="#da4263"/>
<path d="M408.7 359.1h3M410.2 357.6v3M396.2 298.7h3M397.7 297.2v3M393.4 284.4h3M394.9 282.9v3M390.6 270.1h3M392.1 268.6v3M432.7 351.9h3M434.2 350.4v3M423.1 297.9h3M424.6 296.4v3" stroke="#de4866"/>
<path d="M407.3 355.9h3M408.8 354.4v3M397.4 309.8h3M398.9 308.3v3M427.3 315.4h3M428.8 313.9v3M410.9 221.6h3M412.4 220.1v3" stroke="#e14e68"/>
<path d="M405.8 352.7h3M407.3 351.2v3M398.7 320.9h3M400.2 319.4v3M384.9 249.4h3M386.4 247.9v3M424.8 293.2h3M426.3 291.7v3M415.2 239.2h3M416.7 237.7v3" stroke="#e4546b"/>
<path d="M404.3 349.5h3M405.8 348.0v3M383.4 246.2h3M384.9 244.7v3M435.9 350.4h3M437.4 348.9v3M426.3 296.4h3M427.8 294.9v3M416.7 242.4h3M418.2 240.9v3" stroke="#e7596d"/>
<path d="M402.8 346.3h3M404.3 344.8v3M395.7 314.5h3M397.2 313.0v3M381.9 243.0h3M383.4 241.5v3M430.5 313.9h3M432.0 312.4v3M414.1 220.1h3M415.6 218.6v3" stroke="#ea5f6f"/>
<path d="M399.8 339.9h3M401.3 338.4v3M385.7 276.3h3M387.2 274.8v3M439.1 348.9h3M440.6 347.4v3M422.7 255.2h3M424.2 253.7v3" stroke="#ef6972"/>
<path d="M398.3 336.7h3M399.8 335.2v3M436.5 326.7h3M438.0 325.2v3" stroke="#f06d71"/>
<path d="M393.8 327.1h3M395.3 325.6v3M389.5 309.6h3M391.0 308.1v3M442.5 339.5h3M444.0 338.0v3M432.9 285.5h3M434.4 284.0v3" stroke="#f4786f"/>
<path d="M392.3 323.9h3M393.8 322.4v3M388.1 306.4h3M389.6 304.9v3M446.7 357.0h3M448.2 355.5v3M437.2 303.0h3M438.7 301.5v3" stroke="#f67b6e"/>
<path d="M390.8 320.7h3M392.3 319.2v3M386.6 303.2h3M388.1 301.7v3M382.3 285.7h3M383.8 284.2v3M444.2 334.8h3M445.7 333.3v3M441.4 320.5h3M442.9 319.0v3M434.6 280.8h3M436.1 279.3v3M425.0 226.8h3M426.5 225.3v3" stroke="#f77f6e"/>
<path d="M387.8 314.3h3M389.3 312.8v3M383.6 296.8h3M385.1 295.3v3M447.2 341.2h3M448.7 339.7v3M437.6 287.2h3M439.1 285.7v3M430.8 247.5h3M432.3 246.0v3M428.0 233.2h3M429.5 231.7v3" stroke="#f9856d"/>
<path d="M386.3 311.1h3M387.8 309.6v3M377.8 276.1h3M379.3 274.6v3" stroke="#fa896c"/>
<path d="M384.8 307.9h3M386.3 306.4v3M380.6 290.4h3M382.1 288.9v3M376.3 272.9h3M377.8 271.4v3M446.1 322.2h3M447.6 320.7v3M443.3 307.9h3M444.8 306.4v3M436.5 268.2h3M438.0 266.7v3M433.8 253.9h3M435.3 252.4v3M429.7 228.5h3M431.2 227.0v3M426.9 214.2h3M428.4 212.7v3" stroke="#fb8b6c"/>
<path d="M383.4 304.7h3M384.9 303.2v3M379.1 287.2h3M380.6 285.7v3M374.8 269.7h3M376.3 268.2v3M453.2 354.0h3M454.7 352.5v3M446.3 314.3h3M447.8 312.8v3M443.6 300.0h3M445.1 298.5v3M436.7 260.3h3M438.2 258.8v3M434.0 246.0h3M435.5 244.5v3" stroke="#fb8e6c"/>
<path d="M380.4 298.3h3M381.9 296.8v3M376.1 280.8h3M377.6 279.3v3M371.8 263.3h3M373.3 261.8v3M370.6 252.2h3M372.1 250.7v3M454.9 349.3h3M456.4 347.8v3M448.0 309.6h3M449.5 308.1v3M445.3 295.3h3M446.8 293.8v3M441.2 269.9h3M442.7 268.4v3M438.5 255.6h3M440.0 254.1v3M431.6 215.9h3M433.1 214.4v3" stroke="#fc936d"/>
<path d="M378.9 295.1h3M380.4 293.6v3M369.1 249.0h3M370.6 247.5v3M455.1 341.4h3M456.6 339.9v3M445.5 287.4h3M447.0 285.9v3M441.4 262.0h3M442.9 260.5v3M438.7 247.7h3M440.2 246.2v3" stroke="#fc966d"/>
<path d="M417.9 370.5h3M419.4 369.0v3M415.2 356.1h3M416.7 354.6v3M427.5 366.0h3M429.0 364.5v3M408.3 316.4h3M409.8 314.9v3M405.6 302.1h3M407.1 300.6v3M420.7 326.3h3M422.2 324.8v3M402.8 287.8h3M404.3 286.3v3M413.9 286.5h3M415.4 285.0v3M396.0 248.1h3M397.5 246.6v3M411.1 272.2h3M412.6 270.7v3M393.2 233.8h3M394.7 232.3v3M404.3 232.5h3M405.8 231.0v3" stroke="#d12f58"/>
<path d="M416.4 367.2h3M417.9 365.7v3M413.7 352.9h3M415.2 351.4v3M410.9 338.6h3M412.4 337.1v3M422.2 329.5h3M423.7 328.0v3M398.5 270.3h3M400.0 268.8v3M412.6 275.4h3M414.1 273.9v3" stroke="#d2315a"/>
<path d="M414.9 364.0h3M416.4 362.5v3M412.2 349.7h3M413.7 348.2v3M409.4 335.4h3M410.9 333.9v3M406.6 321.1h3M408.1 319.6v3M427.7 358.1h3M429.2 356.6v3M403.9 306.8h3M405.4 305.3v3M420.9 318.4h3M422.4 316.9v3M397.0 267.1h3M398.5 265.6v3M394.3 252.8h3M395.8 251.3v3M414.1 278.6h3M415.6 277.1v3M411.3 264.3h3M412.8 262.8v3M404.5 224.6h3M406.0 223.1v3" stroke="#d3335b"/>
<path d="M413.4 360.8h3M414.9 359.3v3M410.7 346.5h3M412.2 345.0v3M407.9 332.2h3M409.4 330.7v3M405.1 317.9h3M406.6 316.4v3M429.2 361.3h3M430.7 359.8v3M402.4 303.6h3M403.9 302.1v3M419.6 307.3h3M421.1 305.8v3M392.8 249.6h3M394.3 248.1v3M412.8 267.5h3M414.3 266.0v3" stroke="#d4355c"/>
<path d="M411.9 357.6h3M413.4 356.1v3M400.9 300.4h3M402.4 298.9v3M411.6 256.4h3M413.1 254.9v3" stroke="#d4375e"/>
<path d="M410.5 354.4h3M412.0 352.9v3M407.7 340.1h3M409.2 338.6v3M404.9 325.8h3M406.4 324.3v3M402.1 311.5h3M403.6 310.0v3M399.4 297.2h3M400.9 295.7v3M396.6 282.9h3M398.1 281.4v3M426.7 339.1h3M428.2 337.6v3M389.8 243.2h3M391.3 241.7v3M417.1 285.1h3M418.6 283.6v3M410.3 245.3h3M411.8 243.8v3" stroke="#d5385f"/>
<path d="M409.0 351.2h3M410.5 349.7v3M428.2 342.3h3M429.7 340.8v3" stroke="#d63b60"/>
<path d="M407.5 348.0h3M409.0 346.5v3M422.9 305.8h3M424.4 304.3v3" stroke="#d94063"/>
<path d="M406.0 344.8h3M407.5 343.3v3M386.6 244.7h3M388.1 243.2v3M427.1 323.3h3M428.6 321.8v3M410.7 229.5h3M412.2 228.0v3" stroke="#dd4665"/>
<path d="M404.5 341.6h3M406.0 340.1v3" stroke="#e04b67"/>
<path d="M403.0 338.4h3M404.5 336.9v3M426.1 304.3h3M427.6 302.8v3" stroke="#e35169"/>
<path d="M401.5 335.2h3M403.0 333.7v3M437.1 361.5h3M438.6 360.0v3" stroke="#e5566c"/>
<path d="M400.0 332.0h3M401.5 330.5v3M415.4 231.3h3M416.9 229.8v3" stroke="#e85c6e"/>
<path d="M398.5 328.8h3M400.0 327.3v3M388.7 282.7h3M390.2 281.2v3M436.1 342.5h3M437.6 341.0v3M426.5 288.5h3M428.0 287.0v3" stroke="#eb6170"/>
<path d="M397.0 325.6h3M398.5 324.1v3M437.6 345.7h3M439.1 344.2v3M430.8 306.0h3M432.3 304.5v3M421.2 252.0h3M422.7 250.5v3" stroke="#ee6672"/>
<path d="M395.5 322.4h3M397.0 320.9v3M388.5 290.6h3M390.0 289.1v3M435.0 323.5h3M436.5 322.0v3M425.4 269.5h3M426.9 268.0v3" stroke="#ef6a71"/>
<path d="M394.0 319.2h3M395.5 317.7v3M387.0 287.4h3M388.5 285.9v3M439.3 341.0h3M440.8 339.5v3M429.7 287.0h3M431.2 285.5v3M420.1 233.0h3M421.6 231.5v3" stroke="#f16d71"/>
<path d="M392.5 316.0h3M394.0 314.5v3M385.5 284.2h3M387.0 282.7v3M380.0 255.6h3M381.5 254.1v3M443.5 358.5h3M445.0 357.0v3M434.0 304.5h3M435.5 303.0v3M427.1 264.8h3M428.6 263.3v3M424.4 250.5h3M425.9 249.0v3" stroke="#f27170"/>
<path d="M382.1 293.6h3M383.6 292.1v3M448.7 344.4h3M450.2 342.9v3M441.9 304.7h3M443.4 303.2v3M439.1 290.4h3M440.6 288.9v3M432.3 250.7h3M433.8 249.2v3" stroke="#fa886c"/>
<path d="M421.1 369.0h3M422.6 367.5v3M411.5 314.9h3M413.0 313.4v3M409.4 276.9h3M410.9 275.4v3M401.9 260.9h3M403.4 259.4v3" stroke="#ce2953"/>
<path d="M419.6 365.8h3M421.1 364.3v3M400.4 257.7h3M401.9 256.2v3M408.1 265.8h3M409.6 264.3v3" stroke="#cf2a55"/>
<path d="M418.1 362.6h3M419.6 361.1v3M415.4 348.2h3M416.9 346.7v3M426.0 362.8h3M427.5 361.3v3M423.3 348.5h3M424.8 347.0v3M408.5 308.5h3M410.0 307.0v3M405.8 294.2h3M407.3 292.7v3M416.4 308.8h3M417.9 307.3v3M399.0 254.5h3M400.5 253.0v3M396.2 240.2h3M397.7 238.7v3M406.9 254.7h3M408.4 253.2v3" stroke="#d02c56"/>
<path d="M416.6 359.3h3M418.1 357.8v3M404.3 291.0h3M405.8 289.5v3M415.2 297.6h3M416.7 296.1v3M394.7 237.0h3M396.2 235.5v3M405.6 243.6h3M407.1 242.1v3" stroke="#d02e57"/>
<path d="M409.2 343.3h3M410.7 341.8v3M406.4 329.0h3M407.9 327.5v3M428.0 350.2h3M429.5 348.7v3M425.2 335.9h3M426.7 334.4v3M396.8 275.0h3M398.3 273.5v3M394.0 260.7h3M395.5 259.2v3M391.3 246.4h3M392.8 244.9v3M418.4 296.2h3M419.9 294.7v3M415.6 281.8h3M417.1 280.3v3M408.8 242.1h3M410.3 240.6v3" stroke="#d4365d"/>
<path d="M406.2 336.9h3M407.7 335.4v3M403.4 322.6h3M404.9 321.1v3M400.6 308.3h3M402.1 306.8v3M397.9 294.0h3M399.4 292.5v3M395.1 279.7h3M396.6 278.2v3M392.3 265.4h3M393.8 263.9v3M425.4 328.0h3M426.9 326.5v3M388.3 240.0h3M389.8 238.5v3M415.8 274.0h3M417.3 272.5v3M409.0 234.2h3M410.5 232.7v3" stroke="#d63a60"/>
<path d="M404.7 333.7h3M406.2 332.2v3M393.6 276.5h3M395.1 275.0v3M429.7 345.5h3M431.2 344.0v3M390.8 262.2h3M392.3 260.7v3M420.1 291.5h3M421.6 290.0v3" stroke="#d93f62"/>
<path d="M403.2 330.5h3M404.7 329.0v3M424.3 309.0h3M425.8 307.5v3" stroke="#dc4564"/>
<path d="M401.7 327.3h3M403.2 325.8v3M387.9 255.8h3M389.4 254.3v3M419.0 272.5h3M420.5 271.0v3" stroke="#df4a67"/>
<path d="M400.2 324.1h3M401.7 322.6v3M386.4 252.6h3M387.9 251.1v3M430.1 329.7h3M431.6 328.2v3" stroke="#e24f69"/>
<path d="M397.2 317.7h3M398.7 316.2v3M419.5 256.7h3M421.0 255.2v3" stroke="#e75a6d"/>
<path d="M391.3 304.9h3M392.8 303.4v3M380.2 247.7h3M381.7 246.2v3M440.6 352.1h3M442.1 350.6v3M437.8 337.8h3M439.3 336.3v3M431.0 298.1h3M432.5 296.6v3M421.4 244.1h3M422.9 242.6v3" stroke="#f06b71"/>
<path d="M389.8 301.7h3M391.3 300.2v3M435.2 315.6h3M436.7 314.1v3M425.6 261.6h3M427.1 260.1v3" stroke="#f16f71"/>
<path d="M385.3 292.1h3M386.8 290.6v3M378.2 260.3h3M379.7 258.8v3M377.0 249.2h3M378.5 247.7v3M445.3 353.8h3M446.8 352.3v3M438.4 314.1h3M439.9 312.6v3M428.8 260.1h3M430.3 258.6v3M422.0 220.4h3M423.5 218.9v3" stroke="#f5796f"/>
<path d="M364.4 247.2h3M365.9 245.7v3M463.0 341.6h3M464.5 340.1v3M458.9 316.2h3M460.4 314.7v3M456.2 301.9h3M457.7 300.4v3M449.3 262.2h3M450.8 260.7v3M446.6 247.9h3M448.1 246.4v3M439.7 208.2h3M441.2 206.7v3" stroke="#fea56e"/>
<path d="M424.3 367.5h3M425.8 366.0v3M418.6 346.8h3M420.1 345.3v3M409.0 292.7h3M410.5 291.2v3M407.9 273.7h3M409.4 272.2v3M399.4 238.7h3M400.9 237.2v3" stroke="#cd2652"/>
<path d="M422.8 364.3h3M424.3 362.8v3M416.0 324.5h3M417.5 323.0v3M413.2 310.2h3M414.7 308.7v3M406.4 270.5h3M407.9 269.0v3M403.7 256.2h3M405.2 254.7v3" stroke="#cc2450"/>
<path d="M421.3 361.1h3M422.8 359.6v3M421.6 353.2h3M423.1 351.7v3M414.7 313.4h3M416.2 311.9v3M411.8 307.0h3M413.3 305.5v3M404.9 267.3h3M406.4 265.8v3M405.1 259.4h3M406.6 257.9v3M402.2 253.0h3M403.7 251.5v3" stroke="#cd2651"/>
<path d="M419.8 357.9h3M421.3 356.4v3M420.3 342.1h3M421.8 340.6v3M415.8 332.4h3M417.3 330.9v3M417.5 327.8h3M419.0 326.3v3M413.0 318.1h3M414.5 316.6v3M410.7 288.0h3M412.2 286.5v3M406.2 278.4h3M407.7 276.9v3M403.4 264.1h3M404.9 262.6v3M401.1 234.0h3M402.6 232.5v3" stroke="#cd2752"/>
<path d="M418.4 354.7h3M419.9 353.2v3M415.6 340.3h3M417.1 338.8v3M421.8 345.3h3M423.3 343.8v3M419.0 331.0h3M420.5 329.5v3M408.8 300.6h3M410.3 299.1v3M406.0 286.3h3M407.5 284.8v3M412.2 291.2h3M413.7 289.7v3M399.2 246.6h3M400.7 245.1v3M402.6 237.2h3M404.1 235.7v3" stroke="#ce2954"/>
<path d="M416.9 351.5h3M418.4 350.0v3M414.1 337.1h3M415.6 335.6v3M411.3 322.8h3M412.8 321.3v3M420.5 334.2h3M422.0 332.7v3M417.7 319.9h3M419.2 318.4v3M407.3 297.4h3M408.8 295.9v3M404.5 283.1h3M406.0 281.6v3M401.7 268.8h3M403.2 267.3v3M410.9 280.1h3M412.4 278.6v3M397.7 243.4h3M399.2 241.9v3M394.9 229.1h3M396.4 227.6v3M404.1 240.4h3M405.6 238.9v3M401.3 226.1h3M402.8 224.6v3" stroke="#cf2b55"/>
<path d="M413.9 345.0h3M415.4 343.5v3M411.1 330.7h3M412.6 329.2v3M424.8 351.7h3M426.3 350.2v3M401.5 276.7h3M403.0 275.2v3M408.3 257.9h3M409.8 256.4v3" stroke="#d12e57"/>
<path d="M412.4 341.8h3M413.9 340.3v3M409.6 327.5h3M411.1 326.0v3M416.7 300.9h3M418.2 299.4v3M397.2 259.2h3M398.7 257.7v3M407.1 246.8h3M408.6 245.3v3" stroke="#d13059"/>
<path d="M401.9 319.4h3M403.4 317.9v3M410.5 237.4h3M412.0 235.9v3" stroke="#d83f62"/>
<path d="M400.4 316.2h3M401.9 314.7v3M392.1 273.3h3M393.6 271.8v3M431.2 348.7h3M432.7 347.2v3M389.3 259.0h3M390.8 257.5v3M421.6 294.7h3M423.1 293.2v3" stroke="#db4464"/>
<path d="M398.9 313.0h3M400.4 311.5v3M425.8 312.2h3M427.3 310.7v3M416.2 258.2h3M417.7 256.7v3" stroke="#de4966"/>
<path d="M396.0 306.6h3M397.5 305.1v3M422.0 278.9h3M423.5 277.4v3M412.4 224.8h3M413.9 223.3v3" stroke="#e4536a"/>
<path d="M393.0 300.2h3M394.5 298.7v3M434.6 339.3h3M436.1 337.8v3M418.2 245.6h3M419.7 244.1v3" stroke="#e95d6e"/>
<path d="M391.5 297.0h3M393.0 295.5v3M383.2 254.1h3M384.7 252.6v3M429.3 302.8h3M430.8 301.3v3M419.7 248.8h3M421.2 247.3v3" stroke="#ec6270"/>
<path d="M390.0 293.8h3M391.5 292.3v3M381.7 250.9h3M383.2 249.4v3M440.3 360.0h3M441.8 358.5v3M433.5 320.3h3M435.0 318.8v3M423.9 266.3h3M425.4 264.8v3" stroke="#ee6772"/>
<path d="M382.5 277.8h3M384.0 276.3v3M439.7 325.2h3M441.2 323.7v3M430.1 271.2h3M431.6 269.7v3M423.3 231.5h3M424.8 230.0v3M420.5 217.2h3M422.0 215.7v3" stroke="#f4776f"/>
<path d="M379.5 271.4h3M381.0 269.9v3" stroke="#f67e6e"/>
<path d="M378.0 268.2h3M379.5 266.7v3M440.1 309.4h3M441.6 307.9v3M430.6 255.4h3M432.1 253.9v3" stroke="#f8816e"/>
<path d="M376.5 265.0h3M378.0 263.5v3M372.5 239.6h3M374.0 238.1v3M444.4 326.9h3M445.9 325.4v3M441.6 312.6h3M443.1 311.1v3M434.8 272.9h3M436.3 271.4v3M425.2 218.9h3M426.7 217.4v3" stroke="#f9846d"/>
<path d="M367.6 245.8h3M369.1 244.3v3M458.1 347.8h3M459.6 346.3v3M455.3 333.5h3M456.8 332.0v3M448.5 293.8h3M450.0 292.3v3M445.7 279.5h3M447.2 278.0v3M441.7 254.1h3M443.2 252.6v3M438.9 239.8h3M440.4 238.3v3" stroke="#fd996d"/>
<path d="M424.5 359.6h3M426.0 358.1v3M412.8 326.0h3M414.3 324.5v3M410.0 311.7h3M411.5 310.2v3M415.0 305.5h3M416.5 304.0v3M403.2 272.0h3M404.7 270.5v3M405.4 251.5h3M406.9 250.0v3M396.4 232.3h3M397.9 230.8v3" stroke="#cf2a54"/>
<path d="M420.1 350.0h3M421.6 348.5v3M410.5 295.9h3M412.0 294.4v3M399.6 230.8h3M401.1 229.3v3" stroke="#cc2550"/>
<path d="M417.1 343.6h3M418.6 342.1v3M414.3 329.2h3M415.8 327.7v3M416.2 316.7h3M417.7 315.2v3M413.5 302.3h3M415.0 300.8v3M407.5 289.5h3M409.0 288.0v3M404.7 275.2h3M406.2 273.7v3M406.6 262.6h3M408.1 261.1v3M400.7 249.8h3M402.2 248.3v3M397.9 235.5h3M399.4 234.0v3" stroke="#ce2853"/>
<path d="M412.6 333.9h3M414.1 332.4v3M419.2 323.1h3M420.7 321.6v3M403.0 279.9h3M404.5 278.4v3M400.2 265.6h3M401.7 264.1v3M409.6 269.0h3M411.1 267.5v3" stroke="#d02d56"/>
<path d="M408.1 324.3h3M409.6 322.8v3M405.3 310.0h3M406.8 308.5v3M425.0 343.8h3M426.5 342.3v3M402.6 295.7h3M404.1 294.2v3M395.8 256.0h3M397.3 254.5v3M415.4 289.7h3M416.9 288.2v3M393.0 241.7h3M394.5 240.2v3M408.6 250.0h3M410.1 248.5v3M405.8 235.7h3M407.3 234.2v3" stroke="#d2325a"/>
<path d="M403.6 314.7h3M405.1 313.2v3" stroke="#d4375d"/>
<path d="M399.2 305.1h3M400.7 303.6v3M396.4 290.8h3M397.9 289.3v3M426.9 331.2h3M428.4 329.7v3M417.3 277.2h3M418.8 275.7v3" stroke="#d83e62"/>
<path d="M397.7 301.9h3M399.2 300.4v3M394.9 287.6h3M396.4 286.1v3M428.4 334.4h3M429.9 332.9v3M385.3 233.6h3M386.8 232.1v3M412.0 240.6h3M413.5 239.1v3" stroke="#db4364"/>
<path d="M394.7 295.5h3M396.2 294.0v3M417.7 261.4h3M419.2 259.9v3" stroke="#e14d68"/>
<path d="M391.7 289.1h3M393.2 287.6v3M388.9 274.8h3M390.4 273.3v3M386.1 260.5h3M387.6 259.0v3M430.3 321.8h3M431.8 320.3v3M420.7 267.8h3M422.2 266.3v3M413.9 228.0h3M415.4 226.5v3" stroke="#e6576c"/>
<path d="M390.2 285.9h3M391.7 284.4v3M425.0 285.3h3M426.5 283.8v3" stroke="#e95c6e"/>
<path d="M387.2 279.5h3M388.7 278.0v3M428.0 291.7h3M429.5 290.2v3" stroke="#ee6572"/>
<path d="M382.7 269.9h3M384.2 268.4v3M438.0 329.9h3M439.5 328.4v3" stroke="#f17070"/>
<path d="M381.2 266.7h3M382.7 265.2v3M442.3 347.4h3M443.8 345.9v3M432.7 293.4h3M434.2 291.9v3M425.9 253.7h3M427.4 252.2v3M423.1 239.4h3M424.6 237.9v3" stroke="#f37370"/>
<path d="M375.3 253.9h3M376.8 252.4v3M448.5 352.3h3M450.0 350.8v3M438.9 298.3h3M440.4 296.8v3M429.3 244.3h3M430.8 242.8v3" stroke="#f8836d"/>
<path d="M426.3 354.9h3M427.8 353.4v3M406.8 313.2h3M408.3 311.7v3" stroke="#d23059"/>
<path d="M418.8 338.9h3M420.3 337.4v3M417.3 335.7h3M418.8 334.2v3M409.2 284.8h3M410.7 283.3v3M407.7 281.6h3M409.2 280.1v3M400.9 241.9h3M402.4 240.4v3" stroke="#cc2551"/>
<path d="M409.8 319.6h3M411.3 318.1v3M422.0 337.4h3M423.5 335.9v3M407.1 305.3h3M408.6 303.8v3M412.4 283.3h3M413.9 281.8v3M397.5 251.3h3M399.0 249.8v3M402.8 229.3h3M404.3 227.8v3" stroke="#d02d57"/>
<path d="M391.9 281.2h3M393.4 279.7v3M389.1 266.9h3M390.6 265.4v3M434.2 355.1h3M435.7 353.6v3M424.6 301.1h3M426.1 299.6v3" stroke="#e04d68"/>
<path d="M387.4 271.6h3M388.9 270.1v3M384.7 257.3h3M386.2 255.8v3M431.8 325.0h3M433.3 323.5v3M422.2 271.0h3M423.7 269.5v3" stroke="#e85b6e"/>
<path d="M385.9 268.4h3M387.4 266.9v3M433.3 328.2h3M434.8 326.7v3M416.9 234.5h3M418.4 233.0v3" stroke="#eb6070"/>
<path d="M384.4 265.2h3M385.9 263.7v3M434.8 331.4h3M436.3 329.9v3" stroke="#ed6571"/>
<path d="M378.5 252.4h3M380.0 250.9v3M431.4 282.3h3M432.9 280.8v3M421.8 228.3h3M423.3 226.8v3" stroke="#f37570"/>
<path d="M433.9 363.0h3M435.4 361.5v3" stroke="#dc4565"/>
<path d="M432.4 359.8h3M433.9 358.3v3M388.1 247.9h3M389.6 246.4v3M425.6 320.1h3M427.1 318.6v3M416.0 266.1h3M417.5 264.6v3" stroke="#da4163"/>
<path d="M426.5 347.0h3M428.0 345.5v3M398.3 278.2h3M399.8 276.7v3M395.5 263.9h3M397.0 262.4v3M416.9 293.0h3M418.4 291.5v3M410.1 253.2h3M411.6 251.7v3" stroke="#d3345c"/>
<path d="M423.5 340.6h3M425.0 339.1v3M400.0 273.5h3M401.5 272.0v3" stroke="#d13058"/>
<path d="M414.5 321.3h3M416.0 319.8v3M412.0 299.1h3M413.5 297.6v3M402.4 245.1h3M403.9 243.6v3M398.1 227.6h3M399.6 226.1v3" stroke="#cd2551"/>
<path d="M404.1 298.9h3M405.6 297.4v3M401.3 284.6h3M402.8 283.1v3M419.4 315.2h3M420.9 313.7v3M394.5 244.9h3M396.0 243.4v3M391.7 230.6h3M393.2 229.1v3M409.8 261.1h3M411.3 259.6v3" stroke="#d23159"/>
<path d="M401.1 292.5h3M402.6 291.0v3M423.7 332.7h3M425.2 331.2v3M391.5 238.5h3M393.0 237.0v3M407.3 238.9h3M408.8 237.4v3" stroke="#d3345b"/>
<path d="M399.6 289.3h3M401.1 287.8v3M422.4 321.6h3M423.9 320.1v3M390.0 235.3h3M391.5 233.8v3M406.0 227.8h3M407.5 226.3v3" stroke="#d4355d"/>
<path d="M410.3 303.8h3M411.8 302.3v3M403.9 248.3h3M405.4 246.8v3" stroke="#ce2752"/>
<path d="M399.8 281.4h3M401.3 279.9v3M418.2 304.1h3M419.7 302.6v3" stroke="#d3325a"/>
<path d="M438.8 356.8h3M440.3 355.3v3M422.4 263.1h3M423.9 261.6v3" stroke="#ec6371"/>
<path d="M437.4 353.6h3M438.9 352.1v3M420.9 259.9h3M422.4 258.4v3" stroke="#ea5e6f"/>
<path d="M434.4 347.2h3M435.9 345.7v3M418.0 253.5h3M419.5 252.0v3" stroke="#e5556b"/>
<path d="M432.9 344.0h3M434.4 342.5v3M423.3 290.0h3M424.8 288.5v3M413.7 235.9h3M415.2 234.4v3" stroke="#e25069"/>
<path d="M429.9 337.6h3M431.4 336.1v3M420.3 283.6h3M421.8 282.1v3" stroke="#dd4765"/>
<path d="M423.9 324.8h3M425.4 323.3v3M407.5 231.0h3M409.0 229.5v3" stroke="#d5385e"/>
<path d="M417.9 312.0h3M419.4 310.5v3M398.7 262.4h3M400.2 260.9v3" stroke="#d12e58"/>
<path d="M391.1 254.3h3M392.6 252.8v3M422.6 313.7h3M424.1 312.2v3M413.0 259.6h3M414.5 258.1v3" stroke="#d6395f"/>
<path d="M383.6 238.3h3M385.1 236.8v3M416.5 250.3h3M418.0 248.8v3" stroke="#e25169"/>
<path d="M382.1 235.1h3M383.6 233.6v3M427.5 307.5h3M429.0 306.0v3" stroke="#e5566b"/>
<path d="M431.6 332.9h3M433.1 331.4v3" stroke="#e4546a"/>
<path d="M428.6 326.5h3M430.1 325.0v3M421.8 286.8h3M423.3 285.3v3M412.2 232.7h3M413.7 231.2v3" stroke="#df4b67"/>
<path d="M424.1 316.9h3M425.6 315.4v3M407.7 223.1h3M409.2 221.6v3" stroke="#d83d61"/>
<path d="M413.7 294.4h3M415.2 292.9v3" stroke="#cf2c55"/>
<path d="M386.8 236.8h3M388.3 235.3v3" stroke="#d83e61"/>
<path d="M445.5 345.9h3M447.0 344.4v3M442.7 331.6h3M444.2 330.1v3M435.9 291.9h3M437.4 290.4v3M426.3 237.9h3M427.8 236.4v3" stroke="#f67d6e"/>
<path d="M444.0 342.7h3M445.5 341.2v3" stroke="#f57b6f"/>
<path d="M441.0 336.3h3M442.5 334.8v3" stroke="#f3756f"/>
<path d="M432.0 317.1h3M433.5 315.6v3" stroke="#ed6371"/>
<path d="M429.0 310.7h3M430.5 309.2v3" stroke="#e85a6d"/>
<path d="M418.8 280.4h3M420.3 278.9v3" stroke="#db4263"/>
<path d="M445.9 330.1h3M447.4 328.6v3M429.5 236.4h3M431.0 234.9v3" stroke="#fa876c"/>
<path d="M420.5 275.7h3M422.0 274.2v3" stroke="#e14f68"/>
<path d="M417.5 269.3h3M419.0 267.8v3" stroke="#dc4665"/>
<path d="M450.6 331.8h3M452.1 330.3v3M448.3 301.7h3M449.8 300.2v3" stroke="#f0e060"/>
<path d="M428.2 283.8h3M429.7 282.3v3M418.6 229.8h3M420.1 228.3v3" stroke="#f06a71"/>
<path d="M423.7 274.2h3M425.2 272.7v3" stroke="#eb606f"/>
<path d="M414.8 254.9h3M416.3 253.4v3" stroke="#dc4464"/>
<path d="M413.3 251.7h3M414.8 250.2v3" stroke="#d94062"/>
<path d="M411.8 248.5h3M413.3 247.0v3" stroke="#d73b61"/>
<path d="M461.3 346.3h3M462.8 344.8v3M454.4 306.6h3M455.9 305.1v3M451.7 292.3h3M453.2 290.8v3M447.6 266.9h3M449.1 265.4v3M444.9 252.6h3M446.4 251.1v3M438.0 212.9h3M439.5 211.4v3" stroke="#fea06d"/>
<path d="M428.4 275.9h3M429.9 274.4v3M418.8 221.9h3M420.3 220.4v3" stroke="#f16f70"/>
<path d="M413.5 243.8h3M415.0 242.3v3" stroke="#dd4866"/>
<path d="M463.2 333.7h3M464.7 332.2v3" stroke="#fea86e"/>
<path d="M433.3 269.7h3M434.8 268.2v3M423.7 215.7h3M425.2 214.2v3" stroke="#f8816d"/>
<path d="M418.4 237.7h3M419.9 236.2v3" stroke="#ed6572"/>
<path d="M427.6 249.0h3M429.1 247.5v3" stroke="#f67b6f"/>
<path d="M424.6 242.6h3M426.1 241.1v3" stroke="#f4756f"/>
<path d="M417.1 226.6h3M418.6 225.1v3" stroke="#ef6772"/>
<path d="M482.0 340.6h3M483.5 339.1v3M479.2 326.3h3M480.7 324.8v3M472.4 286.6h3M473.9 285.1v3M462.8 232.5h3M464.3 231.0v3" stroke="#ffc770"/>
<path d="M480.5 337.4h3M482.0 335.9v3M473.7 297.7h3M475.2 296.2v3M470.9 283.4h3M472.4 281.9v3M466.8 258.0h3M468.3 256.5v3M464.1 243.6h3M465.6 242.1v3M461.3 229.3h3M462.8 227.8v3M457.3 203.9h3M458.8 202.4v3" stroke="#ffc66f"/>
<path d="M479.0 334.2h3M480.5 332.7v3M476.2 319.9h3M477.7 318.4v3M472.2 294.5h3M473.7 293.0v3M469.4 280.2h3M470.9 278.7v3M466.6 265.9h3M468.1 264.4v3M462.6 240.4h3M464.1 238.9v3M459.8 226.1h3M461.3 224.6v3" stroke="#ffc46f"/>
<path d="M429.9 220.6h3M431.4 219.1v3" stroke="#fc8e6c"/>
<path d="M491.8 328.2h3M493.3 326.7v3M489.0 313.9h3M490.5 312.4v3M482.2 274.2h3M483.7 272.7v3M475.4 234.5h3M476.9 233.0v3" stroke="#fbdb72"/>
<path d="M492.0 320.3h3M493.5 318.8v3M482.4 266.3h3M483.9 264.8v3" stroke="#fbde72"/>
<path d="M483.3 293.2h3M484.8 291.7v3M473.7 239.2h3M475.2 237.7v3" stroke="#fdd871"/>
<path d="M498.9 301.5h3M500.4 300.0v3" stroke="#f4ed75"/>
<path d="M499.1 293.6h3M500.6 292.1v3" stroke="#f0ee76"/>
<path d="M490.1 274.4h3M491.6 272.9v3" stroke="#f7e773"/>
<path d="M470.7 232.8h3M472.2 231.3v3" stroke="#fed571"/>
<path d="M517.2 324.2h3M518.7 322.7v3" stroke="#cff47e"/>
<path d="M514.2 317.7h3M515.7 316.2v3" stroke="#d5f47c"/>
<path d="M502.3 292.1h3M503.8 290.6v3" stroke="#e7ef77"/>
</g>
<g fill="#fff"><circle cx="420.1" cy="288.3" r="1.9"/><circle cx="360.7" cy="261.3" r="1.9"/><circle cx="452.8" cy="249.6" r="1.9"/><circle cx="437.8" cy="276.1" r="1.9"/><circle cx="422.9" cy="302.6" r="1.9"/><circle cx="424.6" cy="356.4" r="1.9"/><circle cx="450.0" cy="235.3" r="1.9"/></g>
<circle cx="404.8" cy="256.5" r="1.6" fill="#1a1a1a"/>
<text x="402.1" y="127.9" font-size="6.7" fill="#222" text-anchor="start" textLength="161.5" lengthAdjust="spacingAndGlyphs" transform="rotate(0.1 402.1 127.9)">More than one slip surface shown, minimum factor of 1.285</text>
<text x="812.9" y="115.4" font-size="6.6" fill="#222" text-anchor="end" textLength="44.8" lengthAdjust="spacingAndGlyphs" transform="rotate(0.1 812.9 115.4)">Factors of Safety</text>
<rect x="768.1" y="125.00" width="16.8" height="13.95" fill="#0000cd"/>
<text x="812.9" y="134.7" font-size="6.6" fill="#222" text-anchor="end" textLength="22.0" lengthAdjust="spacingAndGlyphs" transform="rotate(0.1 812.9 134.7)">2.8 - 3.0</text>
<rect x="768.1" y="138.86" width="16.8" height="13.95" fill="#0a5ae1"/>
<text x="812.9" y="148.6" font-size="6.6" fill="#222" text-anchor="end" textLength="22.0" lengthAdjust="spacingAndGlyphs" transform="rotate(0.1 812.9 148.6)">2.6 - 2.8</text>
<rect x="768.1" y="152.72" width="16.8" height="13.95" fill="#1eaad7"/>
<text x="812.9" y="162.4" font-size="6.6" fill="#222" text-anchor="end" textLength="22.0" lengthAdjust="spacingAndGlyphs" transform="rotate(0.1 812.9 162.4)">2.4 - 2.6</text>
<rect x="768.1" y="166.58" width="16.8" height="13.95" fill="#78e6aa"/>
<text x="812.9" y="176.3" font-size="6.6" fill="#222" text-anchor="end" textLength="22.0" lengthAdjust="spacingAndGlyphs" transform="rotate(0.1 812.9 176.3)">2.2 - 2.4</text>
<rect x="768.1" y="180.44" width="16.8" height="13.95" fill="#d2fa64"/>
<text x="812.9" y="190.1" font-size="6.6" fill="#222" text-anchor="end" textLength="22.0" lengthAdjust="spacingAndGlyphs" transform="rotate(0.1 812.9 190.1)">2.0 - 2.2</text>
<rect x="768.1" y="194.30" width="16.8" height="13.95" fill="#fae150"/>
<text x="812.9" y="204.0" font-size="6.6" fill="#222" text-anchor="end" textLength="22.0" lengthAdjust="spacingAndGlyphs" transform="rotate(0.1 812.9 204.0)">1.8 - 2.0</text>
<rect x="768.1" y="208.16" width="16.8" height="13.95" fill="#ffaa46"/>
<text x="812.9" y="217.9" font-size="6.6" fill="#222" text-anchor="end" textLength="22.0" lengthAdjust="spacingAndGlyphs" transform="rotate(0.1 812.9 217.9)">1.6 - 1.8</text>
<rect x="768.1" y="222.02" width="16.8" height="13.95" fill="#ff6446"/>
<text x="812.9" y="231.7" font-size="6.6" fill="#222" text-anchor="end" textLength="22.0" lengthAdjust="spacingAndGlyphs" transform="rotate(0.1 812.9 231.7)">1.4 - 1.6</text>
<rect x="768.1" y="235.88" width="16.8" height="13.95" fill="#c81446"/>
<text x="812.9" y="245.6" font-size="6.6" fill="#222" text-anchor="end" textLength="10.6" lengthAdjust="spacingAndGlyphs" transform="rotate(0.1 812.9 245.6)">&lt;1.4</text>
<text x="812.3" y="259.9" font-size="6.6" fill="#222" text-anchor="end" textLength="17.2" lengthAdjust="spacingAndGlyphs" transform="rotate(0.1 812.3 259.9)">NOTE:</text>
<text x="812.9" y="269.1" font-size="6.6" fill="#222" text-anchor="end" textLength="43.0" lengthAdjust="spacingAndGlyphs" transform="rotate(0.1 812.9 269.1)">Plotted range is</text>
<text x="812.9" y="279.4" font-size="6.6" fill="#222" text-anchor="end" textLength="39.4" lengthAdjust="spacingAndGlyphs" transform="rotate(0.1 812.9 279.4)">min FoS to 3.0</text>
<rect x="100" y="620.8" width="723" height="2.4" fill="#f4f4f4"/>
</svg>
<div class="a" style="left:823.4px;top:72px;width:3.1px;height:552px;background:#4a4a4a"></div>
<div class="a" style="left:826px;top:72px;width:198px;height:552px;background:#e2e2e2"></div>
<div class="phead" style="left:826px;top:72px;width:198px"></div>
<svg class="a" style="left:827px;top:70px;overflow:visible" width="35" height="12"><text x="1.40" y="9.01" font-size="6.1" fill="#444" textLength="31.60" lengthAdjust="spacingAndGlyphs" transform="rotate(0.1 1.40 9.01)">Slip Surfaces</text></svg>
<svg class="a" style="left:1004px;top:72px" width="20" height="10" viewBox="1004 72 20 10"><path d="M1009 74.4h2v3h-2zM1008.2 77.4h3.6M1010 77.4v2" stroke="#555" stroke-width="0.55" fill="none"/><path d="M1016.6 74.8l3.4 3.6m0-3.6l-3.4 3.6" stroke="#555" stroke-width="0.65"/></svg>
<div class="a" style="left:826px;top:81.5px;width:198px;height:11.7px;background:#525252"></div>
<div class="a" style="left:867.4px;top:83px;width:36.4px;height:10.4px;background:#ececec;border-radius:1.5px 1.5px 0 0"></div>
<svg class="a" style="left:829px;top:82px;overflow:visible" width="35" height="12"><text x="1.50" y="8.11" font-size="6.1" fill="#fff" stroke="#fff" stroke-width="0.14" textLength="31.90" lengthAdjust="spacingAndGlyphs" transform="rotate(0.1 1.50 8.11)">Specification</text></svg>
<svg class="a" style="left:868px;top:82px;overflow:visible" width="35" height="12"><text x="1.90" y="8.11" font-size="6.1" fill="#1a1a1a" stroke="#333" stroke-width="0.14" textLength="31.30" lengthAdjust="spacingAndGlyphs" transform="rotate(0.1 1.90 8.11)">Slip Surfaces</text></svg>
<div class="a" style="left:828.4px;top:94.6px;width:196px;height:498px;background:#fff"></div>
<div class="a" style="left:828.6px;top:94.6px;width:196px;height:10.2px;background:linear-gradient(#f8f8f8,#ebebeb);border-bottom:0.6px solid #d4d4d4"></div>
<div class="a" style="left:925px;top:94.6px;width:0.6px;height:498px;background:#e8e8e8"></div>
<div class="pg">
<svg class="a" style="left:830px;top:94px;overflow:visible" width="22" height="12"><text x="1.00" y="8.42" font-size="6.4" fill="#333" stroke="#333" stroke-width="0.18" textLength="18.90" lengthAdjust="spacingAndGlyphs" transform="rotate(0.1 1.00 8.42)">Property</text></svg>
<svg class="a" style="left:926px;top:94px;overflow:visible" width="17" height="12"><text x="1.50" y="8.42" font-size="6.4" fill="#333" stroke="#333" stroke-width="0.18" textLength="13.50" lengthAdjust="spacingAndGlyphs" transform="rotate(0.1 1.50 8.42)">Value</text></svg>
<div class="grow" style="top:105.05px;left:829px;width:195px"></div>
<svg class="a" style="left:830.4px;top:106.35px" width="6" height="6" viewBox="0 0 6 6"><rect x="0.3" y="0.3" width="5" height="5" rx="0.8" fill="#e2e2e2" stroke="#c4c4c8" stroke-width="0.5"/><path d="M1.5 2.8h2.6" stroke="#5a6cb8" stroke-width="0.75"/></svg>
<svg class="a" style="left:837px;top:103px;overflow:visible" width="47" height="12"><text x="1.80" y="8.47" font-size="6.4" fill="#5c5c5c" stroke="#5c5c5c" stroke-width="0.23" textLength="43.30" lengthAdjust="spacingAndGlyphs" transform="rotate(0.1 1.80 8.47)">Circle centre(s)</text></svg>
<div class="a" style="left:829px;top:113.50px;width:8px;height:8.45px;background:#ececec"></div>
<svg class="a" style="left:837px;top:111px;overflow:visible" width="15" height="12"><text x="1.80" y="8.88" font-size="6.3" fill="#6c6c6c" textLength="11.70" lengthAdjust="spacingAndGlyphs" transform="rotate(0.1 1.80 8.88)">Type</text></svg>
<svg class="a" style="left:925px;top:111px;overflow:visible" width="13" height="12"><text x="1.80" y="8.88" font-size="6.3" fill="#6c6c6c" textLength="9.20" lengthAdjust="spacingAndGlyphs" transform="rotate(0.1 1.80 8.88)">Grid</text></svg>
<div class="line" style="top:121.80px"></div>
<div class="grow" style="top:121.95px;left:829px;width:195px"></div>
<svg class="a" style="left:839.0px;top:123.25px" width="6" height="6" viewBox="0 0 6 6"><rect x="0.3" y="0.3" width="5" height="5" rx="0.8" fill="#e2e2e2" stroke="#c4c4c8" stroke-width="0.5"/><path d="M1.5 2.8h2.6" stroke="#5a6cb8" stroke-width="0.75"/></svg>
<svg class="a" style="left:846px;top:120px;overflow:visible" width="37" height="12"><text x="1.50" y="8.37" font-size="6.4" fill="#5c5c5c" stroke="#5c5c5c" stroke-width="0.23" textLength="33.10" lengthAdjust="spacingAndGlyphs" transform="rotate(0.1 1.50 8.37)">Coordinates</text></svg>
<div class="a" style="left:829px;top:130.40px;width:17px;height:8.45px;background:#ececec"></div>
<svg class="a" style="left:846px;top:128px;overflow:visible" width="15" height="12"><text x="1.50" y="8.78" font-size="6.3" fill="#6c6c6c" textLength="11.30" lengthAdjust="spacingAndGlyphs" transform="rotate(0.1 1.50 8.78)">x [m]</text></svg>
<svg class="a" style="left:925px;top:128px;overflow:visible" width="17" height="12"><text x="1.80" y="8.78" font-size="6.3" fill="#6c6c6c" textLength="13.70" lengthAdjust="spacingAndGlyphs" transform="rotate(0.1 1.80 8.78)">76.20</text></svg>
<div class="line" style="top:138.70px"></div>
<div class="a" style="left:829px;top:138.85px;width:17px;height:8.45px;background:#ececec"></div>
<svg class="a" style="left:846px;top:137px;overflow:visible" width="15" height="12"><text x="1.50" y="8.23" font-size="6.3" fill="#6c6c6c" textLength="11.30" lengthAdjust="spacingAndGlyphs" transform="rotate(0.1 1.50 8.23)">y [m]</text></svg>
<svg class="a" style="left:925px;top:137px;overflow:visible" width="17" height="12"><text x="1.80" y="8.23" font-size="6.3" fill="#6c6c6c" textLength="13.70" lengthAdjust="spacingAndGlyphs" transform="rotate(0.1 1.80 8.23)">60.96</text></svg>
<div class="line" style="top:147.15px"></div>
<div class="a" style="left:829px;top:147.30px;width:8px;height:8.45px;background:#ececec"></div>
<svg class="a" style="left:837px;top:145px;overflow:visible" width="49" height="12"><text x="1.80" y="8.68" font-size="6.3" fill="#6c6c6c" textLength="45.40" lengthAdjust="spacingAndGlyphs" transform="rotate(0.1 1.80 8.68)">Angle of rotation [°]</text></svg>
<svg class="a" style="left:925px;top:145px;overflow:visible" width="17" height="12"><text x="1.80" y="8.68" font-size="6.3" fill="#6c6c6c" textLength="13.70" lengthAdjust="spacingAndGlyphs" transform="rotate(0.1 1.80 8.68)">25.00</text></svg>
<div class="line" style="top:155.60px"></div>
<div class="grow" style="top:155.75px;left:829px;width:195px"></div>
<svg class="a" style="left:839.0px;top:157.05px" width="6" height="6" viewBox="0 0 6 6"><rect x="0.3" y="0.3" width="5" height="5" rx="0.8" fill="#e2e2e2" stroke="#c4c4c8" stroke-width="0.5"/><path d="M1.5 2.8h2.6" stroke="#5a6cb8" stroke-width="0.75"/></svg>
<svg class="a" style="left:846px;top:153px;overflow:visible" width="46" height="12"><text x="1.50" y="9.17" font-size="6.4" fill="#5c5c5c" stroke="#5c5c5c" stroke-width="0.23" textLength="42.70" lengthAdjust="spacingAndGlyphs" transform="rotate(0.1 1.50 9.17)">Centres on grid</text></svg>
<div class="a" style="left:829px;top:164.20px;width:17px;height:8.45px;background:#ececec"></div>
<svg class="a" style="left:846px;top:162px;overflow:visible" width="41" height="12"><text x="1.50" y="8.58" font-size="6.3" fill="#6c6c6c" textLength="37.60" lengthAdjust="spacingAndGlyphs" transform="rotate(0.1 1.50 8.58)">Number in x dirn</text></svg>
<svg class="a" style="left:925px;top:162px;overflow:visible" width="9" height="12"><text x="1.80" y="8.58" font-size="6.3" fill="#6c6c6c" textLength="5.90" lengthAdjust="spacingAndGlyphs" transform="rotate(0.1 1.80 8.58)">40</text></svg>
<div class="line" style="top:172.50px"></div>
<div class="a" style="left:829px;top:172.65px;width:17px;height:8.45px;background:#ececec"></div>
<svg class="a" style="left:846px;top:170px;overflow:visible" width="34" height="12"><text x="1.50" y="9.03" font-size="6.3" fill="#6c6c6c" textLength="30.70" lengthAdjust="spacingAndGlyphs" transform="rotate(0.1 1.50 9.03)">x spacing [m]</text></svg>
<svg class="a" style="left:925px;top:170px;overflow:visible" width="14" height="12"><text x="1.80" y="9.03" font-size="6.3" fill="#6c6c6c" textLength="10.10" lengthAdjust="spacingAndGlyphs" transform="rotate(0.1 1.80 9.03)">1.52</text></svg>
<div class="line" style="top:180.95px"></div>
<div class="a" style="left:829px;top:181.10px;width:17px;height:8.45px;background:#ececec"></div>
<svg class="a" style="left:846px;top:179px;overflow:visible" width="41" height="12"><text x="1.50" y="8.48" font-size="6.3" fill="#6c6c6c" textLength="37.60" lengthAdjust="spacingAndGlyphs" transform="rotate(0.1 1.50 8.48)">Number in y dirn</text></svg>
<svg class="a" style="left:925px;top:179px;overflow:visible" width="9" height="12"><text x="1.80" y="8.48" font-size="6.3" fill="#6c6c6c" textLength="5.90" lengthAdjust="spacingAndGlyphs" transform="rotate(0.1 1.80 8.48)">40</text></svg>
<div class="line" style="top:189.40px"></div>
<div class="a" style="left:829px;top:189.55px;width:17px;height:8.45px;background:#ececec"></div>
<svg class="a" style="left:846px;top:187px;overflow:visible" width="34" height="12"><text x="1.50" y="8.93" font-size="6.3" fill="#6c6c6c" textLength="30.70" lengthAdjust="spacingAndGlyphs" transform="rotate(0.1 1.50 8.93)">y spacing [m]</text></svg>
<svg class="a" style="left:925px;top:187px;overflow:visible" width="14" height="12"><text x="1.80" y="8.93" font-size="6.3" fill="#6c6c6c" textLength="10.10" lengthAdjust="spacingAndGlyphs" transform="rotate(0.1 1.80 8.93)">1.52</text></svg>
<div class="line" style="top:197.85px"></div>
<div class="a" style="left:829px;top:198.00px;width:8px;height:8.45px;background:#ececec"></div>
<svg class="a" style="left:837px;top:196px;overflow:visible" width="30" height="12"><text x="1.80" y="8.38" font-size="6.3" fill="#6c6c6c" textLength="26.00" lengthAdjust="spacingAndGlyphs" transform="rotate(0.1 1.80 8.38)">Extend grid</text></svg>
<div class="a" style="left:926.9px;top:199.40px;width:5.6px;height:5.6px;border:0.6px solid #d4d4d6;background:#ececec"></div>
<svg class="a" style="left:926.9px;top:199.40px" width="6" height="6" viewBox="0 0 6 6"><path d="M1.3 2.8l1.2 1.4 2-2.8" stroke="#98a2b8" stroke-width="0.7" fill="none"/></svg>
<div class="line" style="top:206.30px"></div>
<div class="grow" style="top:206.45px;left:829px;width:195px"></div>
<svg class="a" style="left:830.4px;top:207.75px" width="6" height="6" viewBox="0 0 6 6"><rect x="0.3" y="0.3" width="5" height="5" rx="0.8" fill="#e2e2e2" stroke="#c4c4c8" stroke-width="0.5"/><path d="M1.5 2.8h2.6" stroke="#5a6cb8" stroke-width="0.75"/></svg>
<svg class="a" style="left:837px;top:204px;overflow:visible" width="23" height="12"><text x="1.80" y="8.87" font-size="6.4" fill="#5c5c5c" stroke="#5c5c5c" stroke-width="0.23" textLength="19.40" lengthAdjust="spacingAndGlyphs" transform="rotate(0.1 1.80 8.87)">Radius</text></svg>
<div class="a" style="left:829px;top:214.90px;width:8px;height:8.45px;background:#ececec"></div>
<svg class="a" style="left:837px;top:213px;overflow:visible" width="15" height="12"><text x="1.80" y="8.28" font-size="6.3" fill="#6c6c6c" textLength="11.70" lengthAdjust="spacingAndGlyphs" transform="rotate(0.1 1.80 8.28)">Type</text></svg>
<svg class="a" style="left:925px;top:213px;overflow:visible" width="33" height="12"><text x="1.80" y="8.28" font-size="6.3" fill="#6c6c6c" textLength="29.20" lengthAdjust="spacingAndGlyphs" transform="rotate(0.1 1.80 8.28)">Defined radii</text></svg>
<div class="line" style="top:223.20px"></div>
<div class="a" style="left:829px;top:223.35px;width:8px;height:8.45px;background:#ececec"></div>
<svg class="a" style="left:837px;top:221px;overflow:visible" width="40" height="12"><text x="1.80" y="8.73" font-size="6.3" fill="#6c6c6c" textLength="36.50" lengthAdjust="spacingAndGlyphs" transform="rotate(0.1 1.80 8.73)">Initial radius [m]</text></svg>
<svg class="a" style="left:925px;top:221px;overflow:visible" width="14" height="12"><text x="1.80" y="8.73" font-size="6.3" fill="#6c6c6c" textLength="10.10" lengthAdjust="spacingAndGlyphs" transform="rotate(0.1 1.80 8.73)">1.00</text></svg>
<div class="line" style="top:231.65px"></div>
<div class="a" style="left:829px;top:231.80px;width:8px;height:8.45px;background:#ececec"></div>
<svg class="a" style="left:837px;top:230px;overflow:visible" width="36" height="12"><text x="1.80" y="8.18" font-size="6.3" fill="#6c6c6c" textLength="32.60" lengthAdjust="spacingAndGlyphs" transform="rotate(0.1 1.80 8.18)">Increment [m]</text></svg>
<svg class="a" style="left:925px;top:230px;overflow:visible" width="14" height="12"><text x="1.80" y="8.18" font-size="6.3" fill="#6c6c6c" textLength="10.10" lengthAdjust="spacingAndGlyphs" transform="rotate(0.1 1.80 8.18)">1.00</text></svg>
<div class="line" style="top:240.10px"></div>
<div class="a" style="left:829px;top:240.25px;width:8px;height:8.45px;background:#ececec"></div>
<div class="a" style="left:839.4px;top:241.65px;width:5.8px;height:5.8px;border:0.6px solid #d2d2d2;background:linear-gradient(#fff,#f0f0f0)"></div>
<svg class="a" style="left:846px;top:238px;overflow:visible" width="45" height="12"><text x="1.50" y="8.63" font-size="6.3" fill="#6c6c6c" textLength="41.80" lengthAdjust="spacingAndGlyphs" transform="rotate(0.1 1.50 8.63)">Limit radius to: [m]</text></svg>
<svg class="a" style="left:925px;top:238px;overflow:visible" width="14" height="12"><text x="1.80" y="8.63" font-size="6.3" fill="#6c6c6c" textLength="10.10" lengthAdjust="spacingAndGlyphs" transform="rotate(0.1 1.80 8.63)">0.00</text></svg>
<div class="line" style="top:248.55px"></div>
</div>
<div class="a" style="left:829.6px;top:594.4px;width:190.6px;height:25.4px;background:#ebebeb;border:0.6px solid #d6d6d6"></div>
<div class="a" id="status"></div>
<svg class="a" style="left:3px;top:623px;overflow:visible" width="90" height="12"><text x="1.60" y="8.45" font-size="6.2" fill="#e4e4e4" textLength="86.30" lengthAdjust="spacingAndGlyphs" transform="rotate(0.1 1.60 8.45)">Press &lt;TAB&gt; to start a new record</text></svg>
<svg class="a" style="left:1014px;top:626px" width="10" height="10" viewBox="0 0 10 10"><path d="M9 3L3 9M9 5.5L5.5 9M9 8L8 9" stroke="#777" stroke-width="0.7"/></svg>
</body></html>
